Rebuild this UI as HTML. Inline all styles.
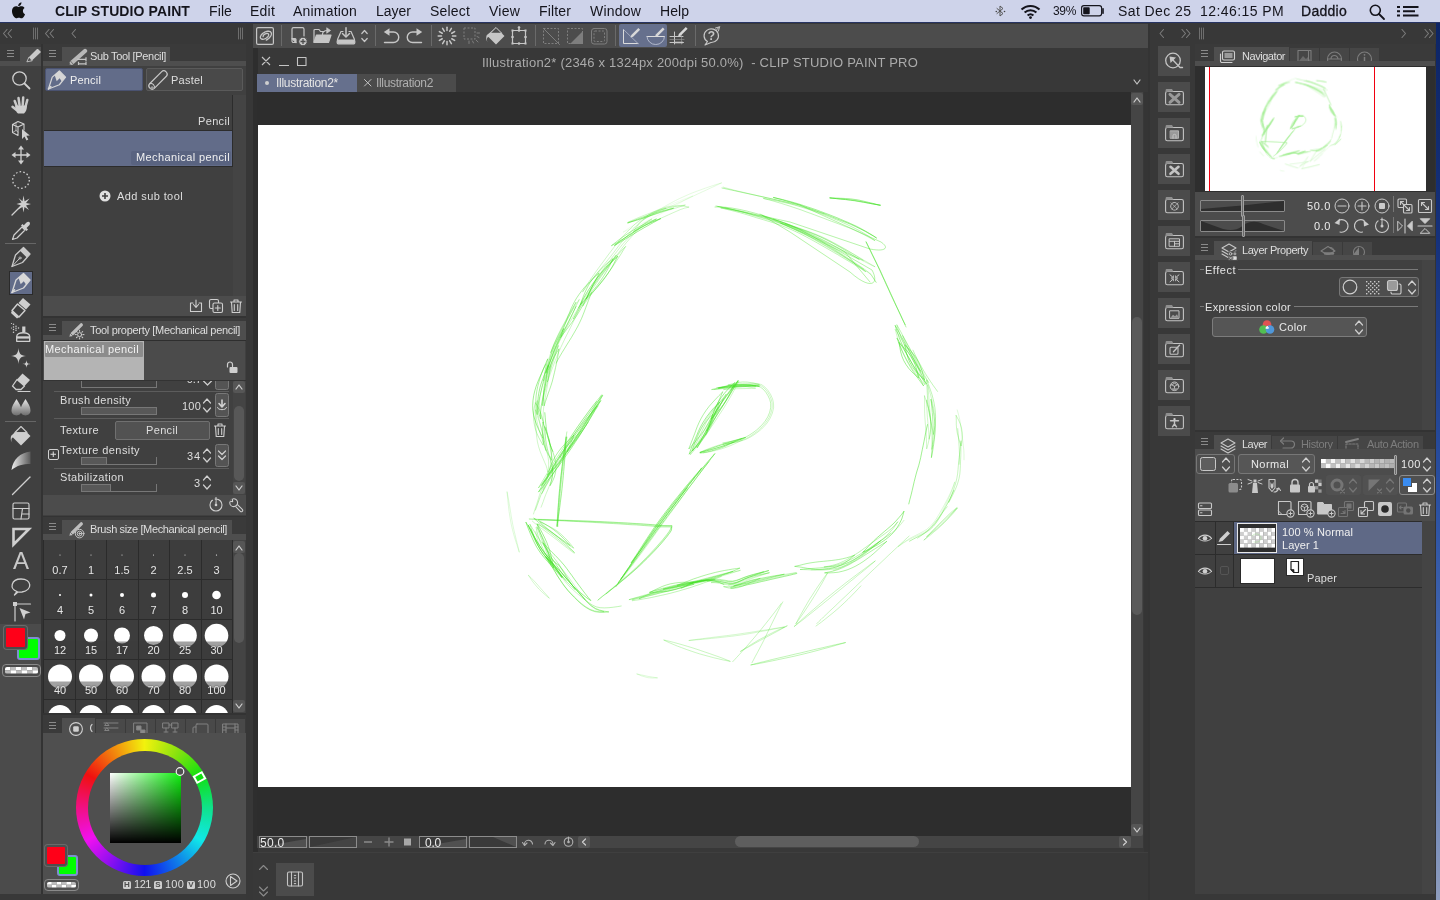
<!DOCTYPE html>
<html lang="en"><head><meta charset="utf-8"><title>CLIP STUDIO PAINT</title>
<style>
html,body{margin:0;padding:0}
body{width:1440px;height:900px;overflow:hidden;position:relative;background:#383838;font-family:"Liberation Sans",sans-serif;-webkit-font-smoothing:antialiased;will-change:transform}
body div,body svg{position:absolute;box-sizing:border-box}
.t{white-space:nowrap}
svg{overflow:visible;fill:none;stroke:#cfcfcf;stroke-width:1.2;stroke-linecap:round;stroke-linejoin:round}
svg text{stroke:none;fill:#dcdcdc;font-family:"Liberation Sans",sans-serif}
.f{fill:#cfcfcf;stroke:none}
.d{stroke:#7a7a7a}
.df{fill:#7a7a7a;stroke:none}
</style></head><body>
<div style="left:0px;top:0px;width:1440px;height:22px;background:#ced3ea;"></div>
<div style="left:0px;top:22px;width:1440px;height:1px;background:#273463;"></div>
<svg style="left:11px;top:2px;" width="16" height="18" viewBox="0 0 16 18"><path class="f" style="fill:#111" d="M10.9 4.3c.7-.8 1.1-1.900 1-3-.9.100-2 .6-2.700 1.400-.6.700-1.100 1.800-1 2.900 1 .1 2-.5 2.700-1.300zM12 5.900c-1.500-.1-2.700.8-3.400.8-.7 0-1.800-.8-3-.8C4.100 5.900 2.700 6.800 1.900 8.200.3 11 1.500 15.100 3 17.300c.8 1.100 1.700 2.300 2.900 2.300 1.100 0 1.600-.7 3-.7s1.800.7 3 .7 2-1.100 2.800-2.200c.9-1.300 1.200-2.500 1.200-2.600 0 0-2.400-.9-2.400-3.600 0-2.300 1.800-3.300 1.900-3.400-1-1.600-2.700-1.800-3.400-1.900z" transform="scale(.88) translate(0,-1)"/></svg>
<div class="t" style="top:4.15px;font-size:14px;line-height:14px;color:#14141c;font-weight:700;letter-spacing:0.102px;left:55px;">CLIP STUDIO PAINT</div>
<div class="t" style="top:4.15px;font-size:14px;line-height:14px;color:#14141c;letter-spacing:0.111px;left:209px;">File</div>
<div class="t" style="top:4.15px;font-size:14px;line-height:14px;color:#14141c;letter-spacing:0.219px;left:250px;">Edit</div>
<div class="t" style="top:4.15px;font-size:14px;line-height:14px;color:#14141c;letter-spacing:0.194px;left:293px;">Animation</div>
<div class="t" style="top:4.15px;font-size:14px;line-height:14px;color:#14141c;left:376px;">Layer</div>
<div class="t" style="top:4.15px;font-size:14px;line-height:14px;color:#14141c;letter-spacing:0.182px;left:430px;">Select</div>
<div class="t" style="top:4.15px;font-size:14px;line-height:14px;color:#14141c;letter-spacing:0.227px;left:489px;">View</div>
<div class="t" style="top:4.15px;font-size:14px;line-height:14px;color:#14141c;letter-spacing:0.148px;left:539px;">Filter</div>
<div class="t" style="top:4.15px;font-size:14px;line-height:14px;color:#14141c;letter-spacing:0.201px;left:590px;">Window</div>
<div class="t" style="top:4.15px;font-size:14px;line-height:14px;color:#14141c;letter-spacing:0.052px;left:660px;">Help</div>
<div class="t" style="top:5.34px;font-size:12px;line-height:12px;color:#14141c;letter-spacing:-0.340px;left:1053px;">39%</div>
<div class="t" style="top:4.15px;font-size:14px;line-height:14px;color:#14141c;letter-spacing:0.416px;left:1118px;white-space:pre;">Sat Dec 25  12:46:15 PM</div>
<div class="t" style="top:4.15px;font-size:14px;line-height:14px;color:#14141c;letter-spacing:0.273px;left:1301px;-webkit-text-stroke:0.3px #14141c;">Daddio</div>
<svg style="left:995px;top:4px;" width="11" height="15" viewBox="0 0 11 15"><path d="M2 4.500l6 5-3 2.500v-10l3 2.500-6 5" style="stroke:#555;stroke-width:1"/><circle cx="1.300" cy="7.500" r=".8" style="fill:#444;stroke:none"/><circle cx="9.500" cy="7.500" r=".8" style="fill:#444;stroke:none"/></svg>
<svg style="left:1020px;top:4px;" width="21" height="15" viewBox="0 0 21 15"><g style="stroke:#14141c;stroke-width:2;stroke-linecap:butt"><path d="M1.500 5.500a13 13 0 0 1 18 0"/><path d="M4.600 8.600a8.600 8.600 0 0 1 11.800 0"/><path d="M7.600 11.500a4.300 4.300 0 0 1 5.800 0"/></g><circle cx="10.500" cy="13.600" r="1.400" style="fill:#14141c;stroke:none"/></svg>
<svg style="left:1081px;top:5px;" width="24" height="12" viewBox="0 0 24 12"><rect x=".6" y=".6" width="20" height="10.300" rx="2.300" style="stroke:#14141c;stroke-width:1.100"/><rect x="2.200" y="2.200" width="6.500" height="7.100" rx=".8" style="fill:#14141c;stroke:none"/><path d="M22 3.800v4.400" style="stroke:#14141c;stroke-width:1.600"/></svg>
<svg style="left:1369px;top:4px;" width="16" height="16" viewBox="0 0 16 16"><circle cx="6.300" cy="6.300" r="5" style="stroke:#14141c;stroke-width:1.600"/><path d="M10 10l5 5" style="stroke:#14141c;stroke-width:1.800"/></svg>
<svg style="left:1397px;top:5px;" width="22" height="13" viewBox="0 0 22 13"><g style="stroke:#14141c;stroke-width:2;stroke-linecap:butt"><path d="M0 2h3M6 2h15.500M0 6.200h3M6 6.200h12M0 10.400h3M6 10.400h15.500"/></g></svg>
<div style="left:1436px;top:23px;width:4px;height:877px;background:linear-gradient(#0d2566 0%,#16327c 25%,#2b51a3 55%,#4a6db3 75%,#8f9dbd 100%);"></div>
<svg style="left:0px;top:21.5px;" width="246" height="23" viewBox="0 0 246 23"><g style="stroke:#7c7c7c;stroke-width:1.100">
<path d="M7 7.500L3.500 11.500L7 15.500M11.500 7.500L8 11.500L11.500 15.500"/>
<path d="M33.500 6v11M35.500 6v11M37.500 6v11" style="stroke-width:.8"/>
<path d="M49 7.500L45.500 11.500L49 15.500M53.500 7.500L50 11.500L53.500 15.500"/>
<path d="M75.500 7.500L72 11.500L75.500 15.500"/>
<path d="M238.500 6v11M240.500 6v11M242.500 6v11" style="stroke-width:.8"/></g></svg>
<div style="left:0px;top:44px;width:246px;height:850px;background:#333;"></div>
<div style="left:0px;top:46px;width:41px;height:848px;background:#404040;"></div>
<div style="left:0px;top:44px;width:41px;height:22px;background:#3a3a3a;"></div>
<div style="left:20px;top:47px;width:21px;height:15px;background:#4e4e4e;"></div>
<div style="left:0px;top:61px;width:41px;height:5px;background:#4e4e4e;"></div>
<svg style="left:7px;top:50px;" width="8" height="7" viewBox="0 0 8 7"><path d="M0 .5h7M0 3.500h7M0 6.500h7" style="stroke:#8a8a8a;stroke-width:1;stroke-linecap:butt"/></svg>
<div style="left:0px;top:624px;width:41px;height:270px;background:#4b4b4b;"></div>
<svg style="left:24px;top:49px;overflow:hidden;" width="18" height="14" viewBox="0 0 18 14"><path d="M3 12.500L5 8L13.500 -.5L17 3L8 11.500z" class="f" style="fill:#c9c9c9"/><path d="M3 12.500L5 8L8 11.500z" style="fill:#4e4e4e;stroke:#c9c9c9;stroke-width:.8"/></svg>
<svg style="left:9.0px;top:68.0px;" width="24" height="24" viewBox="-12.0 -12.0 24 24"><circle cx="-1.500" cy="-1.500" r="6.700" style="stroke-width:1.300"/><path d="M3.500 3.500L8.500 8.500" style="stroke-width:1.800"/></svg>
<svg style="left:9.0px;top:93.0px;" width="24" height="24" viewBox="-12.0 -12.0 24 24"><g style="stroke:#c9c9c9;stroke-width:2.500;stroke-linecap:round"><path d="M-4.300 1L-6.300 -4M-1.500 0L-2.500 -7M1.700 0L2.200 -7.500M4.700 1L6.300 -5M-4.500 5L-8.500 1.800"/></g><path class="f" d="M-5.800 .5L6 .5C6 4 5 7 3 8.500H-3C-4.500 7.500 -6 5 -5.800 .5z"/></svg>
<svg style="left:9.0px;top:118.0px;" width="24" height="24" viewBox="-12.0 -12.0 24 24"><path d="M-8.500 -5.500L-3 -8.500L3 -6L3 0M-8.500 -5.500V2.500L-3 5.500M-8.500 -5.500L-3 -3L3 -6M-3 -3V5.500" style="stroke-width:1.100"/><path class="f" d="M1 -1L1 9L3.500 6.500L5.500 10.500L7.300 9.600L5.300 5.700L8.800 5.500z"/><path d="M-8.500 2.500L-5 .5M-5 .5V-7M-5 .5L-3 2" style="stroke-width:.7"/></svg>
<svg style="left:9.0px;top:143.0px;" width="24" height="24" viewBox="-12.0 -12.0 24 24"><path d="M-6.500 0H6.500M0 -6.500V6.500" style="stroke-width:1.300"/><path class="f" d="M0 -9.500L3 -5.500H-3zM0 9.500L3 5.500H-3zM-9.500 0L-5.500 -3V3zM9.500 0L5.500 -3V3z"/></svg>
<svg style="left:9.0px;top:168.0px;" width="24" height="24" viewBox="-12.0 -12.0 24 24"><circle r="8.300" style="stroke-width:1.300;stroke-dasharray:1.600 2.140;stroke-linecap:butt"/></svg>
<svg style="left:9.0px;top:193.0px;" width="24" height="24" viewBox="-12.0 -12.0 24 24"><path d="M-9 10L1 0" style="stroke-width:1.300"/><path class="f" d="M2.500 -9.500L3.600 -3.800L8.500 -6.500L5 -2L10 -1L5 .5L8 5L3.500 2L2.500 7.500L1.500 2L-3 4.500L0 .2L-4.500 -1L.5 -2.500L-2.500 -7L1.500 -3.800z"/></svg>
<svg style="left:9.0px;top:218.0px;" width="24" height="24" viewBox="-12.0 -12.0 24 24"><path d="M-8.500 9.500L-7 5L1 -3L4 0L-4 8z" style="stroke-width:1.200"/><path class="f" d="M0 -4.500L5.500 1L7 -.5L5.500 -2L8.500 -5C10 -7 8 -9.500 5.500 -7.500L2.800 -4.800L1.500 -6z"/></svg>
<div style="left:5px;top:243px;width:31px;height:1px;background:#666;"></div>
<svg style="left:9.0px;top:245.0px;" width="24" height="24" viewBox="-12.0 -12.0 24 24"><path d="M-9 9.500L-5.500 -2L2.500 -9.500L9 -3L1.500 5.500z" style="stroke:#c9c9c9;stroke-width:1.300"/><path d="M2.500 -9.500L9 -3L5.800 .5L-1 -6.200z" style="fill:#c9c9c9;stroke:none"/><path d="M-9 9.500L-1.500 1.500" style="stroke:#c9c9c9;stroke-width:1"/><circle cx="-1" cy="1" r="1.100" style="stroke:#c9c9c9;stroke-width:.8"/></svg>
<div style="left:9px;top:271px;width:24px;height:24px;background:#626c89;border:1px solid #2a2a2a;"></div>
<svg style="left:9.0px;top:271.0px;" width="24" height="24" viewBox="-12.0 -12.0 24 24"><g transform="scale(1.0)"><path d="M-9 9.500L-5 -3L2.500 -9.500L9 -3L2.500 5z" style="stroke:#d8d8d8;stroke-width:1.300"/><path d="M2.500 -9.500L9 -3L5 1.500L2.800 -1.800L-.3 1.200L-2.500 -5.200z" style="fill:#d8d8d8;stroke:none"/><path d="M-9 9.500L-6.500 6.800" style="stroke:#d8d8d8;stroke-width:1.600"/></g></svg>
<svg style="left:9.0px;top:296.0px;" width="24" height="24" viewBox="-12.0 -12.0 24 24"><path class="f" d="M2 -10L9.500 -3.500L5 1.500L-2.500 -5z"/><path d="M-3.500 -4L4 2.500L-2 9L-9 2.500z" style="stroke-width:1.400"/><path class="f" d="M-9 2.500L-2 9L-4 10.500L-10 5z"/></svg>
<svg style="left:9.0px;top:321.0px;" width="24" height="24" viewBox="-12.0 -12.0 24 24"><path d="M-4.300 8.300V3.500C-4.300 -1.500 8.700 -1.500 8.700 3.500V8.300z" style="stroke-width:1.300"/><rect x="-4.300" y="3.300" width="13" height="2.300" class="f"/><rect x="1.200" y="-6.500" width="3.200" height="5.500" class="f"/><g class="f"><circle cx="-2.500" cy="-5" r=".75"/><circle cx="-5" cy="-6.800" r=".75"/><circle cx="-5" cy="-4.800" r=".75"/><circle cx="-5" cy="-2.800" r=".75"/><circle cx="-7.500" cy="-8.800" r=".75"/><circle cx="-7.500" cy="-6" r=".75"/><circle cx="-7.500" cy="-3.500" r=".75"/><circle cx="-7.500" cy="-.8" r=".75"/><circle cx="-9.500" cy="-9.500" r=".6"/><circle cx="-9.500" cy="-5" r=".6"/></g></svg>
<svg style="left:9.0px;top:346.0px;" width="24" height="24" viewBox="-12.0 -12.0 24 24"><path class="f" d="M-2.500 -10C-2 -4.500 -.5 -2.500 5 -2C-.5 -1.500 -2 .5 -2.500 6C-3 .5 -4.500 -1.500 -10 -2C-4.500 -2.500 -3 -4.500 -2.500 -10zM5.500 2C5.800 5 6.500 5.700 9.500 6C6.500 6.300 5.800 7 5.500 10C5.200 7 4.500 6.300 1.500 6C4.500 5.700 5.200 5 5.500 2z"/></svg>
<svg style="left:9.0px;top:371.0px;" width="24" height="24" viewBox="-12.0 -12.0 24 24"><path class="f" d="M1.500 -9.500L9 -3L3.500 3L-4 -3.500z"/><path d="M-4 -3.500L3.500 3L0 6.500H-5L-8.500 3z" style="stroke-width:1.300"/><path d="M-3 8.500H9" style="stroke-width:1.200"/></svg>
<svg style="left:8.500px;top:396px" width="24" height="24" viewBox="-12 -12 24 24"><defs><linearGradient id="gb" x1="0" y1="0" x2="0" y2="1"><stop offset="0" stop-color="#e8e8e8"/><stop offset="1" stop-color="#6e6e6e"/></linearGradient></defs><path d="M-4.500 -9C-2 -5 .5 -1.500 .5 2.500C.5 9 -9.500 9 -9.500 2.500C-9.500 -1.500 -7 -5 -4.500 -9zM4.500 -9C7 -5 9.500 -1.500 9.500 2.500C9.500 9 -.5 9 -.5 2.500C-.5 -1.500 2 -5 4.500 -9z" style="fill:url(#gb);stroke:none"/></svg>
<div style="left:5px;top:421px;width:31px;height:1px;background:#666;"></div>
<svg style="left:9.0px;top:424.0px;" width="24" height="24" viewBox="-12.0 -12.0 24 24"><path class="f" d="M0 -9.500L9.500 0L0 9.500L-8 1.500C-10 1.500 -10 6 -8.500 6.500C-10.500 6 -11 0 -9 -1z"/><path d="M-6 -3.500L0 -9.500L6 -3.500z" style="fill:#404040;stroke:#c9c9c9;stroke-width:1.100"/></svg>
<svg style="left:8.500px;top:449px" width="24" height="24" viewBox="-12 -12 24 24"><defs><linearGradient id="gg" x1="0" y1="0" x2="1" y2="0"><stop offset="0" stop-color="#f0f0f0"/><stop offset="1" stop-color="#5a5a5a"/></linearGradient></defs><path d="M-9.500 9C-8 -2 -1 -8 9.500 -9.500V3C2 3 -4 4.500 -9.500 9z" style="fill:url(#gg);stroke:none"/></svg>
<svg style="left:9.0px;top:473.5px;" width="24" height="24" viewBox="-12.0 -12.0 24 24"><path d="M-8.500 8.500L9 -9" style="stroke-width:1.300"/></svg>
<svg style="left:9.0px;top:499.0px;" width="24" height="24" viewBox="-12.0 -12.0 24 24"><rect x="-8" y="-8" width="16" height="16" rx="1.500" style="stroke-width:1.150"/><path d="M-8 -2.500H8M1.500 -2.500L0 8M.8 3H8" style="stroke-width:1.150"/></svg>
<svg style="left:9.0px;top:524.0px;" width="24" height="24" viewBox="-12.0 -12.0 24 24"><path d="M-7.500 -7L8 -7L-7.500 8.500z" style="stroke-width:2.600;stroke-linejoin:miter"/></svg>
<div class="t" style="top:548.68px;font-size:24px;line-height:24px;color:#c9c9c9;left:-79px;width:200px;text-align:center;">A</div>
<svg style="left:9.0px;top:574.0px;" width="24" height="24" viewBox="-12.0 -12.0 24 24"><path d="M-4 5.500C-12 3 -10 -7 0 -7C11 -7 12 4 1 6C-1 6.300 -2 6.300 -3 6L-6.500 9z" style="stroke-width:1.300"/></svg>
<svg style="left:9.0px;top:599.0px;" width="24" height="24" viewBox="-12.0 -12.0 24 24"><rect x="-8" y="-9" width="4" height="4" class="f"/><path d="M-6 -7V10M-6 -7H9.500" style="stroke-width:1.200"/><path class="f" d="M-1.500 -3L9.500 1.500L4.500 3L3 8.500z"/></svg>
<div style="left:43px;top:46px;width:203px;height:270px;background:#404040;"></div>
<div style="left:43px;top:44px;width:203px;height:22px;background:#3a3a3a;"></div>
<div style="left:62px;top:47px;width:108px;height:15px;background:#4e4e4e;"></div>
<div style="left:43px;top:61px;width:203px;height:5px;background:#4e4e4e;"></div>
<svg style="left:49px;top:50px;" width="8" height="7" viewBox="0 0 8 7"><path d="M0 .5h7M0 3.500h7M0 6.500h7" style="stroke:#8a8a8a;stroke-width:1;stroke-linecap:butt"/></svg>
<div class="t" style="top:51.19px;font-size:11px;line-height:11px;color:#dedede;letter-spacing:-0.338px;left:90px;">Sub Tool [Pencil]</div>
<div style="left:45px;top:68px;width:98px;height:23px;background:#626c89;border-radius:2px;border:1px solid #4a5270;"></div>
<div style="left:146px;top:68px;width:97px;height:23px;background:#494949;border-radius:2px;border:1px solid #5a5a5a;"></div>
<div class="t" style="top:74.69px;font-size:11px;line-height:11px;color:#f0f0f0;letter-spacing:0.173px;left:70px;">Pencil</div>
<div class="t" style="top:74.69px;font-size:11px;line-height:11px;color:#dedede;letter-spacing:0.238px;left:171px;">Pastel</div>
<svg style="left:66px;top:47px;overflow:hidden" width="24" height="18" viewBox="66 47 24 18"><path d="M71.89 62.67L85.00 51.00" style="stroke:#b8b8b8;stroke-width:4.3;stroke-linecap:round"/><path d="M69.50 64.80L72.95 63.87L70.83 61.48z" style="fill:#b8b8b8;stroke:none"/><path d="M73.15 64.09L70.63 61.25" style="stroke:#4e4e4e;stroke-width:.7"/><g style="stroke:#c4c4c4;stroke-width:1.200;stroke-linecap:butt"><path d="M77 59.300H86.500M78 63.800H86.500M86 57.300V61.300M86 61.800V65.800M78.500 61.800V65.800"/></g></svg>
<svg style="left:45.0px;top:67.5px;" width="24" height="24" viewBox="-12.0 -12.0 24 24"><g transform="scale(0.95)"><path d="M-9 9.500L-5 -3L2.500 -9.500L9 -3L2.500 5z" style="stroke:#d6d6d6;stroke-width:1.300"/><path d="M2.500 -9.500L9 -3L5 1.500L2.800 -1.800L-.3 1.200L-2.500 -5.200z" style="fill:#d6d6d6;stroke:none"/><path d="M-9 9.500L-6.500 6.800" style="stroke:#d6d6d6;stroke-width:1.600"/></g></svg>
<svg style="left:146.0px;top:68.0px;" width="24" height="24" viewBox="-12.0 -12.0 24 24"><g transform="rotate(-45)"><rect x="-11.500" y="-3.300" width="23" height="6.600" rx="3.300" style="stroke:#c8c8c8;stroke-width:1.200"/><path d="M-8.500 -3.200A3.500 3.500 0 0 1 -8.500 3.200" style="stroke:#c8c8c8;stroke-width:1"/><path d="M-11.300 0A3.300 3.300 0 0 0 -8 3.300L-8.500 0z" style="fill:#9a9a9a;stroke:none"/></g></svg>
<div style="left:233px;top:95px;width:13px;height:201px;background:#444;"></div>
<div style="left:232px;top:95px;width:1px;height:72px;background:#2c2c2c;"></div>
<div style="left:44px;top:130px;width:188px;height:1px;background:#2c2c2c;"></div>
<div style="left:44px;top:131px;width:188px;height:35px;background:#626c89;"></div>
<div style="left:44px;top:166px;width:188px;height:1px;background:#2c2c2c;"></div>
<div style="left:131px;top:150.5px;width:100px;height:14.5px;background:#596380;border-radius:2px;"></div>
<div class="t" style="top:115.99px;font-size:11px;line-height:11px;color:#dedede;letter-spacing:0.340px;left:198px;">Pencil</div>
<div class="t" style="top:151.99px;font-size:11px;line-height:11px;color:#f0f0f0;letter-spacing:0.386px;left:136px;">Mechanical pencil</div>
<div class="t" style="top:190.99px;font-size:11px;line-height:11px;color:#dedede;letter-spacing:0.404px;left:117px;">Add sub tool</div>
<svg style="left:92.5px;top:184.0px;" width="24" height="24" viewBox="-12.0 -12.0 24 24"><circle r="5.500" class="f" style="fill:#e0e0e0"/><path d="M-3 0h6M0 -3v6" style="stroke:#404040;stroke-width:1.600;stroke-linecap:butt"/></svg>
<div style="left:43px;top:296px;width:203px;height:20px;background:#4c4c4c;"></div>
<svg style="left:184.0px;top:294.0px;" width="24" height="24" viewBox="-12.0 -12.0 24 24"><path d="M-5.500 -3v8.500h11v-8.500M-5.500 -3h2.500M5.500 -3h-2.500M0 -6v7M-2.500 -1.500L0 1.500L2.500 -1.500" style="stroke-width:1.100"/></svg>
<svg style="left:204.0px;top:294.0px;" width="24" height="24" viewBox="-12.0 -12.0 24 24"><rect x="-6.500" y="-6.500" width="9" height="9" rx="1.500" style="stroke-width:1.100"/><rect x="-3" y="-3" width="9.500" height="9.500" rx="1.500" style="stroke-width:1.100;fill:#4c4c4c"/><path d="M1.800 -0.500v5M-.7 2h5" style="stroke-width:1.100"/></svg>
<svg style="left:224.0px;top:294.0px;" width="24" height="24" viewBox="-12.0 -12.0 24 24"><g style="stroke:#cfcfcf;stroke-width:1.100"><path d="M-5.500 -4h11M-2 -4v-2h4v2M-4.500 -4l.7 10.500h7.600l.7-10.500M-1.700 -1.500v6M1.700 -1.500v6"/></g></svg>
<div style="left:43px;top:320px;width:203px;height:196px;background:#404040;"></div>
<div style="left:43px;top:318px;width:203px;height:22px;background:#3a3a3a;"></div>
<div style="left:62px;top:321px;width:184px;height:15px;background:#4e4e4e;"></div>
<div style="left:43px;top:335px;width:203px;height:6px;background:#4e4e4e;"></div>
<svg style="left:49px;top:324px;" width="8" height="7" viewBox="0 0 8 7"><path d="M0 .5h7M0 3.500h7M0 6.500h7" style="stroke:#8a8a8a;stroke-width:1;stroke-linecap:butt"/></svg>
<div class="t" style="top:325.19px;font-size:11px;line-height:11px;color:#dedede;letter-spacing:-0.309px;left:90px;">Tool property [Mechanical pencil]</div>
<div style="left:54px;top:391px;width:175px;height:1px;background:#5c5c5c;"></div>
<div style="left:54px;top:418px;width:175px;height:1px;background:#5c5c5c;"></div>
<div style="left:54px;top:468px;width:175px;height:1px;background:#5c5c5c;"></div>
<div style="left:233px;top:380px;width:12px;height:115px;background:#444;"></div>
<div style="left:233px;top:381px;width:12px;height:12px;background:#565656;border-radius:2px;"></div>
<svg style="left:233px;top:381px" width="12" height="12" viewBox="-6 -6 12 12"><path d="M-3 2L0 -2L3 2" style="stroke:#cfcfcf;stroke-width:1.2"/></svg>
<div style="left:234px;top:406px;width:10px;height:75px;background:#585858;border-radius:5px;"></div>
<div style="left:233px;top:482px;width:12px;height:12px;background:#565656;border-radius:2px;"></div>
<svg style="left:233px;top:482px" width="12" height="12" viewBox="-6 -6 12 12"><path d="M-3 -2L0 2L3 -2" style="stroke:#cfcfcf;stroke-width:1.2"/></svg>
<div style="left:81px;top:380px;width:76px;height:8px;border-bottom:1px solid #777;border-right:1px solid #777;border-left:1px solid #777;"></div>
<svg style="left:203px;top:380px;" width="9" height="6" viewBox="0 0 9 6"><path d="M.5 1L4.500 5L8.500 1" style="stroke-width:1.200"/></svg>
<div style="left:215px;top:378px;width:14px;height:12px;background:#545454;border:1px solid #787878;border-radius:2.500px;"></div>
<div style="left:180px;top:380px;width:24px;height:5px;overflow:hidden"><div class="t" style="left:6.800px;top:-6.500px;font-size:11px;line-height:11px;color:#dedede;letter-spacing:-.15px">0.7</div></div>
<div style="left:43px;top:340px;width:203px;height:1px;background:#2e2e2e;"></div>
<div style="left:43px;top:341px;width:202px;height:39px;background:#4b4b4b;"></div>
<div style="left:44px;top:341px;width:100px;height:38.5px;background:#b4b4b4;"></div>
<div style="left:45px;top:342px;width:98px;height:15px;background:#8c8c8c;border-radius:1px;"></div>
<div class="t" style="top:343.69px;font-size:11px;line-height:11px;color:#f2f2f2;letter-spacing:0.386px;left:45px;">Mechanical pencil</div>
<div style="left:43px;top:379.5px;width:203px;height:0.8px;background:#333;"></div>
<svg style="left:220.0px;top:355.0px;" width="24" height="24" viewBox="-12.0 -12.0 24 24"><rect x="-2.500" y="0" width="8" height="6" class="f" rx="1"/><path d="M-4.500 0v-2.500a2.500 2.500 0 0 1 5 0V-.5" style="stroke-width:1.200"/></svg>
<div class="t" style="top:394.69px;font-size:11px;line-height:11px;color:#dedede;letter-spacing:0.335px;left:60px;">Brush density</div>
<div style="left:81px;top:407px;width:76px;height:8px;background:#585858;border:1px solid #777;"></div>
<div class="t" style="top:400.69px;font-size:11px;line-height:11px;color:#dedede;letter-spacing:0.215px;left:182px;">100</div>
<svg style="left:201px;top:395.0px" width="12" height="12" viewBox="-6 -6 12 12"><path d="M-3.5 2L0 -2L3.5 2" style="stroke:#cfcfcf;stroke-width:1.2"/></svg>
<svg style="left:201px;top:404.0px" width="12" height="12" viewBox="-6 -6 12 12"><path d="M-3.5 -2L0 2L3.5 -2" style="stroke:#cfcfcf;stroke-width:1.2"/></svg>
<div style="left:215px;top:393px;width:14px;height:24px;background:#545454;border:1px solid #787878;border-radius:2.500px;"></div>
<svg style="left:210.0px;top:393.0px;" width="24" height="24" viewBox="-12.0 -12.0 24 24"><path d="M0 -5v6M-3 -1.500L0 2L3 -1.500" style="stroke-width:1.600"/><path d="M-4.500 2.500c0 3 9 3 9 0" style="stroke-width:1"/></svg>
<div class="t" style="top:424.69px;font-size:11px;line-height:11px;color:#dedede;letter-spacing:0.418px;left:60px;">Texture</div>
<div style="left:115px;top:421px;width:95px;height:19px;background:#525252;border:1px solid #707070;border-radius:2px;"></div>
<div class="t" style="top:424.69px;font-size:11px;line-height:11px;color:#dedede;letter-spacing:0.340px;left:146px;">Pencil</div>
<svg style="left:208.0px;top:418.0px;" width="24" height="24" viewBox="-12.0 -12.0 24 24"><g style="stroke:#cfcfcf;stroke-width:1.100"><path d="M-5.500 -4h11M-2 -4v-2h4v2M-4.500 -4l.7 10.500h7.600l.7-10.500M-1.700 -1.500v6M1.700 -1.500v6"/></g></svg>
<div style="left:48px;top:449px;width:10.5px;height:10.5px;border:1px solid #d0d0d0;border-radius:2px;"></div>
<svg style="left:48px;top:449px;" width="11" height="11" viewBox="0 0 11 11"><path d="M2.500 5.250h5.500M5.250 2.500v5.500" style="stroke:#e0e0e0;stroke-width:1;stroke-linecap:butt"/></svg>
<div class="t" style="top:445.19px;font-size:11px;line-height:11px;color:#dedede;letter-spacing:0.401px;left:60px;">Texture density</div>
<div style="left:81px;top:457px;width:76px;height:8px;border-bottom:1px solid #777;border-right:1px solid #777;"></div>
<div style="left:81px;top:457px;width:26px;height:8px;background:#585858;border:1px solid #777;"></div>
<div class="t" style="top:450.69px;font-size:11px;line-height:11px;color:#dedede;letter-spacing:0.882px;left:187px;">34</div>
<svg style="left:201px;top:445.0px" width="12" height="12" viewBox="-6 -6 12 12"><path d="M-3.5 2L0 -2L3.5 2" style="stroke:#cfcfcf;stroke-width:1.2"/></svg>
<svg style="left:201px;top:454.0px" width="12" height="12" viewBox="-6 -6 12 12"><path d="M-3.5 -2L0 2L3.5 -2" style="stroke:#cfcfcf;stroke-width:1.2"/></svg>
<div style="left:215px;top:444px;width:14px;height:23px;background:#545454;border:1px solid #787878;border-radius:2.500px;"></div>
<svg style="left:210.0px;top:443.5px;" width="24" height="24" viewBox="-12.0 -12.0 24 24"><path d="M-3.500 -5L0 -1.500L3.500 -5M-3.500 0L0 3.500L3.500 0" style="stroke-width:1.200"/></svg>
<div class="t" style="top:471.69px;font-size:11px;line-height:11px;color:#dedede;letter-spacing:0.360px;left:60px;">Stabilization</div>
<div style="left:81px;top:484px;width:76px;height:8px;border-bottom:1px solid #777;border-right:1px solid #777;"></div>
<div style="left:81px;top:484px;width:30px;height:8px;background:#585858;border:1px solid #777;"></div>
<div class="t" style="top:477.69px;font-size:11px;line-height:11px;color:#dedede;letter-spacing:0.882px;left:194px;">3</div>
<svg style="left:201px;top:472.0px" width="12" height="12" viewBox="-6 -6 12 12"><path d="M-3.5 2L0 -2L3.5 2" style="stroke:#cfcfcf;stroke-width:1.2"/></svg>
<svg style="left:201px;top:481.0px" width="12" height="12" viewBox="-6 -6 12 12"><path d="M-3.5 -2L0 2L3.5 -2" style="stroke:#cfcfcf;stroke-width:1.2"/></svg>
<div style="left:43px;top:495px;width:203px;height:20px;background:#4c4c4c;"></div>
<svg style="left:204.0px;top:493.0px;" width="24" height="24" viewBox="-12.0 -12.0 24 24"><circle r="6" style="stroke-width:1.100"/><circle r="1.300" class="f"/><path d="M0 0V-7.500" style="stroke-width:1.100"/><path d="M-3 -6.800L-1.500 -4" style="stroke:#4c4c4c;stroke-width:2"/></svg>
<svg style="left:224.0px;top:493.0px;" width="24" height="24" viewBox="-12.0 -12.0 24 24"><path d="M-.5 -.5L5.300 5.300" style="stroke:#cfcfcf;stroke-width:3.800"/><path d="M-.5 -.5L5.300 5.300" style="stroke:#4c4c4c;stroke-width:1.700"/><circle cx="-2.300" cy="-2.300" r="3.900" style="fill:#4c4c4c;stroke:#cfcfcf;stroke-width:1.100"/><path d="M-2.800 -2.800L-3.300 -8L-8 -3.300z" style="fill:#4c4c4c;stroke:none"/><path d="M-5.900 -3.700L-3.300 -3.300L-3.700 -5.900" style="stroke:#cfcfcf;stroke-width:1.100"/></svg>
<div style="left:43px;top:519px;width:203px;height:194px;background:#404040;"></div>
<div style="left:43px;top:517px;width:203px;height:22px;background:#3a3a3a;"></div>
<div style="left:62px;top:520px;width:170px;height:15px;background:#4e4e4e;"></div>
<div style="left:43px;top:534px;width:203px;height:6px;background:#4e4e4e;"></div>
<svg style="left:49px;top:523px;" width="8" height="7" viewBox="0 0 8 7"><path d="M0 .5h7M0 3.500h7M0 6.500h7" style="stroke:#8a8a8a;stroke-width:1;stroke-linecap:butt"/></svg>
<div class="t" style="top:523.69px;font-size:11px;line-height:11px;color:#dedede;letter-spacing:-0.365px;left:90px;">Brush size [Mechanical pencil]</div>
<div style="left:44px;top:540px;width:188px;height:173px;background:#3d3d3d;"></div>
<div style="left:43px;top:540px;width:1px;height:173px;background:#2b2b2b;"></div>
<div style="left:75px;top:540px;width:1px;height:173px;background:#2b2b2b;"></div>
<div style="left:106px;top:540px;width:1px;height:173px;background:#2b2b2b;"></div>
<div style="left:138px;top:540px;width:1px;height:173px;background:#2b2b2b;"></div>
<div style="left:169px;top:540px;width:1px;height:173px;background:#2b2b2b;"></div>
<div style="left:201px;top:540px;width:1px;height:173px;background:#2b2b2b;"></div>
<div style="left:232px;top:540px;width:1px;height:173px;background:#2b2b2b;"></div>
<div style="left:44px;top:579px;width:188px;height:1px;background:#2b2b2b;"></div>
<div style="left:44px;top:619px;width:188px;height:1px;background:#2b2b2b;"></div>
<div style="left:44px;top:659px;width:188px;height:1px;background:#2b2b2b;"></div>
<div style="left:44px;top:699px;width:188px;height:1px;background:#2b2b2b;"></div>
<svg style="left:44px;top:540px;overflow:hidden" width="188" height="173" viewBox="0 0 188 173"><circle cx="16" cy="15" r="0.5" style="fill:#fff;stroke:none"/><circle cx="47" cy="15" r="0.5" style="fill:#fff;stroke:none"/><circle cx="78" cy="15" r="0.5" style="fill:#fff;stroke:none"/><circle cx="109.5" cy="15" r="0.5" style="fill:#fff;stroke:none"/><circle cx="141" cy="15" r="0.5" style="fill:#fff;stroke:none"/><circle cx="172.5" cy="15" r="0.6" style="fill:#fff;stroke:none"/><circle cx="16" cy="55" r="1" style="fill:#fff;stroke:none"/><circle cx="47" cy="55" r="1.5" style="fill:#fff;stroke:none"/><circle cx="78" cy="55" r="2" style="fill:#fff;stroke:none"/><circle cx="109.5" cy="55" r="2.5" style="fill:#fff;stroke:none"/><circle cx="141" cy="55" r="3" style="fill:#fff;stroke:none"/><circle cx="172.5" cy="55" r="4.3" style="fill:#fff;stroke:none"/><circle cx="16" cy="95.5" r="5.5" style="fill:#fff;stroke:none"/><circle cx="47" cy="95.5" r="7" style="fill:#fff;stroke:none"/><circle cx="78" cy="95.5" r="8" style="fill:#fff;stroke:none"/><circle cx="109.5" cy="95.5" r="9.5" style="fill:#fff;stroke:none"/><circle cx="141" cy="95.5" r="11.8" style="fill:#fff;stroke:none"/><circle cx="172.5" cy="95.5" r="11.8" style="fill:#fff;stroke:none"/><circle cx="16" cy="136.5" r="12" style="fill:#fff;stroke:none"/><circle cx="47" cy="136.5" r="12" style="fill:#fff;stroke:none"/><circle cx="78" cy="136.5" r="12" style="fill:#fff;stroke:none"/><circle cx="109.5" cy="136.5" r="12" style="fill:#fff;stroke:none"/><circle cx="141" cy="136.5" r="12" style="fill:#fff;stroke:none"/><circle cx="172.5" cy="136.5" r="12" style="fill:#fff;stroke:none"/><circle cx="16" cy="177" r="12" style="fill:#fff;stroke:none"/><circle cx="47" cy="177" r="12" style="fill:#fff;stroke:none"/><circle cx="78" cy="177" r="12" style="fill:#fff;stroke:none"/><circle cx="109.5" cy="177" r="12" style="fill:#fff;stroke:none"/><circle cx="141" cy="177" r="12" style="fill:#fff;stroke:none"/><circle cx="172.5" cy="177" r="12" style="fill:#fff;stroke:none"/><clipPath id="gc"><rect x="0" y="0" width="188" height="173"/></clipPath><rect x="0" y="101.500" width="188" height="18" style="fill:#3d3d3d;opacity:.48;stroke:none"/><rect x="0" y="141.500" width="188" height="18" style="fill:#3d3d3d;opacity:.48;stroke:none"/></svg>
<div style="left:75px;top:540px;width:1px;height:173px;background:#2b2b2b;"></div>
<div style="left:106px;top:540px;width:1px;height:173px;background:#2b2b2b;"></div>
<div style="left:138px;top:540px;width:1px;height:173px;background:#2b2b2b;"></div>
<div style="left:169px;top:540px;width:1px;height:173px;background:#2b2b2b;"></div>
<div style="left:201px;top:540px;width:1px;height:173px;background:#2b2b2b;"></div>
<div style="left:44px;top:579px;width:188px;height:1px;background:#2b2b2b;"></div>
<div style="left:44px;top:619px;width:188px;height:1px;background:#2b2b2b;"></div>
<div style="left:44px;top:659px;width:188px;height:1px;background:#2b2b2b;"></div>
<div style="left:44px;top:699px;width:188px;height:1px;background:#2b2b2b;"></div>
<div class="t" style="top:564.69px;font-size:11px;line-height:11px;color:#e6e6e6;left:-40px;width:200px;text-align:center;text-shadow:0 0 2px #3d3d3d,0 0 1px #3d3d3d;">0.7</div>
<div class="t" style="top:564.69px;font-size:11px;line-height:11px;color:#e6e6e6;left:-9px;width:200px;text-align:center;text-shadow:0 0 2px #3d3d3d,0 0 1px #3d3d3d;">1</div>
<div class="t" style="top:564.69px;font-size:11px;line-height:11px;color:#e6e6e6;left:22px;width:200px;text-align:center;text-shadow:0 0 2px #3d3d3d,0 0 1px #3d3d3d;">1.5</div>
<div class="t" style="top:564.69px;font-size:11px;line-height:11px;color:#e6e6e6;left:53.5px;width:200px;text-align:center;text-shadow:0 0 2px #3d3d3d,0 0 1px #3d3d3d;">2</div>
<div class="t" style="top:564.69px;font-size:11px;line-height:11px;color:#e6e6e6;left:85px;width:200px;text-align:center;text-shadow:0 0 2px #3d3d3d,0 0 1px #3d3d3d;">2.5</div>
<div class="t" style="top:564.69px;font-size:11px;line-height:11px;color:#e6e6e6;left:116.5px;width:200px;text-align:center;text-shadow:0 0 2px #3d3d3d,0 0 1px #3d3d3d;">3</div>
<div class="t" style="top:604.69px;font-size:11px;line-height:11px;color:#e6e6e6;left:-40px;width:200px;text-align:center;text-shadow:0 0 2px #3d3d3d,0 0 1px #3d3d3d;">4</div>
<div class="t" style="top:604.69px;font-size:11px;line-height:11px;color:#e6e6e6;left:-9px;width:200px;text-align:center;text-shadow:0 0 2px #3d3d3d,0 0 1px #3d3d3d;">5</div>
<div class="t" style="top:604.69px;font-size:11px;line-height:11px;color:#e6e6e6;left:22px;width:200px;text-align:center;text-shadow:0 0 2px #3d3d3d,0 0 1px #3d3d3d;">6</div>
<div class="t" style="top:604.69px;font-size:11px;line-height:11px;color:#e6e6e6;left:53.5px;width:200px;text-align:center;text-shadow:0 0 2px #3d3d3d,0 0 1px #3d3d3d;">7</div>
<div class="t" style="top:604.69px;font-size:11px;line-height:11px;color:#e6e6e6;left:85px;width:200px;text-align:center;text-shadow:0 0 2px #3d3d3d,0 0 1px #3d3d3d;">8</div>
<div class="t" style="top:604.69px;font-size:11px;line-height:11px;color:#e6e6e6;left:116.5px;width:200px;text-align:center;text-shadow:0 0 2px #3d3d3d,0 0 1px #3d3d3d;">10</div>
<div class="t" style="top:644.69px;font-size:11px;line-height:11px;color:#e6e6e6;left:-40px;width:200px;text-align:center;text-shadow:0 0 2px #3d3d3d,0 0 1px #3d3d3d;">12</div>
<div class="t" style="top:644.69px;font-size:11px;line-height:11px;color:#e6e6e6;left:-9px;width:200px;text-align:center;text-shadow:0 0 2px #3d3d3d,0 0 1px #3d3d3d;">15</div>
<div class="t" style="top:644.69px;font-size:11px;line-height:11px;color:#e6e6e6;left:22px;width:200px;text-align:center;text-shadow:0 0 2px #3d3d3d,0 0 1px #3d3d3d;">17</div>
<div class="t" style="top:644.69px;font-size:11px;line-height:11px;color:#e6e6e6;left:53.5px;width:200px;text-align:center;text-shadow:0 0 2px #3d3d3d,0 0 1px #3d3d3d;">20</div>
<div class="t" style="top:644.69px;font-size:11px;line-height:11px;color:#e6e6e6;left:85px;width:200px;text-align:center;text-shadow:0 0 2px #3d3d3d,0 0 1px #3d3d3d;">25</div>
<div class="t" style="top:644.69px;font-size:11px;line-height:11px;color:#e6e6e6;left:116.5px;width:200px;text-align:center;text-shadow:0 0 2px #3d3d3d,0 0 1px #3d3d3d;">30</div>
<div class="t" style="top:684.69px;font-size:11px;line-height:11px;color:#e6e6e6;left:-40px;width:200px;text-align:center;text-shadow:0 0 2px #3d3d3d,0 0 1px #3d3d3d;">40</div>
<div class="t" style="top:684.69px;font-size:11px;line-height:11px;color:#e6e6e6;left:-9px;width:200px;text-align:center;text-shadow:0 0 2px #3d3d3d,0 0 1px #3d3d3d;">50</div>
<div class="t" style="top:684.69px;font-size:11px;line-height:11px;color:#e6e6e6;left:22px;width:200px;text-align:center;text-shadow:0 0 2px #3d3d3d,0 0 1px #3d3d3d;">60</div>
<div class="t" style="top:684.69px;font-size:11px;line-height:11px;color:#e6e6e6;left:53.5px;width:200px;text-align:center;text-shadow:0 0 2px #3d3d3d,0 0 1px #3d3d3d;">70</div>
<div class="t" style="top:684.69px;font-size:11px;line-height:11px;color:#e6e6e6;left:85px;width:200px;text-align:center;text-shadow:0 0 2px #3d3d3d,0 0 1px #3d3d3d;">80</div>
<div class="t" style="top:684.69px;font-size:11px;line-height:11px;color:#e6e6e6;left:116.5px;width:200px;text-align:center;text-shadow:0 0 2px #3d3d3d,0 0 1px #3d3d3d;">100</div>
<div style="left:233px;top:540px;width:12px;height:173px;background:#444;"></div>
<div style="left:233px;top:541px;width:12px;height:12px;background:#565656;border-radius:2px;"></div>
<svg style="left:233px;top:541.5px" width="12" height="12" viewBox="-6 -6 12 12"><path d="M-3 2L0 -2L3 2" style="stroke:#cfcfcf;stroke-width:1.2"/></svg>
<div style="left:234px;top:553px;width:10px;height:90px;background:#585858;border-radius:5px;"></div>
<div style="left:233px;top:700px;width:12px;height:12px;background:#565656;border-radius:2px;"></div>
<svg style="left:233px;top:700px" width="12" height="12" viewBox="-6 -6 12 12"><path d="M-3 -2L0 2L3 -2" style="stroke:#cfcfcf;stroke-width:1.2"/></svg>
<div style="left:43px;top:717px;width:203px;height:177px;background:#4f4f4f;"></div>
<div style="left:43px;top:715px;width:203px;height:18px;background:#3a3a3a;"></div>
<div style="left:62px;top:718px;width:33px;height:16px;background:#4f4f4f;"></div>
<svg style="left:49px;top:722px;" width="8" height="7" viewBox="0 0 8 7"><path d="M0 .5h7M0 3.500h7M0 6.500h7" style="stroke:#8a8a8a;stroke-width:1;stroke-linecap:butt"/></svg>
<div style="left:96px;top:719px;width:29px;height:14px;background:#494949;"></div>
<div style="left:126px;top:719px;width:29px;height:14px;background:#494949;"></div>
<div style="left:156px;top:719px;width:29px;height:14px;background:#494949;"></div>
<div style="left:186px;top:719px;width:29px;height:14px;background:#494949;"></div>
<div style="left:216px;top:719px;width:29px;height:14px;background:#494949;"></div>
<svg style="left:88px;top:723px;clip-path:inset(0 0 0.5px 0);" width="6" height="10" viewBox="0 0 6 10"><path d="M4 1.500c-2 1.500-2 5.500 0 7" style="stroke-width:1.200"/></svg>
<svg style="left:96px;top:719px;overflow:hidden" width="29" height="14" viewBox="0 0 29 14"><g style="stroke:#828282;stroke-width:1"><path d="M8 4h14M8 9h14M11 4l2 2.500h-4zM11 9l2 2.500h-4z"/></g></svg>
<svg style="left:126px;top:719px;overflow:hidden" width="29" height="14" viewBox="0 0 29 14"><g style="stroke:#828282;stroke-width:1"><rect x="8" y="4" width="13" height="12"/><rect x="11" y="7" width="4" height="4" style="fill:#8a8a8a"/><rect x="15" y="11" width="4" height="4" style="fill:#8a8a8a"/></g></svg>
<svg style="left:156px;top:719px;overflow:hidden" width="29" height="14" viewBox="0 0 29 14"><g style="stroke:#828282;stroke-width:1"><rect x="7" y="4" width="6" height="5"/><rect x="16" y="4" width="6" height="5"/><path d="M10 9v4M19 9v4M13 6h3M8 13h4M17 13h4"/></g></svg>
<svg style="left:186px;top:719px;overflow:hidden" width="29" height="14" viewBox="0 0 29 14"><g style="stroke:#828282;stroke-width:1"><rect x="10" y="5" width="12" height="12" rx="1"/><path d="M7 14v-5a1 1 0 0 1 1 -1h2"/></g></svg>
<svg style="left:216px;top:719px;overflow:hidden" width="29" height="14" viewBox="0 0 29 14"><g style="stroke:#828282;stroke-width:1"><rect x="7" y="5" width="15" height="12"/><path d="M10 5v9M19 5v9M10 9h9M7 8h3M7 11h3M19 8h3M19 11h3"/></g></svg>
<svg style="left:63.900000000000006px;top:716.7px;" width="24" height="24" viewBox="-12.0 -12.0 24 24"><circle r="6.400" style="stroke-width:1.100"/><rect x="-2.800" y="-2.800" width="5.600" height="5.600" rx="1.200" class="f"/></svg>
<div style="left:76px;top:739px;width:137px;height:137px;border-radius:50%;background:conic-gradient(#f2f20d 0deg,#8be20f 30deg,#10e010 60deg,#0fe28a 90deg,#10e8e8 120deg,#0f78e8 150deg,#1010f0 180deg,#8510f0 210deg,#f010f0 240deg,#f01082 270deg,#f01010 300deg,#f2820d 330deg,#f2f20d 360deg);"></div>
<div style="left:87.5px;top:750.5px;width:114px;height:114px;background:#4f4f4f;border-radius:50%;"></div>
<div style="left:110px;top:772.5px;width:70.5px;height:70.5px;background:linear-gradient(to bottom,rgba(0,0,0,0),#000),linear-gradient(to right,#fff,#10f010);"></div>
<svg style="left:174px;top:765px;" width="12" height="12" viewBox="0 0 12 12"><circle cx="6" cy="6.500" r="3.800" style="stroke:#f4f4f4;stroke-width:1.200;fill:#4f4f4f"/></svg>
<div style="left:194px;top:772.5px;width:11px;height:9px;background:#0ee20e;border:2px solid #fff;transform:rotate(-29deg);"></div>
<div style="left:56.5px;top:854.5px;width:21.5px;height:21.5px;background:#00ff00;border:2px solid #7d8fd0;border-radius:3px;"></div>
<div style="left:45px;top:844.5px;width:21.5px;height:21.5px;background:#ff0018;border:2px solid #4f4f4f;border-radius:3px;box-shadow:0 0 0 1px #6a6a6a;"></div>
<div style="left:44px;top:879px;width:35px;height:11.5px;border:1px solid #8a8a8a;border-radius:4px;"></div>
<svg style="left:47px;top:882px;border-radius:2px;overflow:hidden" width="29" height="5.5"><rect x="0.00" y="0.00" width="4.83" height="2.75" style="fill:#fff;stroke:none"/><rect x="0.00" y="2.75" width="4.83" height="2.75" style="fill:#bdbdbd;stroke:none"/><rect x="4.83" y="0.00" width="4.83" height="2.75" style="fill:#bdbdbd;stroke:none"/><rect x="4.83" y="2.75" width="4.83" height="2.75" style="fill:#fff;stroke:none"/><rect x="9.67" y="0.00" width="4.83" height="2.75" style="fill:#fff;stroke:none"/><rect x="9.67" y="2.75" width="4.83" height="2.75" style="fill:#bdbdbd;stroke:none"/><rect x="14.50" y="0.00" width="4.83" height="2.75" style="fill:#bdbdbd;stroke:none"/><rect x="14.50" y="2.75" width="4.83" height="2.75" style="fill:#fff;stroke:none"/><rect x="19.33" y="0.00" width="4.83" height="2.75" style="fill:#fff;stroke:none"/><rect x="19.33" y="2.75" width="4.83" height="2.75" style="fill:#bdbdbd;stroke:none"/><rect x="24.17" y="0.00" width="4.83" height="2.75" style="fill:#bdbdbd;stroke:none"/><rect x="24.17" y="2.75" width="4.83" height="2.75" style="fill:#fff;stroke:none"/></svg>
<div style="left:16.5px;top:636.5px;width:23px;height:23px;background:#00ff00;border:2px solid #7d8fd0;border-radius:3px;"></div>
<div style="left:3.5px;top:625.5px;width:23px;height:23px;background:#ff0018;border:2px solid #4b4b4b;border-radius:3px;box-shadow:0 0 0 1px #6a6a6a;"></div>
<div style="left:2px;top:664px;width:39px;height:12.5px;border:1px solid #8a8a8a;border-radius:4px;"></div>
<svg style="left:5px;top:667px;border-radius:2px;overflow:hidden" width="33" height="6.5"><rect x="0.00" y="0.00" width="5.50" height="3.25" style="fill:#fff;stroke:none"/><rect x="0.00" y="3.25" width="5.50" height="3.25" style="fill:#bdbdbd;stroke:none"/><rect x="5.50" y="0.00" width="5.50" height="3.25" style="fill:#bdbdbd;stroke:none"/><rect x="5.50" y="3.25" width="5.50" height="3.25" style="fill:#fff;stroke:none"/><rect x="11.00" y="0.00" width="5.50" height="3.25" style="fill:#fff;stroke:none"/><rect x="11.00" y="3.25" width="5.50" height="3.25" style="fill:#bdbdbd;stroke:none"/><rect x="16.50" y="0.00" width="5.50" height="3.25" style="fill:#bdbdbd;stroke:none"/><rect x="16.50" y="3.25" width="5.50" height="3.25" style="fill:#fff;stroke:none"/><rect x="22.00" y="0.00" width="5.50" height="3.25" style="fill:#fff;stroke:none"/><rect x="22.00" y="3.25" width="5.50" height="3.25" style="fill:#bdbdbd;stroke:none"/><rect x="27.50" y="0.00" width="5.50" height="3.25" style="fill:#bdbdbd;stroke:none"/><rect x="27.50" y="3.25" width="5.50" height="3.25" style="fill:#fff;stroke:none"/></svg>
<div style="left:123px;top:880.5px;width:8px;height:8px;background:#cfcfcf;border-radius:1.500px;"></div>
<div class="t" style="top:880.73px;font-size:8px;line-height:8px;color:#4f4f4f;font-weight:700;left:27px;width:200px;text-align:center;">H</div>
<div style="left:154px;top:880.5px;width:8px;height:8px;background:#cfcfcf;border-radius:1.500px;"></div>
<div class="t" style="top:880.73px;font-size:8px;line-height:8px;color:#4f4f4f;font-weight:700;left:58px;width:200px;text-align:center;">S</div>
<div style="left:187px;top:880.5px;width:8px;height:8px;background:#cfcfcf;border-radius:1.500px;"></div>
<div class="t" style="top:880.73px;font-size:8px;line-height:8px;color:#4f4f4f;font-weight:700;left:91px;width:200px;text-align:center;">V</div>
<div class="t" style="top:878.89px;font-size:11px;line-height:11px;color:#dedede;letter-spacing:-0.451px;left:134px;">121</div>
<div class="t" style="top:878.89px;font-size:11px;line-height:11px;color:#dedede;letter-spacing:0.215px;left:165px;">100</div>
<div class="t" style="top:878.89px;font-size:11px;line-height:11px;color:#dedede;letter-spacing:0.215px;left:197px;">100</div>
<svg style="left:221.0px;top:869.0px;" width="24" height="24" viewBox="-12.0 -12.0 24 24"><circle r="7" style="stroke-width:1.100"/><path d="M-2.500 -4.500L4 0L-2.500 4.500z" style="stroke-width:1.100"/></svg>
<svg style="left:66px;top:321px;overflow:hidden" width="24" height="19" viewBox="66 321 24 19"><path d="M71.56 334.54L81.30 324.80" style="stroke:#bebebe;stroke-width:3.3;stroke-linecap:round"/><path d="M69.30 336.80L72.69 335.67L70.43 333.41z" style="fill:#bebebe;stroke:none"/><path d="M72.91 335.88L70.22 333.19" style="stroke:#4e4e4e;stroke-width:.7"/><g transform="translate(79.600,334.600)" style="stroke:#d0d0d0;stroke-width:1"><circle r="2.000" style="fill:#4e4e4e"/><path d="M0 -3.200V-4.400" transform="rotate(0)"/><path d="M0 -3.200V-4.400" transform="rotate(45)"/><path d="M0 -3.200V-4.400" transform="rotate(90)"/><path d="M0 -3.200V-4.400" transform="rotate(135)"/><path d="M0 -3.200V-4.400" transform="rotate(180)"/><path d="M0 -3.200V-4.400" transform="rotate(225)"/><path d="M0 -3.200V-4.400" transform="rotate(270)"/><path d="M0 -3.200V-4.400" transform="rotate(315)"/></g></svg>
<svg style="left:66px;top:520px;overflow:hidden" width="24" height="19" viewBox="66 520 24 19"><path d="M71.56 533.54L81.30 523.80" style="stroke:#bebebe;stroke-width:3.3;stroke-linecap:round"/><path d="M69.30 535.80L72.69 534.67L70.43 532.41z" style="fill:#bebebe;stroke:none"/><path d="M72.91 534.88L70.22 532.19" style="stroke:#4e4e4e;stroke-width:.7"/><g transform="translate(79.600,533.600)" style="stroke:#d0d0d0;stroke-width:.9"><circle r="4.300" style="fill:#4e4e4e"/><circle r="2.400"/><circle r=".7" style="fill:#d0d0d0"/></g></svg>
<div style="left:246px;top:23px;width:6.5px;height:877px;background:#373737;"></div>
<div style="left:252.5px;top:24px;width:895.5px;height:24px;background:#4c4c4c;"></div>
<div style="left:281px;top:25px;width:1px;height:21px;background:#6a6a6a;"></div>
<div style="left:375px;top:25px;width:1px;height:21px;background:#6a6a6a;"></div>
<div style="left:431px;top:25px;width:1px;height:21px;background:#6a6a6a;"></div>
<div style="left:535px;top:25px;width:1px;height:21px;background:#6a6a6a;"></div>
<div style="left:615px;top:25px;width:1px;height:21px;background:#6a6a6a;"></div>
<div style="left:695px;top:25px;width:1px;height:21px;background:#6a6a6a;"></div>
<svg style="left:256px;top:27px;" width="18" height="18" viewBox="0 0 18 18"><g style="stroke:#c6c6c6;stroke-width:1.200"><rect x=".6" y=".6" width="16.800" height="16.800" rx="1.500"/><path d="M7.15 9.56L7.11 9.31L7.14 9.02L7.25 8.70L7.44 8.36L7.70 8.01L8.03 7.67L8.43 7.35L8.88 7.05L9.37 6.80L9.88 6.61L10.40 6.48L10.90 6.42L11.38 6.45L11.80 6.55L12.16 6.74L12.43 7.01L12.60 7.36L12.66 7.77L12.61 8.23L12.44 8.74L12.15 9.27L11.75 9.81L11.25 10.34L10.65 10.83L9.98 11.28L9.26 11.66L8.50 11.96L7.74 12.17L7.01 12.27L6.31 12.25L5.69 12.12L5.17 11.87L4.76 11.51L4.49 11.05L4.36 10.50L4.40 9.87L4.59 9.18L4.95 8.46L5.46 7.73L6.11 7.01L6.88 6.32L7.76 5.70L8.71 5.17L9.70 4.74L10.71 4.43L11.69 4.26L12.62 4.23L13.47 4.36L14.19 4.64L14.77 5.06L15.17 5.62L15.39 6.30L15.41 7.08L15.23 7.94L14.84 8.84L14.25 9.77L13.48 10.69L12.55 11.57L11.49 12.38L10.32 13.09" style="stroke-width:1.300"/></g></svg>
<svg style="left:291px;top:27px;" width="18" height="20" viewBox="0 0 18 20"><g style="stroke:#c6c6c6;stroke-width:1.200"><path d="M5 15.500H2.500A1.500 1.500 0 0 1 1 14V2A1.500 1.500 0 0 1 2.500 .6H11.500A1.500 1.500 0 0 1 13 2V9"/><path d="M1 11.500L5 15.500V12.500A1 1 0 0 0 4 11.500z" style="fill:#c6c6c6"/><circle cx="12" cy="14.500" r="4.300" style="fill:#c6c6c6;stroke:#4c4c4c;stroke-width:1"/><path d="M12 12v5M9.500 14.500h5" style="stroke:#4c4c4c;stroke-width:1.300;stroke-linecap:butt"/></g></svg>
<svg style="left:313px;top:27px;" width="19" height="18" viewBox="0 0 19 18"><g style="stroke:#c6c6c6;stroke-width:1.200"><path d="M1 15V3.500A1 1 0 0 1 2 2.500H6L7.500 4.500H11" /><path d="M1 15.500L3.500 8H18L15.500 15.500z" style="fill:#c6c6c6"/><path d="M9.500 7.500C9.500 5 11 3.500 14.500 3.500" /><path d="M14 1l3.500 2.500L14 6z" style="fill:#c6c6c6;stroke-width:.8"/></g></svg>
<svg style="left:336px;top:27px;" width="20" height="18" viewBox="0 0 20 18"><g style="stroke:#c6c6c6;stroke-width:1.200"><path d="M1.500 12.500L5 4.500H7M18.500 12.500L15 4.500H13"/><rect x="1.200" y="13" width="17.600" height="3.800" rx="1" style="fill:#c6c6c6"/><path d="M10 .8V9" style="stroke-width:1.500"/><path d="M6.500 6.500L10 10L13.500 6.500" style="stroke-width:1.500"/></g></svg>
<svg style="left:361px;top:29px;" width="7" height="14" viewBox="0 0 7 14"><g style="stroke:#c6c6c6;stroke-width:1.200"><path d="M.8 4.500L3.500 1.500L6.200 4.500M.8 9.500L3.500 12.500L6.200 9.500"/></g></svg>
<svg style="left:383px;top:28px;" width="17" height="16" viewBox="0 0 17 16"><g style="stroke:#c6c6c6;stroke-width:1.200"><path d="M5 4H10.500A5 5 0 0 1 10.500 14.500H1.500" style="stroke-width:1.400"/><path d="M6.500 .2V7.800L.8 4z" style="fill:#c6c6c6;stroke:none"/></g></svg>
<svg style="left:406px;top:28px;" width="17" height="16" viewBox="0 0 17 16"><g style="stroke:#c6c6c6;stroke-width:1.200"><path d="M12 4H6.500A5 5 0 0 0 6.500 14.500H15.500" style="stroke-width:1.400"/><path d="M10.500 .2V7.800L16.200 4z" style="fill:#c6c6c6;stroke:none"/></g></svg>
<svg style="left:437px;top:26px" width="20" height="20" viewBox="-10 -10 20 20"><g style="stroke:#c6c6c6;stroke-width:1.500"><path d="M0 -5.500V-8.800" transform="rotate(0)"/><path d="M0 -5.500V-8.800" transform="rotate(30)"/><path d="M0 -5.500V-8.800" transform="rotate(60)"/><path d="M0 -5.500V-8.800" transform="rotate(90)"/><path d="M0 -5.500V-8.800" transform="rotate(120)"/><path d="M0 -5.500V-8.800" transform="rotate(150)"/><path d="M0 -5.500V-8.800" transform="rotate(180)"/><path d="M0 -5.500V-8.800" transform="rotate(210)"/><path d="M0 -5.500V-8.800" transform="rotate(240)"/><path d="M0 -5.500V-8.800" transform="rotate(270)"/><path d="M0 -5.500V-8.800" transform="rotate(300)"/><path d="M0 -5.500V-8.800" transform="rotate(330)"/></g></svg>
<svg style="left:463px;top:27px;" width="18" height="18" viewBox="0 0 18 18"><g style="stroke:#c6c6c6;stroke-width:1.200"><rect x="1" y="1" width="11" height="11" style="stroke:#7e7e7e;stroke-dasharray:2 1.500;stroke-linecap:butt;stroke-width:1"/><g style="stroke:#7e7e7e;stroke-width:1"><path d="M14 6h2.500M14 9.500l2 1M13 13l2 2M9.500 14l1 2M6 14v2.500"/></g></g></svg>
<svg style="left:485px;top:26px;" width="21" height="20" viewBox="0 0 21 20"><g style="stroke:#c6c6c6;stroke-width:1.200"><path d="M11 1.500L19.500 10L11 18.500L3.500 11C1.500 11 1.500 15.500 3 16C1 15.500 .5 9.500 2.500 8.500z" style="fill:#c6c6c6;stroke:none"/><path d="M5.500 7L11 1.500L16.500 7z" style="fill:#4c4c4c;stroke-width:1"/></g></svg>
<svg style="left:510px;top:26px;" width="19" height="20" viewBox="0 0 19 20"><g style="stroke:#c6c6c6;stroke-width:1.200"><rect x="2.500" y="4.500" width="13" height="13" /><path d="M9 1V4.500"/><g style="fill:#c6c6c6;stroke:none"><circle cx="9" cy="1.500" r="1.300"/><circle cx="2.500" cy="11" r="1.300"/><circle cx="15.500" cy="11" r="1.300"/><circle cx="9" cy="17.500" r="1.300"/><circle cx="9" cy="4.500" r="1.300"/><rect x="1.500" y="3.500" width="2" height="2"/><rect x="14.500" y="3.500" width="2" height="2"/><rect x="1.500" y="16.500" width="2" height="2"/><rect x="14.500" y="16.500" width="2" height="2"/></g></g></svg>
<svg style="left:543px;top:28px;" width="17" height="17" viewBox="0 0 17 17"><g style="stroke:#c6c6c6;stroke-width:1.200"><rect x=".5" y=".5" width="15" height="15" style="stroke:#7e7e7e;stroke-dasharray:2 1.500;stroke-linecap:butt;stroke-width:1"/><path d="M.5 .5L16.500 16.500" style="stroke:#7e7e7e;stroke-width:1"/></g></svg>
<svg style="left:567px;top:28px;" width="17" height="17" viewBox="0 0 17 17"><g style="stroke:#c6c6c6;stroke-width:1.200"><rect x=".5" y=".5" width="15" height="15" style="stroke:#7e7e7e;stroke-dasharray:2 1.500;stroke-linecap:butt;stroke-width:1"/><path d="M16 3V16H3z" style="fill:#7e7e7e;stroke:none"/></g></svg>
<svg style="left:591px;top:28px;" width="17" height="17" viewBox="0 0 17 17"><g style="stroke:#c6c6c6;stroke-width:1.200"><rect x=".5" y=".5" width="15.500" height="15.500" rx="2.500" style="stroke:#7e7e7e;stroke-width:1"/><rect x="3" y="3" width="10.500" height="10.500" rx="1" style="stroke:#7e7e7e;stroke-dasharray:2 1.500;stroke-linecap:butt;stroke-width:1"/></g></svg>
<div style="left:619px;top:24px;width:48px;height:23px;background:#66708d;border-radius:2px;"></div>
<svg style="left:622px;top:26px;" width="20" height="20" viewBox="0 0 20 20"><g style="stroke:#c6c6c6;stroke-width:1.200"><path d="M16 17.500H1.500V3.500" style="stroke:#dcdcdc;stroke-width:1;stroke-linejoin:miter"/><path d="M1.500 3.500L16 17.500" style="stroke:#aab0c4;stroke-width:.9"/><path d="M8.5 11.5L9.3 8.9L16.3 1.9000000000000004L18.1 3.7L11.1 10.7z" style="fill:#d8d8d8;stroke:none"/></g></svg>
<svg style="left:645px;top:26px;" width="22" height="20" viewBox="0 0 22 20"><g style="stroke:#c6c6c6;stroke-width:1.200"><path d="M2 10.500H19.500" style="stroke:#dcdcdc;stroke-width:1"/><path d="M19.500 10.500A8.700 8 0 0 1 2 10.500" style="stroke:#b8bed0;stroke-width:.9"/><path d="M10 11L10.8 8.4L17.8 1.4000000000000004L19.6 3.2L12.6 10.2z" style="fill:#d8d8d8;stroke:none"/></g></svg>
<svg style="left:669px;top:26px;" width="21" height="20" viewBox="0 0 21 20"><g style="stroke:#c6c6c6;stroke-width:1.200"><path d="M1 10.500H14M5.500 6V18M1 16.500H14.500" style="stroke-width:1"/><path d="M12.500 8V18M1 13.500H15" style="stroke-width:.6;stroke:#9a9a9a"/><path d="M5.500 16.500H14" style="stroke-width:1.600;stroke-linecap:butt"/><path d="M9 10.5L9.8 7.9L16.8 0.9000000000000004L18.6 2.7L11.6 9.7z" style="fill:#d8d8d8;stroke:none"/></g></svg>
<svg style="left:702px;top:26px;" width="20" height="20" viewBox="0 0 20 20"><g style="stroke:#c6c6c6;stroke-width:1.200"><path d="M5.500 15.500A7.200 6.800 0 1 1 9 16.500L3 19z" /><path d="M13.500 2L17.500 .8L16.500 5" style="stroke-width:1"/><path d="M14 4.500L17.500 .8" style="stroke-width:1"/></g></svg>
<div class="t" style="top:30.34px;font-size:12px;line-height:12px;color:#c6c6c6;font-weight:700;left:611.5px;width:200px;text-align:center;">?</div>
<div style="left:252.5px;top:48px;width:5.5px;height:805px;background:#2e2e2e;"></div>
<svg style="left:262px;top:56px;" width="46" height="14" viewBox="0 0 46 14"><g style="stroke:#c4c4c4;stroke-width:1.100;stroke-linecap:butt"><path d="M0 1L8 9M8 1L0 9M17 9.500H27M35.500 1.500h8.500v8h-8.500z"/></g></svg>
<div class="t" style="top:56.00px;font-size:13px;line-height:13px;color:#ababab;letter-spacing:0.217px;left:482px;white-space:pre;">Illustration2* (2346 x 1324px 200dpi 50.0%)  - CLIP STUDIO PAINT PRO</div>
<div style="left:257px;top:74px;width:100px;height:18px;background:#66708d;"></div>
<div style="left:357px;top:74px;width:99px;height:18px;background:#4b4b4b;"></div>
<div style="left:265px;top:81px;width:4px;height:4px;background:#cfcfcf;border-radius:2px;"></div>
<div class="t" style="top:76.84px;font-size:12px;line-height:12px;color:#e4e4e4;letter-spacing:-0.289px;left:276px;">Illustration2*</div>
<svg style="left:364px;top:79px;" width="8" height="8" viewBox="0 0 8 8"><path d="M.5 .5L7 7M7 .5L.5 7" style="stroke:#c4c4c4;stroke-width:1"/></svg>
<div class="t" style="top:76.84px;font-size:12px;line-height:12px;color:#b0b0b0;letter-spacing:-0.336px;left:376px;">Illustration2</div>
<svg style="left:1131px;top:76px" width="12" height="12" viewBox="-6 -6 12 12"><path d="M-3 -2L0 2L3 -2" style="stroke:#c4c4c4;stroke-width:1.2"/></svg>
<div style="left:257px;top:92px;width:874px;height:744px;background:#2d2d2d;"></div>
<div style="left:258px;top:125px;width:873px;height:662px;background:#fff;"></div>
<svg style="left:258px;top:125px;overflow:hidden" width="873" height="662" viewBox="258 125 873 662"><g style="stroke:#3ee01e;stroke-width:.55;fill:none"><path d="M582.8 305.9L585.1 302.7L587.4 299.6L589.8 296.3L592.5 293.0L594.7 290.1L597.2 287.1L599.7 283.9L602.3 280.6L604.9 277.3L607.5 273.9L609.9 270.6L612.2 267.3L614.3 264.2L616.2 261.3L619.1 257.0L621.5 253.2L623.6 249.7L625.7 246.4L625.7 246.4L622.9 249.2L620.2 252.2L617.2 255.5L613.8 259.4L611.5 262.0L609.0 264.8L606.4 267.8L603.8 271.0L601.1 274.4L598.6 277.8L596.1 281.3L593.8 284.7L591.7 288.0L589.9 291.3L587.8 295.1L586.0 298.7L584.4 302.3L582.8 305.9" style="opacity:0.6"/><path d="M580.5 304.6L583.1 301.6L585.8 298.6L588.6 295.5L591.4 292.3L593.8 289.5L596.3 286.5L598.8 283.2L601.2 279.8L603.6 276.2L605.8 272.6L607.9 269.0L609.8 265.4L611.5 262.0L612.9 258.7L612.9 258.7L610.2 260.9L607.2 263.4L604.2 266.1L601.2 269.1L598.3 272.2L595.5 275.4L592.8 278.8L590.4 282.2L588.3 285.7L586.6 289.0L584.7 293.1L583.1 297.0L581.7 300.8L580.5 304.6" style="opacity:0.75"/><path d="M586.4 299.0L589.2 295.9L592.1 292.7L594.7 290.1L597.3 287.2L600.0 284.1L602.6 280.9L605.2 277.5L607.6 274.0L609.9 270.5L612.0 267.1L613.8 263.8L615.4 260.6L617.9 256.1L617.9 256.1L614.2 259.7L611.5 262.0L608.8 264.6L605.9 267.4L603.1 270.5L600.4 273.8L597.8 277.2L595.4 280.7L593.2 284.2L591.3 287.8L589.7 291.2L588.0 295.2L586.4 299.0" style="opacity:0.9"/><path d="M578.6 307.9L580.5 304.6L582.5 301.3L584.6 297.9L586.9 294.5L589.4 290.9L591.5 287.9L593.9 284.7L596.4 281.5L599.0 278.1L601.6 274.8L604.3 271.4L606.8 268.2L609.3 265.0L611.6 262.1L613.7 259.3L616.8 255.2L619.5 251.6L621.9 248.4L624.2 245.3L626.6 242.4L629.4 239.2L632.2 236.0L635.1 232.8L638.1 229.6L641.2 226.6L644.7 223.7L648.6 221.0L651.9 219.0L651.9 219.0L648.5 220.8L644.4 223.3L640.7 226.0L637.4 228.9L634.2 231.9L631.2 235.0L628.2 238.2L625.3 241.2L622.7 244.1L620.3 247.1L617.8 250.3L615.0 253.9L611.9 257.9L609.8 260.7L607.5 263.6L605.1 266.8L602.6 270.1L600.0 273.5L597.5 277.0L595.0 280.4L592.6 283.8L590.4 287.1L588.4 290.2L586.1 294.0L584.0 297.5L582.1 301.0L580.3 304.4L578.6 307.9" style="opacity:0.45"/><path d="M546.0 372.8L547.3 368.9L548.7 364.9L550.1 361.0L551.5 357.1L552.9 353.2L554.4 349.4L556.2 345.1L558.0 340.9L559.9 336.7L561.8 332.6L563.7 328.5L563.7 328.5L561.5 332.4L559.3 336.4L557.1 340.5L555.1 344.7L553.3 348.9L551.8 352.7L550.4 356.7L549.2 360.7L548.0 364.7L546.9 368.8L546.0 372.8" style="opacity:0.9"/><path d="M543.7 380.6L545.0 376.8L546.4 372.9L547.7 369.0L549.2 365.1L550.6 361.2L552.1 357.3L553.7 353.4L555.2 349.7L557.1 345.5L559.0 341.4L561.0 337.3L563.0 333.2L565.1 329.2L567.1 325.2L569.0 321.3L570.9 317.4L572.7 313.7L574.3 310.0L576.0 306.5L577.6 303.0L579.3 299.4L579.3 299.4L577.2 302.7L575.1 306.0L573.0 309.3L571.0 312.8L568.9 316.3L566.7 320.0L564.5 323.8L562.3 327.7L560.1 331.7L558.0 335.8L556.0 340.0L554.1 344.2L552.3 348.5L550.9 352.4L549.6 356.4L548.4 360.4L547.4 364.5L546.3 368.6L545.4 372.6L544.5 376.7L543.7 380.6" style="opacity:0.45"/><path d="M556.1 363.0L558.1 359.4L560.1 355.9L562.1 352.5L564.4 348.8L566.7 345.0L569.0 341.3L571.4 337.5L573.6 333.7L575.8 329.9L577.9 326.1L579.8 322.2L581.6 318.4L583.1 314.7L584.5 311.1L585.8 307.5L587.2 303.9L588.5 300.3L590.0 296.5L591.8 292.4" style="opacity:0.75"/><path d="M547.5 368.9L548.9 365.0L550.3 361.1L551.8 357.2L553.3 353.3L554.8 349.5L556.7 345.4L558.6 341.2L560.6 337.1L562.7 333.0L564.7 329.0L566.8 325.1L568.8 321.2L570.7 317.3L572.5 313.6L574.3 310.0L576.0 306.5" style="opacity:0.9"/><path d="M550.9 352.4L552.5 348.6L554.4 344.4L556.5 340.2L558.6 336.1L560.7 332.0L562.8 328.0L564.9 324.1L567.0 320.2L569.0 316.4L570.8 312.7L572.6 309.1L574.3 305.6L576.1 302.1L576.1 302.1L574.1 305.5L572.1 308.9L570.2 312.3L568.1 315.9L566.1 319.7L564.0 323.5L561.8 327.5L559.8 331.5L557.7 335.7L555.8 339.9L553.9 344.2L552.3 348.5L550.9 352.4" style="opacity:0.6"/><path d="M633.7 231.4L637.5 229.0L641.4 226.8L645.4 224.7L649.7 222.8L653.2 221.5L656.9 220.0L660.7 218.3L664.6 216.6L668.5 214.8L672.5 213.0L676.4 211.3L680.3 209.6L684.4 208.2L689.1 207.1L689.1 207.1L684.3 206.2L679.7 205.8L675.1 205.9L670.5 206.3L665.9 207.2L661.5 208.5L657.2 210.1L653.1 212.1L649.4 214.3L646.1 216.8L642.2 220.1L638.9 223.8L636.1 227.6L633.7 231.4" style="opacity:0.45"/><path d="M547.5 381.6L548.9 377.9L550.2 374.0L551.6 370.2L553.1 366.3L554.5 362.4L556.0 358.6L557.5 354.9L559.1 351.2L560.9 347.2L562.8 343.2L564.7 339.1L566.7 335.1L568.7 331.1L570.7 327.2L572.6 323.2L574.5 319.3L576.3 315.6L577.9 311.9L579.5 308.4L581.1 304.9L582.8 301.4L582.8 301.4L580.6 304.6L578.5 307.9L576.5 311.2L574.4 314.6L572.3 318.1L570.1 321.8L567.8 325.6L565.6 329.5L563.5 333.5L561.4 337.5L559.4 341.6L557.5 345.7L555.9 349.9L554.5 353.8L553.3 357.7L552.1 361.7L551.0 365.7L550.1 369.7L549.2 373.7L548.3 377.7L547.5 381.6" style="opacity:0.45"/><path d="M582.7 291.8L585.3 288.2L587.6 285.1L590.0 281.9L592.6 278.7L595.3 275.3L598.0 272.0L600.7 268.7L603.3 265.5L605.9 262.4L608.2 259.5L610.4 256.8L613.5 252.8L616.2 249.2L618.7 245.9L621.2 242.8L623.7 239.8L626.5 236.6L629.4 233.4L632.4 230.1L635.4 226.9L638.8 223.7L642.5 220.6L646.6 217.7L650.1 215.7L653.8 213.6L657.8 211.6L661.9 209.8L666.2 208.1L666.2 208.1L661.8 209.4L657.5 211.0L653.4 212.7L649.5 214.5L645.8 216.4L641.4 219.1L637.4 222.1L633.8 225.2L630.5 228.4L627.5 231.6L624.4 234.7L621.5 237.8L618.9 241.0L616.4 244.1L613.9 247.4L611.2 251.0L608.1 255.0L606.1 257.8L603.9 260.8L601.5 264.0L599.0 267.4L596.5 270.8L594.0 274.4L591.6 277.9L589.2 281.4L587.0 284.8L585.0 288.0L582.7 291.8" style="opacity:0.45"/><path d="M573.4 318.8L575.6 315.2L577.6 311.8L579.6 308.4L581.6 305.2L583.6 301.9L585.7 298.6L588.0 295.2L590.4 291.6L592.5 288.6L594.8 285.4L597.2 282.0L599.6 278.6L602.1 275.1L604.6 271.7L607.0 268.3L609.4 265.1L611.5 262.0L613.5 259.1L616.4 254.9L616.4 254.9L613.1 258.9L610.9 261.5L608.4 264.3L605.8 267.4L603.2 270.6L600.5 273.9L597.8 277.2L595.2 280.6L592.7 283.9L590.4 287.1L588.3 290.2L586.0 293.9L583.9 297.5L582.0 301.0L580.3 304.4L578.6 307.9L576.9 311.4L575.2 315.0L573.4 318.8" style="opacity:0.6"/><path d="M560.8 337.2L563.5 333.5L566.3 329.9L569.0 326.3L571.7 322.7L574.2 319.2L576.6 315.7L578.7 312.4L580.7 309.0L582.6 305.7L584.4 302.4L586.3 298.9L588.1 295.2L590.1 291.4L591.7 288.0L593.5 284.4L595.3 280.7L597.3 276.8L599.2 272.9L599.2 272.9L596.0 275.9L592.9 278.8L589.8 281.8L587.0 284.7L584.3 287.6L581.5 291.1L579.0 294.5L576.7 297.9L574.7 301.3L572.9 304.8L571.2 308.4L569.7 312.1L568.1 315.9L566.6 320.0L565.1 324.1L563.6 328.4L562.2 332.8L560.8 337.2" style="opacity:0.75"/><path d="M627.8 222.4L630.4 221.8L633.8 220.9L637.9 219.7L642.4 218.4L647.1 216.9L651.8 215.4L656.2 214.0L660.2 212.7L664.6 211.3L669.2 210.0L673.8 208.6L678.2 207.3L682.1 206.1L685.4 205.0L685.4 205.0L681.9 205.5L677.9 206.1L673.4 206.9L668.7 207.8L664.0 208.9L659.4 210.1L655.4 211.3L650.9 212.8L646.3 214.5L641.7 216.3L637.3 218.1L633.4 219.8L630.2 221.2L627.8 222.4" style="opacity:0.45"/><path d="M628.0 222.9L630.5 222.1L633.9 221.1L637.9 219.8L642.4 218.3L647.0 216.7L651.7 215.1L656.1 213.6L660.1 212.3L664.5 210.9L669.1 209.5L673.7 208.2L673.7 208.2L669.0 209.3L664.4 210.4L659.9 211.5L655.8 212.7L651.3 214.1L646.7 215.7L642.1 217.4L637.7 219.0L633.7 220.6L630.4 221.9L628.0 222.9" style="opacity:0.75"/><path d="M611.7 245.5L614.0 244.3L617.1 242.6L620.6 240.5L624.6 238.1L628.7 235.6L632.7 233.0L636.6 230.5L640.2 228.3L644.1 225.9L648.3 223.5L652.5 221.1L656.5 218.9L656.5 218.9L652.3 220.6L647.8 222.5L643.4 224.6L639.2 226.7L635.6 228.8L631.6 231.2L627.5 233.8L623.5 236.5L619.8 239.2L616.5 241.7L613.7 243.9L611.7 245.5" style="opacity:0.75"/><path d="M614.7 245.3L617.7 243.6L621.3 241.5L625.2 239.1L629.4 236.6L633.5 234.1L637.4 231.7L640.9 229.6L644.9 227.3L649.0 225.0L653.3 222.6L657.3 220.4L660.9 218.5L660.9 218.5L657.1 220.0L652.8 221.8L648.4 223.8L644.1 225.9L640.0 228.0L636.4 230.1L632.5 232.6L628.5 235.3L624.5 238.0L620.8 240.7L617.5 243.2L614.7 245.3" style="opacity:0.9"/><path d="M623.3 232.0L626.3 230.8L629.6 229.3L633.1 227.7L636.9 225.9L640.9 224.0L645.0 222.0L649.2 219.9L653.5 217.7L657.8 215.4L662.0 213.1L666.1 210.9L670.1 208.6L674.0 206.4L677.7 204.3L681.1 202.4L685.0 200.2L689.0 198.1L693.1 195.9L693.1 195.9L688.7 197.4L684.4 199.0L680.3 200.6L676.6 202.1L672.7 203.7L668.6 205.6L664.4 207.6L660.2 209.7L655.9 211.9L651.7 214.2L647.5 216.6L643.4 219.0L639.5 221.4L635.7 223.7L632.2 226.0L628.9 228.1L625.9 230.2L623.3 232.0" style="opacity:0.15"/><path d="M643.5 219.3L647.8 217.2L652.2 215.2L656.6 213.2L660.9 211.1L665.2 209.1L669.4 207.1L673.4 205.2L677.2 203.4L680.8 201.8L684.8 199.9L689.0 198.0L693.2 196.1L697.5 194.1L701.8 192.1L706.0 190.2L710.2 188.2L714.2 186.4L718.1 184.5L721.8 182.8L721.8 182.8L717.9 184.0L713.8 185.3L709.6 186.7L705.2 188.2L700.8 189.8L696.3 191.4L691.9 193.1L687.6 194.9L683.4 196.8L679.4 198.6L675.8 200.4L672.0 202.4L668.1 204.5L664.0 206.8L659.9 209.2L655.8 211.7L651.6 214.2L647.6 216.7L643.5 219.3" style="opacity:0.25"/><path d="M725.1 207.9L729.6 208.8L734.5 209.9L739.6 211.2L744.9 212.6L750.3 214.1L753.5 215.1L756.9 216.0L760.3 217.0L763.8 218.0L767.4 219.0L771.1 220.1L774.9 221.2L778.8 222.5L782.9 223.9L787.0 225.5L791.3 227.3L795.7 229.2L800.3 231.4L803.4 233.0L806.8 234.8L810.4 236.8L814.1 238.9L818.0 241.1L822.0 243.4L826.1 245.8L830.2 248.2L834.4 250.7L838.5 253.1L842.5 255.6L846.4 258.1L850.3 260.4L853.9 262.8L857.4 265.0L860.7 267.1L863.7 269.1" style="opacity:0.6"/><path d="M721.0 208.0L724.9 208.9L729.4 210.0L734.2 211.2L739.3 212.5L744.5 214.0L749.8 215.6L753.1 216.6L756.4 217.7L759.9 218.7L763.3 219.7L766.9 220.8L770.6 221.9L774.3 223.1L778.2 224.4L782.2 225.9L786.3 227.5L790.5 229.2L794.8 231.2L799.3 233.3L802.4 234.9L805.8 236.7L809.4 238.6L813.1 240.6L817.0 242.8L821.0 245.1L825.1 247.4L829.3 249.8L833.4 252.2L837.6 254.6L841.6 257.0L845.6 259.4L849.5 261.7L853.2 263.9L856.7 266.1L860.0 268.1L863.0 270.0L865.8 271.7L865.8 271.7L863.2 269.7L860.3 267.6L857.2 265.3L853.8 263.0L850.2 260.5L846.5 257.9L842.7 255.4L838.7 252.8L834.7 250.1L830.6 247.6L826.6 245.0L822.5 242.5L818.6 240.1L814.7 237.9L811.0 235.7L807.4 233.7L804.0 231.9L800.9 230.2L796.3 228.0L791.8 226.1L787.5 224.3L783.3 222.8L779.2 221.4L775.3 220.2L771.4 219.1L767.7 218.1L764.0 217.2L760.5 216.4L757.0 215.6L753.6 214.8L750.3 214.0L744.9 212.6L739.6 211.4L734.4 210.3L729.5 209.4L725.0 208.6L721.0 208.0" style="opacity:0.6"/><path d="M717.8 206.5L721.1 207.2L725.1 208.1L729.6 209.1L734.4 210.2L739.5 211.5L744.8 212.9L750.1 214.5L753.4 215.5L756.8 216.5L760.2 217.5L763.7 218.5L767.3 219.5L771.0 220.6L774.8 221.8L778.7 223.1L782.7 224.5L786.8 226.1L791.1 227.9L795.4 229.8L800.0 232.0L803.1 233.6L806.5 235.4L810.1 237.4L813.8 239.4L817.7 241.6L821.7 243.9L825.8 246.3L829.9 248.7L834.0 251.2L838.1 253.7L842.2 256.1L846.1 258.5L850.0 260.9L853.7 263.2L857.1 265.4L860.4 267.5L863.4 269.4L866.2 271.2L868.6 272.8L870.8 274.4L876.3 282.6L876.3 282.6L871.0 274.3L868.8 272.5L866.5 270.7L863.8 268.8L860.9 266.7L857.7 264.5L854.3 262.2L850.7 259.8L846.9 257.3L843.0 254.8L839.0 252.2L835.0 249.6L830.9 247.1L826.8 244.6L822.8 242.1L818.8 239.8L814.9 237.5L811.2 235.4L807.6 233.4L804.2 231.6L801.0 230.0L796.4 227.8L791.9 225.8L787.6 224.0L783.4 222.5L779.3 221.1L775.4 219.9L771.5 218.8L767.8 217.7L764.1 216.8L760.6 215.9L757.1 215.1L753.8 214.2L750.5 213.4L745.1 211.9L739.7 210.7L734.6 209.6L729.7 208.6L725.2 207.7L721.2 207.0L717.8 206.5" style="opacity:0.45"/><path d="M773.6 197.5L778.0 198.7L782.3 199.8L786.4 201.0L790.3 202.1L794.5 203.4L798.8 204.8L803.2 206.3L807.5 207.8L811.8 209.3L816.1 210.9L820.4 212.5L824.6 214.0L828.7 215.6L832.7 217.2L836.5 218.7L840.2 220.2L843.8 221.6L847.2 222.9L850.3 224.2L855.8 226.7L860.9 229.2L865.6 231.6L869.8 234.0L873.5 236.1L876.7 238.1L876.7 238.1L873.6 236.0L869.9 233.7L865.8 231.3L861.2 228.7L856.1 226.1L850.6 223.6L847.5 222.2L844.1 220.8L840.6 219.3L836.9 217.7L833.0 216.2L829.0 214.6L824.9 213.1L820.7 211.5L816.5 209.9L812.1 208.4L807.8 207.0L803.4 205.5L799.0 204.1L794.7 202.8L790.4 201.6L786.5 200.6L782.4 199.5L778.0 198.5L773.6 197.5" style="opacity:0.9"/><path d="M723.2 187.1L725.4 187.8L728.0 188.5L731.0 189.3L734.3 190.2L738.0 191.1L742.0 192.0L746.1 193.0L750.4 194.0L754.9 195.0L759.5 196.1L764.0 197.1L768.6 198.2L773.2 199.2L777.6 200.3L781.9 201.3L786.0 202.3L789.9 203.3L794.2 204.5L798.5 205.7L802.9 207.0L807.3 208.3L811.7 209.7L816.1 211.1L820.4 212.4L824.6 213.8" style="opacity:0.45"/><path d="M763.7 198.5L768.3 199.7L772.8 200.9L777.1 202.2L781.4 203.4L785.4 204.7L789.2 205.9L793.3 207.3L797.6 208.7L801.9 210.2L806.1 211.8L810.4 213.3L814.7 214.9L818.9 216.5L823.1 218.0L827.1 219.6L831.1 221.1L835.0 222.5L838.7 223.9L842.3 225.3L845.6 226.6L848.8 227.7L854.3 230.1L859.3 232.4L863.9 234.7L868.1 236.9L871.8 238.9L875.1 240.7L875.1 240.7L872.0 238.6L868.5 236.2L864.5 233.7L860.0 231.0L855.0 228.4L849.7 225.8L846.6 224.3L843.3 222.8L839.8 221.2L836.1 219.7L832.3 218.1L828.3 216.5L824.2 214.9L820.1 213.3L815.8 211.8L811.5 210.3L807.1 208.9L802.8 207.5L798.4 206.2L794.1 204.9L789.8 203.8L785.9 202.9L781.7 202.0L777.4 201.0L772.9 200.2L768.4 199.3L763.7 198.5" style="opacity:0.6"/><path d="M773.4 219.2L777.1 220.7L781.0 222.4L785.2 224.1L789.5 225.9L793.9 227.7L798.4 229.6L802.8 231.5L807.2 233.4L811.5 235.2L815.7 237.1L819.6 238.9L823.2 240.7L827.1 242.6L831.1 244.5L835.2 246.6L839.4 248.7L843.5 250.9L847.7 253.0L851.8 255.1L855.7 257.2L859.6 259.1L863.2 261.0L866.6 262.7L869.8 264.3L872.6 265.7L875.1 266.8L875.1 266.8L872.7 265.4L870.0 263.8L867.0 262.0L863.7 260.1L860.2 258.0L856.5 255.8L852.6 253.6L848.6 251.3L844.5 249.1L840.3 246.8L836.2 244.6L832.1 242.5L828.1 240.5L824.2 238.6L820.5 236.9L816.5 235.1L812.3 233.4L807.9 231.6L803.5 229.9L798.9 228.2L794.4 226.5L789.9 224.9L785.5 223.3L781.2 221.9L777.2 220.5L773.4 219.2" style="opacity:0.45"/><path d="M785.3 223.7L789.5 225.7L793.9 227.7L798.3 229.7L802.7 231.7L807.1 233.8L811.3 235.7L815.4 237.7L819.3 239.5L822.9 241.3L826.8 243.2L830.8 245.1L834.9 247.1L839.1 249.1L843.4 251.2L847.6 253.2L851.7 255.1L855.8 257.0L859.7 258.8L863.5 260.5L863.5 260.5L860.0 258.3L856.4 256.0L852.6 253.6L848.6 251.2L844.6 248.8L840.5 246.5L836.5 244.2L832.4 242.0L828.4 239.9L824.5 238.0L820.8 236.3L816.7 234.6L812.5 232.9L808.1 231.3L803.5 229.7L798.9 228.1L794.3 226.6L789.8 225.1L785.3 223.7" style="opacity:0.45"/><path d="M780.7 223.1L784.8 225.0L789.0 227.0L793.4 229.0L797.8 231.1L802.2 233.1L806.5 235.1L810.7 237.1L814.8 239.0L818.7 240.8L822.4 242.5L826.2 244.3L830.3 246.2L834.4 248.1L838.6 250.1L842.9 252.0L847.2 254.0L851.3 255.9L855.4 257.7L859.4 259.5L859.4 259.5L855.8 257.1L852.0 254.7L848.1 252.2L844.1 249.7L840.1 247.3L836.0 245.0L832.0 242.7L828.1 240.6L824.2 238.7L820.5 236.9L816.5 235.2L812.3 233.5L807.9 231.8L803.3 230.2L798.7 228.6L794.1 227.1L789.5 225.7L785.1 224.4L780.7 223.1" style="opacity:0.6"/><path d="M830.0 197.7L832.7 198.2L836.4 198.6L840.7 199.1L845.5 199.6L850.3 200.2L854.9 200.8L858.9 201.5L863.5 202.3L868.2 203.1L872.7 203.9L877.0 204.6L880.5 205.1" style="opacity:0.9"/><path d="M830.0 198.0L832.7 198.3L836.4 198.6L840.7 199.0L845.5 199.4L850.3 199.9L854.9 200.5L859.0 201.2L863.5 202.0L868.2 203.0L872.7 203.9L876.9 204.7L880.4 205.4L880.4 205.4L877.0 204.5L872.9 203.4L868.3 202.3L863.7 201.2L859.2 200.2L855.1 199.5L850.4 198.9L845.6 198.5L840.8 198.3L836.4 198.1L832.7 198.0L830.0 198.0" style="opacity:0.9"/><path d="M866.2 241.9L867.3 244.2L868.7 247.1L870.4 250.5L872.3 254.6L874.5 259.2L877.0 264.4L879.7 270.1L881.1 273.2L882.7 276.8L884.5 280.6L886.4 284.8L888.4 289.1L890.4 293.6L892.5 298.1L894.6 302.6L896.7 307.0L898.7 311.2L900.6 315.1L902.3 318.8L903.9 322.0L905.2 324.7" style="opacity:0.9"/><path d="M895.3 329.5L896.3 333.5L897.6 338.0L899.1 342.6L900.7 347.2L902.3 351.0L904.2 355.0L906.3 359.0L908.6 363.0L911.1 366.9L913.7 370.7L916.3 374.2L919.1 377.7L922.1 381.4L925.2 385.0L925.2 385.0L923.3 380.6L921.4 376.3L919.6 372.2L917.9 368.2L916.0 364.1L913.9 360.0L911.7 356.0L909.5 352.1L907.3 348.4L905.1 345.0L902.6 341.0L900.0 336.9L897.5 333.0L895.3 329.5" style="opacity:0.45"/><path d="M902.6 335.7L904.4 340.1L906.3 344.3L908.0 348.0L909.9 351.9L912.0 355.9L914.2 359.9L916.5 363.8L918.8 367.7L921.1 371.4L923.5 375.0L926.1 378.9L928.8 382.7L928.8 382.7L926.5 378.7L924.3 374.6L922.2 370.7L920.1 366.9L918.0 363.0L915.7 359.0L913.5 355.0L911.3 351.2L909.1 347.4L907.1 343.9L904.8 339.9L902.6 335.7" style="opacity:0.45"/><path d="M897.1 338.3L898.7 342.8L900.5 347.3L902.1 351.1L904.0 355.1L906.0 359.2L908.2 363.2L910.5 367.2L912.9 371.1L915.4 374.7L918.0 378.4L920.8 382.2L923.7 386.0L923.7 386.0L921.5 381.8L919.4 377.6L917.4 373.5L915.4 369.6L913.3 365.7L911.1 361.6L908.8 357.6L906.5 353.8L904.2 350.0L902.0 346.5L899.5 342.4L897.1 338.3" style="opacity:0.75"/><path d="M904.8 345.1L905.5 349.3L906.6 353.7L908.0 358.1L909.8 362.3L912.1 366.4L914.7 370.0L917.7 373.4L921.0 376.6L924.6 379.9L924.6 379.9L923.3 375.2L922.0 370.8L920.6 366.7L918.7 362.5L916.5 358.6L913.9 354.8L911.0 351.3L907.9 348.1L904.8 345.1" style="opacity:0.9"/><path d="M896.9 325.0L897.9 328.3L899.2 332.3L900.7 336.6L902.5 341.0L904.4 345.3L906.3 348.9L908.4 352.7L910.7 356.6L913.1 360.5L915.7 364.3L918.3 368.0L920.8 371.5L920.8 371.5L919.0 367.6L917.1 363.5L915.1 359.3L913.1 355.2L911.1 351.2L909.2 347.4L907.3 343.9L905.1 339.8L902.8 335.6L900.7 331.6L898.7 328.0L896.9 325.0" style="opacity:0.6"/><path d="M895.3 325.7L896.3 329.0L897.6 333.0L899.1 337.3L900.9 341.8L902.8 346.1L904.5 349.9L906.5 353.7L908.7 357.7L911.0 361.7L913.4 365.6L915.9 369.4L918.3 373.0L920.9 376.6L923.7 380.4L926.5 384.2L926.5 384.2L924.4 380.0L922.2 375.8L920.3 371.8L918.3 368.0L916.3 363.9L914.2 359.9L912.0 355.9L909.9 351.9L907.8 348.2L905.7 344.6L903.5 340.5L901.2 336.4L899.0 332.3L897.0 328.7L895.3 325.7" style="opacity:0.9"/><path d="M913.0 350.2L914.9 354.3L916.9 358.3L919.0 362.4L921.2 366.3L923.3 370.1L925.5 373.8L928.0 377.7L930.6 381.6L933.1 385.3L935.5 388.6L937.5 391.4" style="opacity:0.6"/><path d="M899.1 342.7L899.9 347.6L900.7 351.9L901.9 356.2L903.7 360.5L906.0 364.5L908.7 368.3L911.8 371.8L915.1 374.9L918.6 378.0L918.6 378.0L917.6 373.4L916.5 369.0L915.1 364.6L913.2 360.4L911.0 356.4L908.4 352.7L905.5 349.3L902.5 346.3L899.1 342.7" style="opacity:0.9"/><path d="M924.5 395.9L924.6 400.5L924.6 404.9L924.6 409.2L924.7 413.5L924.9 417.7L925.2 421.8L925.5 425.9L925.9 430.0L926.2 434.3L926.4 439.1L926.6 444.0L926.7 448.9L926.7 448.9L928.0 444.2L929.1 439.3L930.1 434.5L930.6 430.0L930.8 425.7L930.7 421.4L930.2 417.2L929.5 412.9L928.5 408.7L927.3 404.5L926.0 400.3L924.5 395.9" style="opacity:0.45"/><path d="M926.6 400.2L926.7 404.6L926.9 408.9L927.1 413.2L927.4 417.4L927.8 421.6L928.2 425.8L928.6 430.0L928.9 434.4L929.1 439.3L929.1 439.3L930.0 434.5L930.5 430.0L930.8 425.7L930.7 421.4L930.4 417.1L929.7 412.9L928.8 408.6L927.7 404.4L926.6 400.2" style="opacity:0.45"/><path d="M926.7 380.2L926.9 385.2L927.2 390.4L927.4 395.4L927.7 400.1L928.0 404.4L928.5 408.7L929.1 412.9L929.9 417.2L930.8 421.4L931.8 425.7L932.6 430.0L933.3 434.6L933.3 434.6L934.3 430.0L935.0 425.6L935.4 421.1L935.6 416.6L935.4 412.2L934.9 407.8L934.2 403.5L933.2 399.2L932.0 394.6L930.4 389.8L928.6 384.9L926.7 380.2" style="opacity:0.6"/><path d="M931.0 399.5L931.5 403.9L931.9 408.2L932.3 412.6L932.6 416.9L932.9 421.3L933.1 425.6L933.2 430.0L933.1 434.7L932.8 439.7L932.4 444.7L932.0 449.6L931.7 454.0L931.4 457.7L931.4 457.7L932.1 454.0L932.9 449.7L933.6 444.8L934.3 439.8L934.8 434.8L935.0 430.0L934.9 425.6L934.6 421.1L934.1 416.8L933.5 412.4L932.7 408.1L931.9 403.8L931.0 399.5" style="opacity:0.75"/><path d="M927.7 385.1L928.2 390.2L928.7 395.2L929.0 399.8L929.3 404.2L929.7 408.5L930.1 412.8L930.5 417.1L930.9 421.4L931.3 425.7L931.7 430.0L931.9 434.6L931.9 439.6L931.9 444.6L931.8 449.5L931.8 449.5L932.9 444.8L933.8 439.7L934.6 434.8L935.1 430.0L935.3 425.5L935.2 421.1L934.9 416.7L934.3 412.3L933.6 408.0L932.7 403.7L931.7 399.4L930.6 394.9L929.2 390.0L927.7 385.1" style="opacity:0.45"/><path d="M957.2 409.9L958.6 414.8L959.7 419.6L960.4 423.7L961.1 428.0L961.7 432.5L962.3 437.0L962.8 441.5L963.3 445.8L963.8 450.0L964.0 454.8L964.0 459.8" style="opacity:0.3"/><path d="M957.7 428.6L958.1 433.0L958.5 437.5L958.8 441.9L959.1 446.1L959.3 450.1L959.5 454.7L959.4 459.5L959.2 464.2" style="opacity:0.5"/><path d="M956.1 415.5L956.3 420.4L956.3 424.5L956.6 428.8L957.3 433.1L958.4 437.5L959.7 441.8L961.2 446.0L961.2 446.0L961.9 441.6L962.3 437.0L962.2 432.4L961.5 428.0L960.2 423.7L958.5 419.9L956.1 415.5" style="opacity:0.5"/><path d="M904.0 520.3L900.8 524.3L897.6 527.8L894.3 530.8L891.0 533.5L887.6 535.9L884.1 538.4L880.5 540.9L876.6 543.5L873.4 545.8L870.1 548.3L866.8 550.8L863.3 553.4L859.8 556.0L856.2 558.5L852.6 561.0L848.9 563.3L845.2 565.4L841.4 567.3L837.5 569.0L833.3 570.3" style="opacity:0.45"/><path d="M854.4 555.3L850.3 556.7L846.3 557.9L842.5 558.8L838.8 559.5L835.3 560.0L831.5 560.5L827.6 560.9L823.5 561.3L819.3 561.7L815.2 562.2L811.0 562.8L807.0 563.5L803.2 564.4L799.8 565.3L794.6 566.4L794.6 566.4L799.9 567.0L803.4 567.6L807.2 568.3L811.2 568.8L815.4 569.2L819.7 569.4L824.2 569.2L828.6 568.8L832.8 568.0L836.9 566.8L840.7 565.2L844.3 563.2L847.7 560.8L851.1 558.2L854.4 555.3" style="opacity:0.75"/><path d="M886.6 541.5L882.8 543.9L878.8 546.4L875.4 548.5L871.9 550.7L868.3 553.0L864.6 555.3L860.9 557.7L857.1 560.0L853.3 562.2L849.5 564.4L845.6 566.3L841.7 568.1L837.6 569.7L833.4 571.0L829.0 572.0L824.5 572.9L824.5 572.9L829.1 572.9L833.7 572.7L838.3 572.2L842.7 571.2L847.1 569.9L851.3 568.2L855.5 566.2L859.5 563.9L863.3 561.5L867.0 558.8L870.6 556.1L873.9 553.3L877.0 550.5L879.9 547.8L883.3 544.6L886.6 541.5" style="opacity:0.75"/><path d="M890.7 533.1L887.5 535.8L884.1 538.4L880.6 541.0L876.9 543.8L873.7 546.2L870.4 548.6L866.9 551.0L863.4 553.5L859.7 555.9L856.0 558.2L852.3 560.4L848.5 562.4L844.7 564.1L840.9 565.6L836.9 566.8L832.8 567.7L828.5 568.4L824.1 568.9L819.7 569.3L815.4 569.6L811.2 569.8" style="opacity:0.45"/><path d="M927.5 424.6L926.7 428.1L925.8 432.2L924.9 436.8L924.0 441.4L923.1 445.8L922.3 449.6L921.4 453.9L920.7 457.5L919.9 460.9L918.8 465.2L917.0 471.0L916.1 474.2L915.2 477.8L914.2 481.7L913.2 486.0L912.2 490.4L911.1 494.9L909.9 499.4L908.8 503.9" style="opacity:0.9"/><path d="M903.9 511.4L901.5 514.6L899.2 517.3L896.0 520.9L893.0 524.0L890.0 526.7L887.1 529.2L884.1 531.7L881.0 534.4L877.7 537.2L874.2 540.4L871.5 543.2L868.6 546.2L865.7 549.3L862.6 552.4L862.6 552.4L866.6 550.6L870.4 548.7L874.1 546.7L877.6 544.8L881.5 542.3L885.2 539.8L888.6 537.1L891.7 534.3L894.6 531.1L897.2 527.5L899.6 523.4L901.8 518.9L902.9 515.3L903.9 511.4" style="opacity:0.9"/><path d="M897.6 522.0L894.7 525.4L891.7 528.3L888.6 530.9L885.4 533.3L882.0 535.7L878.5 538.2L874.6 540.9L871.4 543.2L868.1 545.6L864.7 548.0L861.3 550.5L857.8 552.9L854.2 555.2L850.7 557.4L847.1 559.5L843.5 561.3L840.0 562.9L836.3 564.3L832.4 565.4L828.2 566.3L823.9 567.0L823.9 567.0L828.3 566.9L832.6 566.6L836.7 566.0L840.7 565.2L844.6 563.9L848.5 562.4L852.4 560.6L856.2 558.5L860.0 556.3L863.6 553.9L867.2 551.4L870.6 548.9L873.8 546.3L876.8 543.8L880.4 540.8L883.8 538.0L886.9 535.1L889.8 532.2L892.6 529.1L895.1 525.8L897.6 522.0" style="opacity:0.6"/><path d="M880.4 540.8L876.6 543.4L873.3 545.6L869.9 547.9L866.4 550.3L862.7 552.6L859.0 554.8L855.3 557.0L851.6 559.1L847.8 560.9L844.0 562.6L840.3 564.0L836.5 565.1L832.5 566.1L828.3 566.8L824.0 567.3L819.7 567.8L815.4 568.2L811.2 568.5L807.2 568.8L803.4 569.1L800.0 569.5L800.0 569.5L803.4 569.6L807.2 569.7L811.2 569.9L815.4 570.0L819.8 570.0L824.2 569.9L828.6 569.6L833.0 569.0L837.3 568.2L841.4 567.1L845.3 565.6L849.2 563.8L853.0 561.7L856.8 559.4L860.4 557.0L864.0 554.4L867.4 551.7L870.7 549.1L873.9 546.4L876.9 543.8L880.4 540.8" style="opacity:0.6"/><path d="M961.0 441.1L960.4 446.2L959.9 451.2L959.4 455.9L958.9 459.9L958.4 465.2L958.0 469.8L957.6 473.9L956.9 478.1L955.8 482.7L954.7 486.3L953.4 490.3L951.9 494.4L950.3 498.5L948.6 502.6L948.6 502.6L950.8 498.7L952.8 494.8L954.7 490.8L956.4 486.9L957.7 483.2L959.0 478.5L959.8 474.2L960.2 469.9L960.4 465.4L960.6 460.0L960.8 456.0L960.9 451.3L960.9 446.2L961.0 441.1" style="opacity:0.5"/><path d="M953.8 490.4L952.0 494.4L950.1 498.4L948.1 502.3L946.1 506.1L944.1 509.5L942.0 513.3L940.0 516.9L937.9 520.2L935.7 523.4L933.2 526.4L930.3 529.2L927.5 531.4L924.3 533.4L920.7 535.3L917.0 537.2L913.3 539.1L909.5 541.2" style="opacity:0.7"/><path d="M954.7 482.2L953.4 485.9L951.8 489.6L950.1 493.6L948.2 497.5L946.2 501.4L944.2 505.1L942.3 508.5L940.2 512.3L938.1 515.8L936.1 519.1L934.0 522.1L931.6 524.9L928.9 527.6L926.3 529.6L923.2 531.5L919.8 533.3L916.1 535.2L912.2 537.1L908.3 539.3L904.5 541.8L901.2 544.2L897.9 546.8L897.9 546.8L901.4 544.4L904.8 542.1L908.7 539.8L912.6 537.9L916.5 536.1L920.3 534.4L923.8 532.7L927.0 530.8L929.9 528.7L932.8 525.9L935.2 523.0L937.4 519.9L939.4 516.5L941.4 513.0L943.4 509.1L945.2 505.6L947.1 501.8L948.9 497.8L950.6 493.8L952.2 489.8L953.6 485.9L954.7 482.2" style="opacity:0.3"/><path d="M947.3 506.7L944.7 509.8L942.0 513.3L939.5 516.6L937.2 519.7L934.8 522.7L932.4 525.6L929.7 528.5L927.1 530.9L924.2 533.4L921.0 535.8L917.5 538.2" style="opacity:0.5"/><path d="M723.9 584.4L719.5 582.5L715.0 581.2L710.9 580.5L707.0 580.3L702.5 580.8L696.6 582.0L693.3 583.1L689.6 584.6L685.5 586.3L681.2 588.3" style="opacity:0.9"/><path d="M769.1 572.7L764.2 574.0L759.0 575.5L754.2 576.9L750.0 578.1L745.1 579.8L741.0 581.6L737.1 583.1L733.0 584.0L728.6 584.0L724.0 583.4L719.5 582.7L715.0 582.4L711.0 582.6L711.0 582.6L715.0 582.7L719.4 583.2L723.9 584.2L728.5 585.0L733.1 585.1L737.4 584.2L741.4 582.7L745.6 580.9L750.3 579.0L754.4 577.6L759.2 576.0L764.3 574.3L769.1 572.7" style="opacity:0.45"/><path d="M760.0 578.4L755.0 579.4L750.8 580.3L745.9 581.8L741.8 583.5L737.7 585.1L733.2 586.4L728.3 586.8L723.5 586.6L723.5 586.6L728.2 587.9L733.4 588.4L738.4 587.6L742.8 586.1L746.9 584.2L751.5 582.2L755.3 580.5L760.0 578.4" style="opacity:0.6"/><path d="M768.5 570.6L763.5 571.9L758.4 573.3L753.5 574.6L749.2 575.8L744.2 577.6L740.1 579.3L736.4 580.7L732.8 581.5L728.8 581.6L724.5 581.0L719.8 580.3L715.1 580.0L710.9 580.3L707.1 580.8L707.1 580.8L710.9 580.7L715.0 580.8L719.7 581.4L724.2 582.3L728.6 583.2L732.9 583.3L736.9 582.4L740.7 580.9L744.8 579.1L749.7 577.1L753.8 575.7L758.6 574.0L763.6 572.3L768.5 570.6" style="opacity:0.75"/><path d="M714.9 579.3L710.8 579.3L706.9 579.5L702.4 580.0L696.5 581.0L693.0 581.5L689.1 582.3L684.8 583.1L680.3 584.0L675.7 585.1L671.2 586.1L666.8 587.2L662.8 588.2L659.3 589.2L653.9 590.8L649.4 592.3L649.4 592.3L654.0 591.0L659.4 589.7L663.0 588.9L667.0 588.0L671.4 587.1L675.9 586.1L680.5 585.2L685.1 584.2L689.3 583.3L693.2 582.5L696.6 581.8L702.5 580.7L706.9 580.0L710.8 579.5L714.9 579.3" style="opacity:0.6"/><path d="M693.6 584.4L689.6 584.9L685.3 585.5L680.8 586.2L676.1 587.0L671.6 587.9L667.2 588.8L663.2 589.7L659.7 590.7L654.3 592.3L649.8 593.9L645.9 595.5L642.4 597.1L638.9 598.8L638.9 598.8L642.6 597.7L646.3 596.5L650.3 595.4L654.9 594.2L660.2 592.8L663.7 592.0L667.7 591.1L672.0 590.0L676.5 588.9L681.1 587.7L685.5 586.6L689.8 585.4L693.6 584.4" style="opacity:0.6"/><path d="M693.2 582.5L689.1 582.2L684.6 582.2L680.0 582.4L675.3 583.0L670.6 583.8L666.3 585.0L662.4 586.4L658.9 588.0L653.8 590.4L649.5 592.8L649.5 592.8L654.4 592.4L659.9 591.8L663.6 591.6L667.7 591.2L672.1 590.3L676.6 589.2L681.1 587.7L685.4 586.1L689.5 584.3L693.2 582.5" style="opacity:0.75"/><path d="M763.5 571.8L758.3 573.1L753.4 574.4L749.2 575.6L744.1 577.3L739.9 579.0L736.3 580.3L732.7 581.0L728.8 580.9L724.6 580.2L719.9 579.4L715.1 579.1L710.8 579.2L706.9 579.7L702.4 580.5L696.6 581.7L693.2 582.5L689.4 583.5L689.4 583.5L693.3 582.9L696.7 582.5L702.6 581.6L707.1 581.2L710.9 581.0L715.0 581.0L719.6 581.5L724.2 582.4L728.6 583.1L732.9 583.1L736.8 582.2L740.6 580.6L744.7 578.7L749.6 576.7L753.7 575.2L758.4 573.5L763.5 571.8" style="opacity:0.6"/><path d="M769.2 572.9L764.1 573.8L758.8 574.8L753.9 575.9L749.7 577.0L744.7 578.8L740.7 580.9L737.0 582.7L733.0 584.1L728.6 584.8" style="opacity:0.6"/><path d="M706.9 580.3L702.5 580.7L696.5 581.5L693.1 581.9L689.2 582.6L684.9 583.4L680.4 584.4L675.8 585.5L671.3 586.7L667.0 587.9L663.0 589.1L663.0 589.1L667.1 588.4L671.5 587.6L676.1 586.8L680.7 585.9L685.2 585.0L689.5 584.1L693.4 583.2L696.7 582.4L702.5 581.2L706.9 580.3" style="opacity:0.75"/><path d="M558.4 564.1L560.7 567.7L563.0 571.4L565.4 575.2L567.9 579.0L570.4 582.6L573.0 586.1L575.7 589.4L578.9 593.0L582.1 596.5L585.5 599.9L588.9 602.8L592.6 605.2L596.4 606.9L600.1 607.7L604.4 607.9L609.0 607.7L613.5 607.2L617.7 606.6L621.2 606.0" style="opacity:0.6"/><path d="M543.2 542.9L545.1 546.9L547.1 550.7L549.3 554.3L551.6 557.9L554.1 561.6L556.7 565.4L559.1 568.9L561.6 572.5L564.3 576.0L567.1 579.6L570.0 582.9L573.1 586.1L576.2 588.9L579.8 592.1L583.5 595.2L587.1 598.1L590.9 600.6L590.9 600.6L588.0 597.2L585.2 593.6L582.3 589.8L579.4 585.9L577.0 582.7L574.5 579.3L572.0 575.7L569.4 572.2L566.8 568.6L564.1 565.1L561.3 561.9L558.1 558.4L555.0 555.2L551.9 552.2L549.0 549.3L546.1 546.3L543.2 542.9" style="opacity:0.9"/><path d="M535.7 531.8L536.7 536.6L538.0 541.3L539.4 545.4L541.6 549.4L544.1 552.9L547.1 556.1L550.4 558.9L554.0 561.7L557.9 564.5" style="opacity:0.45"/><path d="M528.4 525.3L530.0 529.3L531.9 533.6L534.0 538.1L536.1 542.3L538.2 546.1L540.6 550.0L543.2 553.6L545.9 557.0L548.7 560.3L551.5 563.7L554.5 567.2L557.1 570.4L559.9 573.8L562.7 577.3L562.7 577.3L560.1 573.6L557.7 570.0L555.2 566.6L552.5 562.9L549.8 559.4L547.1 556.1L544.5 552.7L541.9 549.1L539.4 545.4L537.1 541.7L534.8 537.6L532.5 533.3L530.4 529.1L528.4 525.3" style="opacity:0.9"/><path d="M548.1 555.3L550.3 559.0L552.6 562.8L555.0 566.7L557.2 570.3L559.6 574.0L562.2 577.6L564.9 581.3L567.8 584.7L570.9 587.9L574.1 590.8L577.8 594.0L581.5 597.1L585.3 600.0L585.3 600.0L582.5 596.2L579.6 592.3L576.7 588.4L574.2 585.1L571.7 581.6L569.1 578.0L566.4 574.5L563.6 571.0L560.7 567.7L557.8 564.6L554.5 561.3L551.3 558.2L548.1 555.3" style="opacity:0.45"/><path d="M530.0 524.5L531.3 528.7L532.9 533.2L534.6 537.7L536.4 542.1L538.3 546.1L540.5 550.1L542.9 553.8L545.5 557.3L548.2 560.7L551.0 564.1L553.9 567.6L556.6 570.8L559.5 574.0L562.5 577.4L565.6 580.7L568.8 583.9L572.0 587.0L575.3 589.8L575.3 589.8L572.8 586.3L570.5 582.6L568.1 578.8L565.7 574.9L563.4 571.1L561.0 567.5L558.6 563.9L555.8 560.2L553.1 556.7L550.3 553.5L547.7 550.3L545.0 547.0L542.4 543.5L540.0 540.2L537.4 536.3L534.8 532.2L532.3 528.2L530.0 524.5" style="opacity:0.6"/><path d="M526.0 522.4L527.2 525.8L528.8 529.9L530.6 534.3L532.5 538.8L534.6 543.1L536.7 547.1L539.2 551.0L541.8 554.7L544.6 558.1L547.4 561.3L550.3 564.6L553.4 568.0L556.1 571.1L559.0 574.4L562.0 577.8L562.0 577.8L559.6 574.0L557.2 570.3L554.9 566.8L552.3 563.1L549.6 559.5L547.0 556.1L544.5 552.7L541.9 549.1L539.4 545.4L537.1 541.8L534.7 537.7L532.3 533.4L530.0 529.3L527.9 525.5L526.0 522.4" style="opacity:0.9"/><path d="M530.9 528.9L532.6 533.3L534.4 537.8L536.3 542.2L538.3 546.1L540.6 550.0L543.1 553.7L545.7 557.1L548.5 560.5L551.4 563.8L554.4 567.2L557.1 570.4L560.0 573.7L563.0 577.0L566.0 580.4" style="opacity:0.75"/><path d="M545.9 557.0L548.2 560.7L550.5 564.5L553.0 568.4L555.1 571.9L557.3 575.7L559.8 579.5L562.3 583.3L565.0 587.0L567.9 590.6L570.8 593.8L574.2 597.3L577.7 600.8L581.4 604.2L585.5 607.2L589.9 609.8L594.6 611.6L599.3 612.3L604.1 612.3L608.9 611.9L608.9 611.9L604.2 611.2L599.7 610.1L595.8 608.6L592.0 606.2L588.6 603.2L585.4 600.0L582.3 596.4L579.1 592.8L575.9 589.2L573.1 586.1L570.2 582.8L567.3 579.4L564.3 576.0L561.4 572.6L558.4 569.4L555.5 566.4L552.3 563.1L549.0 560.0L545.9 557.0" style="opacity:0.75"/><path d="M546.0 557.0L548.2 560.7L550.6 564.4L553.0 568.3L555.2 571.9L557.4 575.6L559.9 579.4L562.5 583.2L565.2 586.9L568.1 590.4L571.1 593.6L574.5 597.1L578.0 600.5L581.8 603.8L585.8 606.8L590.1 609.3L594.8 611.0L599.4 611.7L604.1 611.7L604.1 611.7L599.6 610.6L595.6 609.0L591.8 606.5L588.4 603.5L585.2 600.2L582.1 596.6L579.0 592.9L575.8 589.3L573.0 586.1L570.2 582.8L567.3 579.4L564.4 576.0L561.4 572.6L558.5 569.4L555.6 566.3L552.3 563.0L549.1 560.0L546.0 557.0" style="opacity:0.6"/><path d="M529.3 519.0L532.0 519.2L535.1 519.3L538.5 519.5L542.3 519.7L546.4 519.8L550.6 520.0L555.1 520.2L559.7 520.4L564.4 520.6L569.1 520.8L573.8 521.1L578.5 521.3L583.2 521.5L587.7 521.7L592.0 521.9L596.1 522.2L600.0 522.4L604.5 522.6L609.1 522.9L613.8 523.1L618.4 523.4L623.1 523.7L627.7 524.0L632.2 524.2L636.6 524.5L640.8 524.8L644.9 525.1L648.7 525.4L652.2 525.6L655.5 525.9L658.4 526.2L661.0 526.4L671.6 526.5L670.6 529.9L669.4 531.8L667.7 534.2L665.6 537.0L663.0 540.1L660.1 543.5L657.0 547.0L653.7 550.6L650.3 554.3L646.8 557.9L643.3 561.4L639.8 564.8L637.0 567.5L633.9 570.4L630.5 573.4L627.0 576.4L623.4 579.5L619.7 582.6L616.0 585.7L612.5 588.6L609.0 591.5L605.8 594.1L605.8 594.1L609.0 591.5L612.5 588.7L616.1 585.8L619.8 582.8L623.6 579.7L627.2 576.7L630.8 573.7L634.2 570.7L637.4 567.9L640.2 565.2L643.7 561.9L647.2 558.4L650.8 554.7L654.3 551.1L657.6 547.5L660.8 544.0L663.7 540.7L666.2 537.6L668.4 534.7L670.2 532.3L671.5 530.2L671.9 525.6L661.0 525.5L658.5 525.2L655.6 524.9L652.3 524.6L648.7 524.4L644.9 524.1L640.9 523.8L636.7 523.5L632.3 523.3L627.7 523.0L623.1 522.7L618.5 522.5L613.8 522.2L609.2 522.0L604.5 521.8L600.0 521.5L596.2 521.4L592.0 521.2L587.7 521.0L583.2 520.8L578.6 520.6L573.9 520.5L569.1 520.3L564.4 520.1L559.7 520.0L555.1 519.8L550.7 519.7L546.4 519.5L542.3 519.4L538.6 519.3L535.1 519.2L532.0 519.1L529.3 519.0" style="opacity:0.45"/><path d="M538.5 519.7L542.3 519.9L546.4 520.1L550.6 520.3L555.1 520.5L559.7 520.7L564.4 520.9L569.1 521.2L573.8 521.4L578.5 521.6L583.2 521.9L587.7 522.1L592.0 522.3L596.1 522.6L600.0 522.8L604.5 523.1L609.1 523.3L613.7 523.6L618.4 523.9L623.1 524.2L627.7 524.5L632.2 524.8L636.6 525.0L640.8 525.3L644.8 525.6L648.6 525.9L652.2 526.2L655.4 526.5L658.3 526.7L661.0 527.0L671.4 527.0L670.1 529.7L669.0 531.5L667.3 533.9L665.1 536.7L662.6 539.8L659.7 543.1L656.6 546.6L653.3 550.2L649.9 553.9L646.4 557.5L642.9 561.1L639.5 564.4L636.7 567.1L633.5 570.0L630.2 573.0L626.7 576.0L623.1 579.1L619.4 582.2L615.7 585.3L612.2 588.3L608.7 591.1L605.5 593.8L602.5 596.2L599.9 598.4L597.7 600.3L597.7 600.3L599.9 598.5L602.6 596.3L605.7 594.0L608.9 591.4L612.4 588.6L616.1 585.7L619.8 582.7L623.5 579.6L627.2 576.6L630.7 573.6L634.1 570.6L637.3 567.8L640.2 565.2L643.6 561.8L647.2 558.3L650.7 554.7L654.2 551.1L657.6 547.5L660.7 544.0L663.6 540.6L666.2 537.5L668.4 534.7L670.1 532.3L671.4 530.1L671.9 525.6L661.0 525.5L658.5 525.3L655.6 525.0L652.3 524.7L648.7 524.4L644.9 524.2L640.9 523.9L636.6 523.6L632.3 523.4L627.7 523.1L623.1 522.9L618.5 522.6L613.8 522.4L609.1 522.2L604.5 521.9L600.0 521.7L596.1 521.6L592.0 521.4L587.7 521.2L583.2 521.1L578.6 520.9L573.9 520.8L569.1 520.6L564.4 520.4L559.7 520.3L555.1 520.2L550.6 520.0L546.4 519.9L542.3 519.8L538.5 519.7" style="opacity:0.6"/><path d="M701.6 468.1L698.3 472.0L694.9 475.9L691.5 479.9L688.3 483.7L685.7 486.8L683.1 490.0L680.3 493.4L677.6 496.8L674.8 500.2L672.0 503.7L669.3 507.3L666.5 510.8L663.9 514.3L661.2 517.9L658.7 521.3L656.2 524.8L653.8 528.2L651.5 531.7L649.2 535.1L646.9 538.6L644.6 542.0L642.4 545.5L640.2 548.9L638.0 552.3L635.8 555.7L633.6 559.0L631.1 562.9L631.1 562.9L633.9 559.2L636.3 556.0L638.8 552.8L641.2 549.6L643.6 546.3L646.1 543.0L648.5 539.7L651.0 536.4L653.4 533.0L655.9 529.7L658.4 526.3L660.9 522.9L663.4 519.5L666.0 516.0L668.7 512.4L671.3 508.8L674.0 505.3L676.7 501.7L679.3 498.1L681.9 494.6L684.4 491.1L686.9 487.7L689.3 484.5L692.3 480.4L695.4 476.3L698.5 472.2L701.6 468.1" style="opacity:0.9"/><path d="M714.7 453.8L713.0 455.7L710.7 458.3L708.1 461.3L705.2 464.7L702.0 468.4L698.7 472.3L695.4 476.3L692.1 480.3L688.9 484.1L686.3 487.3L683.7 490.5L681.0 493.9L678.3 497.3L675.5 500.8L672.8 504.3L670.0 507.9L667.3 511.4L664.7 515.0L662.1 518.5L659.5 521.9L657.1 525.4L654.6 528.8L652.3 532.2L649.9 535.7L647.6 539.1L645.4 542.5L643.1 545.9L640.9 549.3L638.6 552.7L636.4 556.1L634.2 559.4L631.6 563.2L628.9 567.3L626.1 571.4L623.3 575.5L620.6 579.6L620.6 579.6L623.6 575.7L626.6 571.7L629.6 567.7L632.5 563.8L635.2 560.2L637.6 556.9L640.0 553.7L642.4 550.4L644.8 547.1L647.2 543.8L649.6 540.5L652.1 537.2L654.5 533.8L656.9 530.4L659.4 527.1L661.9 523.7L664.5 520.2L667.1 516.7L669.7 513.2L672.4 509.6L675.1 506.1L677.8 502.5L680.4 499.0L683.0 495.5L685.6 492.0L688.1 488.7L690.6 485.4L693.6 481.5L696.7 477.4L699.9 473.3L703.0 469.2L706.0 465.4L708.7 461.8L711.1 458.6L713.2 455.9L714.7 453.8" style="opacity:0.9"/><path d="M687.2 487.9L684.5 491.2L681.9 494.5L679.1 498.0L676.4 501.4L673.6 505.0L670.9 508.5L668.1 512.0L665.5 515.5L662.8 519.0L660.3 522.5L657.8 525.9L655.3 529.3L652.9 532.7L650.5 536.1L648.1 539.5L645.8 542.8L643.5 546.2L641.2 549.6L638.9 552.9L636.6 556.2L634.4 559.6L631.8 563.3L629.0 567.3L626.1 571.4L623.3 575.5L620.5 579.5L617.8 583.4L617.8 583.4L620.6 579.6L623.5 575.6L626.4 571.6L629.4 567.6L632.2 563.6L634.9 559.9L637.3 556.7L639.6 553.4L641.9 550.1L644.3 546.8L646.6 543.4L649.0 540.0L651.3 536.7L653.7 533.3L656.1 529.9L658.6 526.4L661.0 523.0L663.5 519.6L666.1 516.0L668.7 512.5L671.4 508.9L674.1 505.3L676.8 501.7L679.4 498.2L682.0 494.7L684.6 491.3L687.2 487.9" style="opacity:0.75"/><path d="M708.6 461.8L705.7 465.2L702.5 468.8L699.2 472.7L695.8 476.6L692.5 480.6L689.3 484.4L686.6 487.5L684.0 490.8L681.2 494.1L678.5 497.5L675.7 500.9L672.9 504.4L670.2 507.9L667.4 511.5L664.7 515.0L662.1 518.5L659.5 521.9L657.0 525.3L654.6 528.8L652.2 532.2L649.9 535.6L647.5 539.0L645.3 542.5L643.0 545.9L640.8 549.3L638.5 552.6L636.3 556.0L634.1 559.4L631.6 563.2L628.9 567.2L626.1 571.4L623.3 575.5L620.6 579.6L618.0 583.5L615.6 587.1L615.6 587.1L618.3 583.7L621.1 580.0L624.1 576.1L627.1 572.1L630.2 568.1L633.1 564.3L635.8 560.6L638.3 557.4L640.7 554.1L643.1 550.9L645.5 547.6L647.9 544.3L650.3 540.9L652.7 537.6L655.1 534.2L657.5 530.8L660.0 527.5L662.4 524.1L665.0 520.6L667.5 517.1L670.2 513.5L672.8 510.0L675.4 506.4L678.1 502.8L680.7 499.2L683.3 495.7L685.8 492.2L688.3 488.8L690.7 485.6L693.7 481.6L696.8 477.4L699.9 473.3L703.0 469.2L705.9 465.4L708.6 461.8" style="opacity:0.45"/><path d="M549.1 439.1L549.5 443.5L550.1 447.8L550.8 452.0L551.6 456.2L552.3 460.3L552.9 464.3L553.1 468.2L553.0 472.1L552.3 476.6L551.1 481.1L549.5 485.6L547.7 490.0L545.9 494.2L544.4 498.1L543.2 501.7L541.1 507.2" style="opacity:0.45"/><path d="M550.8 456.4L550.8 460.6L550.6 464.6L550.1 468.3L549.3 471.7L548.1 475.5L546.5 479.4L544.7 483.3L542.7 487.4L540.9 491.4L539.4 495.4L538.3 499.1L536.5 504.8L534.8 509.8L533.5 514.0" style="opacity:0.45"/><path d="M544.8 427.0L545.1 431.6L545.4 435.9L545.7 439.9L546.4 444.3L547.3 448.6L548.4 452.8L549.6 456.8L550.7 460.7L551.7 464.5L552.4 468.2L552.7 472.1L552.4 476.6L551.4 481.2L550.0 485.8L550.0 485.8L552.4 481.6L554.3 477.1L555.6 472.3L556.0 468.0L555.8 463.8L555.0 459.6L554.0 455.5L552.7 451.5L551.2 447.5L549.8 443.4L548.5 439.3L547.4 435.6L546.1 431.4L544.8 427.0" style="opacity:0.75"/><path d="M535.4 410.0L535.3 414.3L535.4 419.0L535.6 423.7L535.9 428.5L536.3 433.2L536.8 437.5L537.4 441.6L538.5 446.3L539.9 450.8L541.5 454.9L543.1 458.7L544.6 462.2L546.0 465.4L547.0 468.5L547.7 472.0L547.7 472.0L548.5 468.4L548.7 464.9L548.6 461.2L548.1 457.2L547.2 453.1L546.3 448.9L545.2 444.6L544.2 440.2L543.3 436.3L542.2 432.1L541.0 427.6L539.7 423.0L538.2 418.5L536.8 414.1L535.4 410.0" style="opacity:0.45"/><path d="M544.8 412.7L545.2 417.3L545.6 422.0L546.2 426.7L546.8 431.3L547.6 435.5L548.5 439.3L549.7 443.5L551.2 447.5L552.8 451.4" style="opacity:0.9"/><path d="M542.9 422.5L542.6 427.3L542.5 432.0L542.6 436.5L543.0 440.4L544.0 444.9L545.6 449.1L547.5 453.1L549.6 456.8L551.8 460.4L551.8 460.4L551.7 456.2L551.4 451.9L550.8 447.6L550.0 443.4L549.0 439.2L547.9 435.5L546.5 431.3L544.7 427.0L542.9 422.5" style="opacity:0.75"/><path d="M552.7 468.3L551.9 472.0L550.4 476.1L548.5 480.1L546.4 484.1L544.2 488.1L542.2 492.1L540.5 496.0L539.2 499.6L537.2 505.2L535.4 510.1" style="opacity:0.6"/><path d="M535.4 402.9L534.5 406.3L533.9 410.3L533.6 414.6L533.7 419.3L534.3 424.0L535.3 428.6L536.8 433.1L538.6 437.2L540.6 440.9L543.0 445.1L543.0 445.1L543.4 440.3L543.9 436.2L544.1 431.8L543.9 427.1L543.3 422.4L542.3 417.8L540.9 413.4L539.2 409.4L537.3 405.8L535.4 402.9" style="opacity:0.6"/><path d="M596.5 401.6L594.3 404.2L591.7 407.3L588.9 410.9L586.0 414.9L582.9 419.1L579.9 423.5L576.8 427.9L574.8 431.0L572.7 434.4L570.5 438.1L568.3 441.9L566.1 445.8L564.0 449.9L561.9 453.9L559.8 457.9L559.8 457.9L562.8 454.5L565.7 451.0L568.6 447.5L571.5 444.0L574.2 440.5L576.7 437.1L579.0 433.8L581.1 430.7L583.9 426.1L586.6 421.5L589.2 416.9L591.5 412.5L593.5 408.4L595.2 404.7L596.5 401.6" style="opacity:0.45"/><path d="M597.0 405.8L594.6 409.1L591.9 412.8L589.1 416.9L586.2 421.2L583.2 425.6L580.2 430.1L578.2 433.3L576.1 436.7L573.8 440.3L571.6 444.1L569.3 448.0L567.0 451.9L567.0 451.9L569.8 448.3L572.5 444.7L575.2 441.2L577.7 437.8L580.0 434.5L582.1 431.4L585.0 426.8L587.8 422.2L590.4 417.7L592.9 413.4L595.1 409.4L597.0 405.8" style="opacity:0.75"/><path d="M581.1 430.7L578.5 433.5L575.6 436.4L572.7 439.6L569.8 442.9L566.9 446.3L564.1 449.9L561.3 453.5L558.8 457.2L556.4 460.9L554.3 464.5L552.4 467.9L550.9 471.3L548.6 475.9L546.5 480.6L544.6 485.1L542.9 489.3" style="opacity:0.6"/><path d="M588.0 422.4L585.0 426.8L581.9 431.2L579.7 434.3L577.4 437.6L574.9 441.0L572.4 444.6L569.8 448.3L567.2 452.0L564.7 455.8L562.2 459.5L559.8 463.1L557.5 466.6L555.5 469.9L553.6 473.0L550.9 477.4L548.4 481.8L546.0 485.9L543.9 489.9L541.9 493.5" style="opacity:0.75"/><path d="M573.9 435.2L570.7 438.2L567.4 441.3L564.3 444.6L561.3 448.0L558.5 451.6L556.0 455.3L553.8 459.1L552.0 462.9L550.4 466.6L549.2 470.2L547.3 475.2L547.3 475.2L551.0 471.3L553.7 468.8L556.6 465.9L559.3 462.8L562.0 459.3L564.5 455.6L566.8 451.7L568.8 447.6L570.7 443.5L572.4 439.3L573.9 435.2" style="opacity:0.75"/><path d="M597.9 406.4L595.0 409.3L591.8 412.7L588.4 416.4L585.0 420.4L581.6 424.6L578.3 428.9L576.0 431.9L573.7 435.1L571.5 438.7L569.2 442.5L567.1 446.5L565.1 450.6L563.2 454.8L561.4 458.9L559.7 463.1L558.2 467.1" style="opacity:0.45"/><path d="M558.3 345.8L557.2 348.4L555.8 352.0L554.1 356.2L552.3 360.8L550.6 365.8L549.0 370.7L547.7 375.5L546.7 379.6L545.7 383.8L544.7 388.2L543.9 392.6L543.2 397.0L542.7 401.4L542.4 405.8L542.4 405.8L542.9 401.4L543.7 397.1L544.6 392.7L545.7 388.4L546.8 384.1L547.9 379.9L548.9 375.8L550.2 371.0L551.7 366.1L553.3 361.2L554.8 356.4L556.3 352.2L557.5 348.5L558.3 345.8" style="opacity:0.6"/><path d="M558.9 349.1L556.8 352.4L554.5 356.3L552.2 360.8L550.0 365.6L548.1 370.4L546.6 375.2L545.6 379.3L544.7 383.6L544.0 388.0L543.6 392.5L543.5 397.1L543.7 401.5L544.2 405.9L544.2 405.9L545.4 401.7L546.8 397.6L548.2 393.5L549.7 389.3L551.1 385.2L552.4 381.0L553.4 376.9L554.5 372.3L555.6 367.4L556.7 362.3L557.6 357.4L558.4 352.9L558.9 349.1" style="opacity:0.75"/><path d="M550.4 365.7L548.2 370.5L546.3 375.1L544.8 379.1L543.3 383.2L541.9 387.6L540.8 392.0L540.0 396.5L539.5 401.0L539.4 405.6L539.8 410.0L540.7 414.4L542.0 418.8L543.7 423.2L543.7 423.2L543.3 418.6L543.2 414.1L543.4 409.9L543.9 405.8L544.6 401.6L545.3 397.3L546.1 393.0L546.9 388.7L547.6 384.3L548.3 380.0L548.8 375.7L549.5 370.8L550.4 365.7" style="opacity:0.45"/><path d="M545.8 364.2L543.4 369.1L541.3 373.8L539.5 377.8L537.8 381.9L536.2 386.2L534.8 390.8L533.7 395.5L533.0 400.3L532.7 405.2L532.8 410.2L533.6 415.3L535.0 420.2L536.7 424.9L538.6 429.4L540.7 433.7L542.8 437.9" style="opacity:0.9"/><path d="M547.6 359.2L545.4 364.1L543.3 369.0L541.5 373.8L540.1 377.9L538.9 382.2L537.7 386.6L536.8 391.2L536.1 395.9L535.8 400.6L535.9 405.4L536.3 410.1L537.3 414.7L537.3 414.7L537.5 410.1L538.0 405.5L538.9 401.0L539.8 396.5L540.9 392.0L541.9 387.5L542.9 383.2L543.8 378.8L544.5 374.6L545.4 369.6L546.4 364.4L547.6 359.2" style="opacity:0.75"/><path d="M537.2 400.9L536.4 405.4L536.0 410.1L536.1 415.0L536.7 419.8L537.7 424.6L538.9 429.3L540.3 433.9L541.8 438.1L543.2 442.1L544.5 445.8L545.9 450.7L545.9 450.7L545.2 445.6L544.6 441.8L543.7 437.6L542.6 433.2L541.4 428.6L540.2 424.0L539.1 419.4L538.1 414.7L537.5 410.1L537.2 405.5L537.2 400.9" style="opacity:0.45"/><path d="M548.4 365.1L546.3 369.9L544.4 374.6L542.9 378.6L541.4 382.8L540.1 387.1L539.1 391.6L538.3 396.2L537.9 400.8L537.9 405.5L538.3 410.1L539.3 414.6L540.7 419.1L540.7 419.1L540.5 414.4L540.8 410.0L541.3 405.7L542.1 401.3L542.9 397.0L543.8 392.6L544.7 388.2L545.5 383.8L546.2 379.5L546.8 375.2L547.5 370.2L548.4 365.1" style="opacity:0.9"/><path d="M716.8 387.8L720.8 387.3L725.6 386.8L730.7 386.3L735.6 385.8L740.0 385.5L744.6 385.1L749.2 384.6L753.6 384.3L757.6 384.6L761.1 385.8L764.3 388.1L767.1 391.4L769.5 395.2L771.2 399.1L772.2 403.0L772.2 407.7L771.1 412.6L769.1 417.5L766.2 422.1L763.7 425.1L760.8 428.1L757.5 431.1L753.8 433.8L750.1 436.3L746.2 438.5L741.9 440.2L737.0 441.6L731.9 442.7L727.1 443.6L723.0 444.3L723.0 444.3L727.1 443.7L731.9 443.0L737.1 442.0L742.1 440.7L746.5 439.1L750.5 437.0L754.4 434.6L758.1 431.9L761.6 429.0L764.6 425.9L767.2 422.9L770.2 418.1L772.4 413.0L773.6 407.8L773.5 402.8L772.5 398.7L770.6 394.5L768.1 390.6L765.1 387.2L761.7 384.7L757.8 383.5L753.5 383.3L749.1 383.7L744.5 384.3L739.9 384.8L735.5 385.2L730.6 385.8L725.6 386.5L720.8 387.2L716.8 387.8" style="opacity:0.45"/><path d="M714.1 389.5L717.0 389.2L721.0 388.8L725.8 388.3L730.8 387.7L735.7 387.3L740.1 387.0L744.8 386.6L749.4 386.1L753.6 385.8L757.3 386.0L760.4 387.1L763.2 389.2L765.9 392.3L768.1 395.9L769.8 399.6L770.7 403.2L770.7 407.5L769.7 412.2L767.8 416.8L765.0 421.3L762.7 424.1L759.8 427.1L756.6 430.0L753.0 432.7L749.3 435.1L745.6 437.2L741.5 438.8L736.6 440.2L731.6 441.3L726.9 442.2L722.8 442.9" style="opacity:0.6"/><path d="M718.7 388.2L723.4 387.6L728.5 387.0L733.5 386.5L738.0 386.1L742.4 386.0L747.0 385.9L751.6 385.9L755.9 386.0L755.9 386.0L751.7 385.4L747.1 384.9L742.4 384.6L737.9 384.7L733.3 385.2L728.4 386.0L723.4 387.1L718.7 388.2" style="opacity:0.75"/><path d="M718.7 387.9L723.4 387.5L728.5 387.0L733.5 386.5L738.0 386.3L742.4 386.1L747.0 386.1L751.6 386.1L755.9 386.1L759.5 386.0L759.5 386.0L755.9 385.3L751.7 384.7L747.1 384.2L742.4 383.9L737.9 384.0L733.3 384.6L728.3 385.5L723.3 386.7L718.7 387.9" style="opacity:0.6"/><path d="M728.2 385.0L733.3 385.1L738.0 385.3L742.4 385.6L747.0 385.7L751.7 385.6L755.9 385.3L759.6 384.7L759.6 384.7L756.1 383.7L751.8 382.7L747.2 382.1L742.4 382.0L737.8 382.5L733.1 383.6L728.2 385.0" style="opacity:0.6"/><path d="M711.9 389.5L714.8 389.3L718.8 388.7L723.5 388.1L728.6 387.4L733.5 386.7L738.0 386.3L742.4 386.1L747.0 386.1L751.6 386.2L755.9 386.3L759.4 386.4L759.4 386.4L755.9 385.8L751.7 385.3L747.1 384.9L742.4 384.7L737.9 384.7L733.3 385.2L728.3 385.9L723.3 386.9L718.7 387.9L714.7 388.8L711.9 389.5" style="opacity:0.6"/><path d="M723.8 389.6L728.8 389.2L733.8 388.9L738.2 388.7L742.4 388.6L746.9 388.5L751.5 388.4L755.7 388.2L755.7 388.2L751.5 387.5L747.0 386.8L742.4 386.5L738.0 386.6L733.6 387.3L728.7 388.3L723.8 389.6" style="opacity:0.45"/><path d="M703.3 452.9L707.3 452.3L712.0 451.3L716.9 450.1L721.7 448.8L726.1 447.3L730.3 445.7L734.6 443.8L738.9 441.8L742.7 439.8" style="opacity:0.45"/><path d="M700.1 452.2L702.9 451.6L706.8 450.7L711.4 449.5L716.3 448.1L721.1 446.6L725.4 445.2L729.6 443.6L733.9 441.8L738.2 440.0L742.2 438.2L742.2 438.2L738.0 439.4L733.5 440.6L729.0 441.9L724.7 443.2L720.4 444.6L715.6 446.1L710.8 447.8L706.4 449.5L702.7 451.0L700.1 452.2" style="opacity:0.45"/><path d="M700.2 452.5L703.0 451.8L706.8 450.8L711.4 449.6L716.3 448.1L721.1 446.7L725.4 445.2L729.6 443.7L734.0 442.1L738.4 440.4L742.4 438.8L745.7 437.4L745.7 437.4L742.2 438.4L738.1 439.6L733.7 441.0L729.2 442.4L724.9 443.8L720.6 445.2L715.8 446.8L711.1 448.5L706.6 450.0L702.8 451.4L700.2 452.5" style="opacity:0.9"/><path d="M700.3 453.0L703.2 452.7L707.2 451.9L711.8 450.8L716.7 449.3L721.4 447.7L725.7 446.0L729.7 444.1L734.0 442.0" style="opacity:0.9"/><path d="M718.5 407.2L716.0 410.6L713.2 414.7L710.7 418.7L708.4 422.6L706.2 426.4L704.3 430.2L702.5 433.9L700.8 437.4L698.2 442.4L695.7 447.2L695.7 447.2L698.8 442.7L701.8 438.1L704.0 434.7L706.1 431.2L708.1 427.4L710.1 423.6L712.2 419.5L714.3 415.3L716.6 411.0L718.5 407.2" style="opacity:0.45"/><path d="M723.3 398.7L719.8 402.4L716.5 405.9L713.6 409.2L710.6 413.1L707.8 417.1L705.3 421.0L703.2 424.8L701.3 428.6L699.6 432.3L698.1 435.9L695.8 441.0L693.7 446.0L691.7 450.7L690.3 454.8L690.3 454.8L693.2 451.6L696.5 447.7L700.0 443.4L703.3 438.9L705.7 435.6L707.9 432.1L710.0 428.4L711.9 424.5L713.8 420.4L715.8 416.2L717.7 411.7L719.3 407.7L721.2 403.3L723.3 398.7" style="opacity:0.45"/><path d="M722.6 392.0L718.9 395.7L715.3 399.5L712.0 403.1L709.1 406.4L706.0 410.5L703.3 414.6L701.0 418.6L699.0 422.6L697.3 426.5L695.9 430.2L694.6 433.9L692.6 439.0L690.6 444.2L688.8 449.0L688.8 449.0L692.2 445.2L695.8 441.0L699.3 436.6L701.9 433.5L704.3 430.2L706.5 426.6L708.7 422.8L710.8 418.7L712.8 414.5L714.9 410.0L716.6 406.0L718.5 401.6L720.5 396.8L722.6 392.0" style="opacity:0.75"/><path d="M726.1 394.3L722.8 398.3L719.6 402.3L716.7 406.1L714.1 409.5L711.4 413.6L708.9 417.7L706.6 421.6L704.6 425.6L702.7 429.4L701.0 433.1L699.4 436.7L697.0 441.6L694.6 446.6L692.4 451.1L692.4 451.1L695.4 447.1L698.6 442.6L701.8 438.0L704.1 434.7L706.2 431.2L708.4 427.6L710.5 423.7L712.6 419.7L714.8 415.6L717.1 411.3L719.0 407.5L721.2 403.3L723.6 398.9L726.1 394.3" style="opacity:0.6"/><path d="M738.0 380.9L735.7 383.8L733.1 387.2L730.2 391.0L727.2 395.1L724.2 399.3L721.3 403.4L718.7 407.3L716.4 410.9L713.9 415.1L711.6 419.2L709.5 423.2L707.6 427.1L705.7 431.0L703.9 434.7L702.2 438.2L699.6 443.2L697.0 448.0L697.0 448.0L700.0 443.4L703.0 438.7L705.2 435.3L707.3 431.8L709.4 428.1L711.6 424.3L713.8 420.4L716.2 416.4L718.7 412.3L720.9 408.7L723.3 404.7L726.0 400.5L728.7 396.1L731.4 391.8L733.9 387.7L736.1 384.1L738.0 380.9" style="opacity:0.75"/><path d="M712.7 414.4L709.3 417.9L706.2 421.4L703.4 424.9L701.1 428.5L699.2 432.0L697.6 435.6L695.5 440.8L693.6 446.0L692.0 450.9L692.0 450.9L695.6 447.2L699.4 443.0L702.8 438.6L705.1 435.3L707.1 431.7L708.7 427.8L710.1 423.5L711.4 419.1L712.7 414.4" style="opacity:0.6"/><path d="M738.7 381.5L736.3 384.2L733.4 387.4L730.4 391.1L727.2 395.1L724.1 399.2L721.2 403.3L718.6 407.3L716.4 410.9L714.0 415.1L711.9 419.4L710.1 423.5L708.4 427.6L706.9 431.6L705.4 435.4L705.4 435.4L707.8 432.1L710.2 428.6L712.7 424.9L715.2 421.2L717.7 417.3L720.3 413.3L722.6 409.8L725.1 405.9L727.7 401.6L730.3 397.2L732.8 392.8L735.1 388.6L737.1 384.7L738.7 381.5" style="opacity:0.45"/><path d="M734.5 382.9L731.3 385.9L727.9 389.4L724.5 393.2L721.3 397.4L718.5 401.6L716.2 405.8L714.5 409.7L712.7 414.4L711.2 419.0L711.2 419.0L714.4 415.4L717.7 411.6L720.4 408.4L723.3 404.7L726.0 400.5L728.6 396.0L730.9 391.5L732.9 387.0L734.5 382.9" style="opacity:0.9"/><path d="M737.8 380.8L735.5 383.6L732.8 386.9L729.8 390.7L726.7 394.8L723.7 398.9L720.9 403.1L718.3 407.1L716.1 410.7L713.7 415.0L711.6 419.2L709.7 423.3L708.0 427.4L706.4 431.3L706.4 431.3L708.7 427.8L711.1 424.1L713.5 420.3L716.1 416.3L718.7 412.3L721.0 408.8L723.6 404.9L726.3 400.6L729.0 396.3L731.6 391.9L734.0 387.8L736.1 384.0L737.8 380.8" style="opacity:0.75"/><path d="M719.5 402.2L716.1 405.7L713.0 408.8L709.8 412.7L706.9 416.5L704.3 420.4L702.0 424.2L700.0 427.9L698.3 431.6L696.8 435.2L694.6 440.2L692.4 445.3L690.6 450.0L689.2 454.2L689.2 454.2L692.2 451.0L695.6 447.2L699.1 442.9L702.4 438.4L704.8 435.1L706.9 431.6L708.9 427.9L710.8 423.9L712.6 419.7L714.3 415.3L716.2 410.7L717.7 406.7L719.5 402.2" style="opacity:0.9"/><path d="M664.0 640.1L666.3 641.3L669.4 642.7L673.1 644.3L677.2 646.0L681.7 647.7L686.3 649.4L690.9 651.0L695.3 652.5L699.4 653.8L704.0 655.1L708.8 656.4L713.6 657.7L718.4 658.8L722.9 659.9L727.0 660.7L730.4 661.4L730.4 661.4L727.2 660.1L723.3 658.5L719.0 656.9L714.4 655.3L709.6 653.6L704.9 652.0L700.5 650.5L696.4 649.1L692.0 647.7L687.4 646.3L682.7 644.9L678.1 643.6L673.7 642.4L669.8 641.4L666.5 640.6L664.0 640.1" style="opacity:0.5"/><path d="M732.7 661.7L734.4 659.9L736.6 657.5L739.3 654.6L742.2 651.4L745.3 647.9L748.5 644.3L751.7 640.6L754.8 637.0L757.7 633.5L760.4 630.3L763.2 626.8L766.1 623.2L769.0 619.5L771.9 615.8L774.6 612.3L777.1 609.0L779.3 606.1L781.1 603.6" style="opacity:0.5"/><path d="M782.8 601.9L781.5 604.2L780.0 607.1L778.2 610.7L776.2 614.8L774.1 619.1L771.9 623.5L769.8 627.9L767.7 632.2L765.8 636.1L764.2 639.6L761.9 644.1L759.6 648.4L757.4 652.6L755.3 656.4L753.5 659.9L752.0 662.7" style="opacity:0.5"/><path d="M751.0 664.9L753.4 664.5L756.4 664.0L759.9 663.3L763.8 662.6L768.1 661.7L772.6 660.8L777.3 659.8L782.1 658.8L786.8 657.8L791.5 656.8L796.0 655.8L800.2 654.8L804.4 653.8L808.8 652.7L813.4 651.5L818.0 650.3L822.6 649.0L827.2 647.8L831.5 646.6L835.7 645.4L839.4 644.3L842.8 643.4L845.7 642.5L845.7 642.5L842.7 643.1L839.3 643.9L835.5 644.7L831.3 645.7L826.9 646.7L822.3 647.8L817.7 648.8L813.0 649.9L808.4 651.0L804.0 652.1L799.8 653.1L795.6 654.0L791.1 655.1L786.5 656.2L781.7 657.3L777.0 658.4L772.3 659.5L767.9 660.6L763.6 661.7L759.7 662.6L756.3 663.5L753.3 664.3L751.0 664.9" style="opacity:0.6"/><path d="M689.1 640.5L691.5 640.3L694.7 640.0L698.3 639.7L702.5 639.3L706.9 638.9L711.7 638.4L716.6 637.9L721.5 637.4L726.5 636.8L731.3 636.3L735.9 635.7L740.2 635.1L744.8 634.4L749.6 633.6L754.5 632.7L759.5 631.8L764.4 630.9L769.2 630.0L773.7 629.1L777.8 628.3L781.5 627.6L784.6 626.9L784.6 626.9L781.4 627.4L777.7 628.0L773.6 628.6L769.1 629.4L764.3 630.2L759.4 630.9L754.4 631.7L749.4 632.5L744.6 633.2L740.0 633.9L735.7 634.5L731.1 635.1L726.3 635.7L721.4 636.3L716.5 636.9L711.6 637.5L706.8 638.1L702.4 638.7L698.3 639.2L694.6 639.7L691.5 640.1L689.1 640.5" style="opacity:0.4"/><path d="M787.0 625.9L784.4 627.1L780.9 628.7L776.8 630.6L772.4 632.8L767.8 635.1L763.5 637.4L759.7 639.4L755.5 641.9L751.2 644.5L747.1 647.1L743.4 649.5L740.3 651.5L740.3 651.5L743.6 649.7L747.4 647.6L751.7 645.2L756.0 642.7L760.2 640.4L764.1 638.4L768.4 636.1L772.8 633.7L777.2 631.4L781.2 629.2L784.6 627.3L787.0 625.9" style="opacity:0.5"/><path d="M827.4 573.2L825.6 575.5L823.3 578.7L820.6 582.6L817.7 586.8L814.8 591.2L812.0 595.6L809.4 599.6L807.0 603.7L804.5 608.0L802.0 612.4L799.6 616.7L797.5 620.6L795.8 623.9L795.8 623.9L798.0 620.9L800.5 617.2L803.3 613.2L806.1 609.0L808.8 604.8L811.4 600.8L813.9 596.8L816.6 592.4L819.3 587.8L821.9 583.4L824.2 579.3L826.1 575.8L827.4 573.2" style="opacity:0.5"/><path d="M794.3 626.4L796.2 625.0L798.5 623.2L801.2 621.1L804.2 618.8L807.4 616.2L810.9 613.4L814.5 610.5L818.1 607.6L821.9 604.6L825.5 601.6L829.2 598.7L832.6 595.8L835.9 593.2L839.2 590.5L842.7 587.7L846.3 584.7L850.0 581.7L853.8 578.7L857.4 575.7L861.0 572.8L864.5 570.0L867.7 567.4L870.6 564.9L873.2 562.7L875.4 560.8L875.4 560.8L873.1 562.5L870.3 564.5L867.2 566.8L863.9 569.3L860.3 571.9L856.6 574.7L852.8 577.5L849.0 580.4L845.2 583.3L841.6 586.2L838.0 589.0L834.7 591.6L831.4 594.3L827.9 597.1L824.3 600.1L820.7 603.2L817.1 606.3L813.5 609.4L810.0 612.4L806.7 615.3L803.6 618.0L800.7 620.6L798.2 622.8L796.0 624.8L794.3 626.4" style="opacity:0.5"/><path d="M909.1 536.1L907.4 537.6L905.4 539.5L903.1 541.7L900.5 544.1L897.7 546.7L894.7 549.5L891.5 552.5L888.2 555.6L884.9 558.8L881.4 562.1L878.0 565.3L874.5 568.6L871.1 571.8L867.8 575.0L864.6 578.0L861.6 580.9L858.7 583.6L855.5 586.7L852.2 589.8L848.9 593.0L845.5 596.2L842.1 599.4L838.7 602.6L835.4 605.8L832.2 608.8L829.1 611.7L826.2 614.5L823.4 617.1L821.0 619.5L818.7 621.7L816.8 623.6" style="opacity:0.5"/><path d="M816.0 626.0L818.4 624.3L821.5 622.0L825.2 619.1L829.2 615.9L833.3 612.6L837.3 609.2L840.9 606.0L844.4 602.7L848.1 599.2L851.7 595.6L855.2 592.0L858.3 588.7L860.9 585.9" style="opacity:0.5"/><path d="M957.3 508.3L955.3 509.9L952.7 512.3L949.6 515.1L946.3 518.2L942.9 521.5L939.6 524.6L936.7 527.4L933.5 530.6L930.1 533.9L926.8 537.2L923.8 540.2L923.8 540.2L927.2 537.6L930.8 534.7L934.4 531.6L937.9 528.7L940.9 525.9L944.2 522.8L947.5 519.4L950.6 516.1L953.4 513.0L955.7 510.3L957.3 508.3" style="opacity:0.5"/><path d="M956.8 507.8L954.7 509.4L952.0 511.6L948.9 514.4L945.6 517.6L942.3 520.8L939.0 524.0L936.2 526.9L933.0 530.1L929.7 533.5L926.5 536.8L926.5 536.8L930.2 534.0L933.9 531.1L937.4 528.2L940.5 525.5L943.8 522.4L947.1 519.1L950.2 515.7L953.0 512.6L955.2 509.8L956.8 507.8" style="opacity:0.5"/><path d="M507.1 492.0L507.3 494.6L507.6 498.0L508.0 502.1L508.5 506.7L509.1 511.5L509.8 516.3L510.6 520.9L511.4 525.1L512.5 529.8L513.8 534.8L515.3 539.7L516.8 544.5L518.1 548.7L519.3 552.3L519.3 552.3L518.5 548.6L517.4 544.3L516.2 539.5L515.0 534.5L513.8 529.5L512.8 524.8L512.0 520.6L511.2 516.1L510.5 511.3L509.7 506.5L508.9 502.0L508.3 497.9L507.6 494.5L507.1 492.0" style="opacity:0.3"/><path d="M528.5 575.4L530.2 578.0L532.7 581.6L535.8 585.5L538.9 589.0L542.3 592.3L546.0 595.5L549.4 598.3L549.4 598.3L546.6 594.9L543.3 591.3L540.2 587.8L537.2 584.3L533.9 580.7L530.8 577.5L528.5 575.4" style="opacity:0.4"/><path d="M637.0 674.0L641.6 675.9L647.9 677.7L652.6 678.0L657.6 677.9L657.6 677.9L652.7 677.1L648.1 676.4L641.8 675.0L637.0 674.0" style="opacity:0.3"/><path d="M534.0 518.4L536.2 520.4L539.2 522.9L543.0 525.8L547.1 528.8L551.3 531.8L555.3 534.7L558.7 537.2L562.6 539.9L566.5 542.8L570.3 545.6L570.3 545.6L567.1 542.1L563.7 538.6L560.3 535.3L557.0 532.4L553.1 529.3L548.7 526.4L544.3 523.7L540.2 521.4L536.7 519.6L534.0 518.4" style="opacity:0.75"/><path d="M532.3 521.1L534.5 523.0L537.6 525.4L541.3 528.3L545.4 531.3L549.5 534.3L553.3 537.2L556.6 539.7L560.3 542.6L564.0 545.6L567.8 548.5L571.2 551.1L574.1 553.2" style="opacity:0.45"/><path d="M539.9 521.9L543.4 525.1L547.3 528.5L551.3 531.8L555.0 535.0L558.4 537.6L562.1 540.5L566.1 543.3L570.1 545.9L573.8 548.2L573.8 548.2L571.1 544.8L568.0 541.1L564.6 537.6L561.1 534.3L557.7 531.5L553.5 528.7L548.9 526.2L544.3 523.8L539.9 521.9" style="opacity:0.6"/><path d="M538.4 524.2L542.2 527.0L546.3 530.0L550.4 533.0L554.2 536.0L557.5 538.7L561.1 541.7L564.8 544.7L568.5 547.7L571.8 550.4L574.6 552.7L574.6 552.7L572.1 550.1L569.0 547.1L565.6 543.8L562.0 540.6L558.5 537.5L555.1 534.9L551.1 532.1L546.8 529.2L542.4 526.6L538.4 524.2" style="opacity:0.6"/><path d="M566.9 431.9L566.5 434.2L566.1 437.1L565.6 440.4L565.0 444.2L564.5 448.4L563.9 452.7L563.4 457.3L562.8 461.9L562.2 466.6L561.7 471.2L561.2 475.6L560.8 479.8L560.4 484.0L560.0 488.5L559.6 493.1L559.2 497.9L558.8 502.6L558.4 507.3L558.1 511.8L557.8 516.1L557.5 520.0L557.3 523.5L557.2 526.5" style="opacity:0.6"/><path d="M566.2 437.1L565.6 440.4L565.1 444.2L564.5 448.4L563.9 452.7L563.3 457.3L562.6 461.9L562.1 466.6L561.5 471.1L561.0 475.6L560.5 479.7L560.1 484.0L559.7 488.4L559.2 493.1L558.8 497.8L558.5 502.6L558.1 507.3L557.8 511.8L557.5 516.1L557.3 520.0L557.1 523.5L557.0 526.5L557.0 526.5L557.4 523.5L558.0 520.1L558.5 516.2L559.1 511.9L559.7 507.5L560.3 502.8L560.9 498.0L561.5 493.3L562.0 488.7L562.5 484.2L562.9 480.0L563.3 475.8L563.7 471.4L564.1 466.8L564.5 462.1L564.9 457.4L565.2 452.9L565.5 448.5L565.8 444.3L566.0 440.5L566.2 437.1" style="opacity:0.9"/><path d="M567.0 437.2L566.5 440.5L565.9 444.3L565.4 448.5L564.8 452.8L564.2 457.4L563.6 462.0L563.0 466.7L562.4 471.2L561.9 475.7L561.5 479.8L561.1 484.0L560.6 488.5L560.2 493.2L559.8 497.9L559.4 502.7L559.0 507.4L558.7 511.9L558.4 516.2L558.1 520.1L557.9 523.6L557.8 526.6" style="opacity:0.6"/><path d="M537.2 524.0L538.0 526.7L539.3 530.2L540.9 534.5L542.7 539.0L544.5 543.5L546.1 547.6L547.6 551.7L549.2 556.1L550.8 560.5L552.3 564.5L553.6 567.8L553.6 567.8L552.9 564.3L552.1 560.1L551.0 555.5L549.8 551.0L548.4 546.7L546.8 542.5L544.8 538.1L542.6 533.7L540.5 529.7L538.6 526.4L537.2 524.0" style="opacity:0.9"/><path d="M536.1 527.5L536.9 531.3L538.1 535.7L539.5 540.3L541.2 544.8L543.0 548.7L544.8 552.6L546.9 556.8L549.1 561.0" style="opacity:0.6"/><path d="M537.0 527.1L538.3 530.7L539.9 534.9L541.6 539.4L543.4 543.9L545.0 548.0L546.5 552.1L548.1 556.4L549.8 560.8L551.3 564.8L551.3 564.8L550.4 560.6L549.4 556.0L548.2 551.5L546.9 547.3L545.3 543.1L543.3 538.7L541.1 534.4L538.9 530.4L537.0 527.1" style="opacity:0.6"/><path d="M601.6 395.0L600.0 396.9L598.1 399.1L596.0 401.8L593.7 404.8L591.2 408.1L588.6 411.7L585.8 415.4L583.0 419.3L580.2 423.2L577.3 427.3L574.5 431.3L571.8 435.2L569.2 439.1L566.7 442.7L564.4 446.2L562.0 449.9L559.5 453.8L556.9 457.7L554.3 461.8L551.8 465.9L549.3 469.9L546.8 473.9L544.5 477.7L542.3 481.4L540.2 484.9L538.4 488.0L538.4 488.0L540.7 485.2L543.2 482.0L545.8 478.7L548.6 475.1L551.4 471.4L554.3 467.6L557.2 463.7L560.0 459.9L562.8 456.1L565.5 452.3L568.1 448.7L570.5 445.3L573.0 441.6L575.6 437.8L578.2 433.8L580.9 429.7L583.5 425.5L586.1 421.4L588.7 417.3L591.1 413.3L593.4 409.6L595.5 406.0L597.4 402.7L599.1 399.8L600.5 397.2L601.6 395.0" style="opacity:0.6"/><path d="M602.5 395.6L600.9 397.5L599.1 399.8L597.0 402.5L594.7 405.5L592.3 408.8L589.7 412.4L586.9 416.1L584.2 420.0L581.3 424.0L578.5 428.1L575.7 432.1L573.0 436.0L570.4 439.9L567.9 443.6L565.6 447.1L563.2 450.8L560.7 454.6L558.2 458.6L555.6 462.6L553.0 466.7L550.5 470.7L548.0 474.7L545.7 478.5L543.4 482.2L541.4 485.6L541.4 485.6L543.8 482.5L546.4 479.1L549.2 475.5L552.0 471.8L554.9 468.0L557.7 464.1L560.6 460.3L563.4 456.4L566.1 452.7L568.6 449.1L571.0 445.7L573.5 442.0L576.1 438.2L578.8 434.2L581.5 430.1L584.2 425.9L586.8 421.8L589.4 417.8L591.8 413.8L594.1 410.1L596.3 406.5L598.2 403.3L599.9 400.3L601.3 397.8L602.5 395.6" style="opacity:0.9"/><path d="M600.6 400.8L598.5 403.5L596.2 406.4L593.6 409.7L591.0 413.3L588.2 417.0L585.3 420.8L582.5 424.8L579.6 428.8L576.7 432.8L574.0 436.7L571.3 440.5L568.8 444.2L566.4 447.6L564.0 451.3L561.4 455.1L558.8 459.1L556.2 463.1L553.6 467.1L551.1 471.2L548.6 475.1L546.3 479.0L544.1 482.6L542.0 486.1L540.1 489.3L538.5 492.1L538.5 492.1L540.6 489.6L542.9 486.7L545.4 483.5L548.0 480.2L550.7 476.6L553.6 472.9L556.4 469.0L559.3 465.2L562.1 461.3L564.8 457.4L567.5 453.7L570.0 450.1L572.4 446.6L574.8 442.9L577.4 439.0L580.0 435.0L582.6 430.8L585.2 426.7L587.8 422.5L590.3 418.4L592.7 414.4L595.0 410.6L597.1 407.1L598.9 403.8L600.6 400.8" style="opacity:0.9"/><path d="M632.2 599.8L635.3 599.1L638.8 598.3L642.6 597.4L646.7 596.4L650.9 595.4L655.4 594.3L659.9 593.1L664.5 592.0L669.1 590.8L673.7 589.6L678.2 588.4L682.5 587.3L686.7 586.2L690.6 585.1L694.7 584.0L699.0 582.7L703.4 581.5L707.9 580.2L712.4 578.9L716.8 577.5L721.2 576.2L725.5 574.9L729.6 573.7L733.5 572.5L737.2 571.3L740.5 570.3L740.5 570.3L737.1 571.1L733.4 572.0L729.4 573.0L725.3 574.0L720.9 575.1L716.5 576.2L712.0 577.4L707.4 578.5L702.9 579.7L698.5 580.9L694.2 582.0L690.0 583.1L686.1 584.2L682.0 585.3L677.6 586.5L673.2 587.8L668.6 589.0L664.0 590.3L659.5 591.6L655.0 592.9L650.6 594.2L646.4 595.5L642.4 596.7L638.7 597.8L635.3 598.8L632.2 599.8" style="opacity:0.45"/><path d="M632.4 600.7L635.6 600.2L639.2 599.7L643.0 599.0L647.2 598.3L651.5 597.5L656.0 596.5L660.5 595.5L665.2 594.5L669.8 593.4L674.4 592.2L678.8 591.0L683.2 589.7L687.3 588.5L691.2 587.3L695.2 585.9L699.5 584.5L703.8 582.9L708.2 581.4L712.6 579.7L717.0 578.1L721.3 576.5" style="opacity:0.6"/><path d="M677.3 585.3L681.8 584.7L686.1 584.0L690.1 583.4L694.3 582.7L698.7 581.8L703.2 580.8L707.7 579.6L712.2 578.4L716.7 577.0L721.1 575.6L725.3 574.1L729.3 572.6L733.1 571.1L736.7 569.6L739.9 568.1L739.9 568.1L736.4 568.6L732.6 569.1L728.5 569.8L724.3 570.5L719.9 571.4L715.4 572.4L710.9 573.6L706.4 574.8L701.9 576.2L697.6 577.6L693.4 579.0L689.3 580.6L685.5 582.1L681.5 583.7L677.3 585.3" style="opacity:0.75"/><path d="M629.3 599.6L632.0 599.0L635.1 598.2L638.6 597.4L642.3 596.5L646.4 595.4L650.7 594.4L655.1 593.2L659.6 592.1L664.2 590.9L668.8 589.7L673.4 588.4L677.8 587.2L682.2 586.1L686.3 584.9L690.2 583.8L694.4 582.7L698.6 581.5L703.0 580.2L707.5 578.9L712.0 577.6L716.5 576.3L720.9 575.0L725.2 573.7L729.3 572.5L733.2 571.3L733.2 571.3L729.3 572.3L725.1 573.4L720.8 574.5L716.3 575.7L711.8 576.9L707.3 578.0L702.8 579.2L698.3 580.4L694.0 581.5L689.9 582.6L686.0 583.7L681.8 584.8L677.5 586.0L673.0 587.2L668.5 588.4L663.9 589.7L659.3 591.0L654.8 592.2L650.4 593.5L646.2 594.7L642.2 595.8L638.4 596.9L635.0 597.9L631.9 598.8L629.3 599.6" style="opacity:0.6"/><path d="M731.0 588.3L734.3 587.7L738.3 586.8L742.7 585.9L747.3 584.8L752.1 583.8L756.9 582.7L761.4 581.6L765.6 580.7L770.2 579.6L775.0 578.5L780.0 577.4L784.8 576.3L789.3 575.3L793.4 574.3L796.8 573.5" style="opacity:0.9"/><path d="M730.8 587.4L734.1 586.7L738.0 585.9L742.4 585.0L747.1 583.9L751.9 582.9L756.7 581.8L761.2 580.7L765.4 579.8L770.0 578.7L774.9 577.6L779.8 576.5L784.6 575.4L789.1 574.4L793.2 573.4L796.6 572.6L796.6 572.6L793.1 573.1L789.0 573.7L784.4 574.5L779.6 575.4L774.6 576.3L769.7 577.3L765.1 578.3L760.9 579.2L756.3 580.3L751.6 581.5L746.8 582.8L742.2 584.1L737.9 585.3L734.0 586.4L730.8 587.4" style="opacity:0.45"/><path d="M733.9 585.8L737.8 585.1L742.2 584.2L746.9 583.2L751.8 582.2L756.5 581.1L761.1 580.0L765.2 579.0L769.8 577.9L774.7 576.6L779.6 575.4L784.4 574.2L784.4 574.2L779.5 575.0L774.5 575.8L769.6 576.7L764.9 577.6L760.7 578.4L756.1 579.5L751.4 580.7L746.7 582.0L742.0 583.4L737.7 584.6L733.9 585.8" style="opacity:0.75"/><path d="M722 188L800 205L881 242C890 248 885 252 870 249L790 222L716 206" style="opacity:.7"/><path d="M762 215L820 240L872 270C880 285 870 290 850 272L790 232L760 214" style="opacity:.7"/><path d="M715 207C740 205 800 225 845 252L870 282" style="opacity:.7"/><path d="M866 242L880 270L906 327" style="opacity:.7"/></g></svg>
<div style="left:1131px;top:92px;width:12px;height:744px;background:#454545;"></div>
<div style="left:1131px;top:93px;width:12px;height:12px;background:#565656;border-radius:2px;"></div>
<svg style="left:1131px;top:93.5px" width="12" height="12" viewBox="-6 -6 12 12"><path d="M-3 2L0 -2L3 2" style="stroke:#cfcfcf;stroke-width:1.2"/></svg>
<div style="left:1132px;top:317px;width:10px;height:298px;background:#5a5a5a;border-radius:5px;"></div>
<div style="left:1131px;top:824px;width:12px;height:12px;background:#565656;border-radius:2px;"></div>
<svg style="left:1131px;top:824px" width="12" height="12" viewBox="-6 -6 12 12"><path d="M-3 -2L0 2L3 -2" style="stroke:#cfcfcf;stroke-width:1.2"/></svg>
<div style="left:257px;top:836px;width:886px;height:12px;background:#454545;"></div>
<div style="left:259px;top:836px;width:48px;height:12px;background:#3a3a3a;border:1px solid #8c8c8c;"></div>
<svg style="left:260px;top:837px" width="46" height="10"><path d="M0 10L46 2V10z" style="fill:#505050;stroke:none"/></svg>
<div style="left:309px;top:836px;width:48px;height:12px;background:#3a3a3a;border:1px solid #8c8c8c;"></div>
<svg style="left:310px;top:837px" width="46" height="10"><path d="M0 10L46 0V10z" style="fill:#444;stroke:none"/></svg>
<div style="left:419px;top:836px;width:48px;height:12px;background:#3a3a3a;border:1px solid #8c8c8c;"></div>
<svg style="left:420px;top:837px" width="46" height="10"><path d="M0 10L46 2V10z" style="fill:#505050;stroke:none"/></svg>
<div style="left:469px;top:836px;width:48px;height:12px;background:#3a3a3a;border:1px solid #8c8c8c;"></div>
<svg style="left:470px;top:837px" width="46" height="10"><path d="M23.0 0L46 10V0z" style="fill:#505050;stroke:none"/></svg>
<div class="t" style="top:837.34px;font-size:12px;line-height:12px;color:#ececec;letter-spacing:0.286px;left:260px;">50.0</div>
<div class="t" style="top:837.34px;font-size:12px;line-height:12px;color:#ececec;letter-spacing:-0.228px;left:425px;">0.0</div>
<svg style="left:362px;top:836px;" width="52" height="12" viewBox="0 0 52 12"><g style="stroke:#8a8a8a;stroke-width:1.400;stroke-linecap:butt"><path d="M2 6h8M22.500 6h9M27 1.500v9"/></g><rect x="42" y="2.500" width="7" height="7" style="fill:#a8a8a8;stroke:none"/></svg>
<svg style="left:520px;top:836px;" width="58" height="12" viewBox="0 0 58 12"><g style="stroke:#b0b0b0;stroke-width:1.100"><path d="M4.500 8.500a4 4 0 1 1 8 -.5"/><path d="M2.500 6.500l2 3 2.500-2.500" /><path d="M33 8.500a4 4 0 1 0 -8 -.5"/><path d="M35 6.500l-2 3 -2.500-2.500"/><circle cx="48.500" cy="6" r="4.300"/><path d="M48.500 6V1"/></g><circle cx="48.500" cy="6" r="1.300" style="fill:#b0b0b0;stroke:none"/></svg>
<div style="left:578px;top:836px;width:12px;height:12px;background:#565656;border-radius:2px;"></div>
<svg style="left:578px;top:836px;" width="12" height="12" viewBox="0 0 12 12"><path d="M7.500 3L4.500 6L7.500 9" style="stroke-width:1.200"/></svg>
<div style="left:735px;top:836px;width:184px;height:11px;background:#5e5e5e;border-radius:5.500px;"></div>
<div style="left:1119px;top:836px;width:12px;height:12px;background:#565656;border-radius:2px;"></div>
<svg style="left:1119px;top:836px;" width="12" height="12" viewBox="0 0 12 12"><path d="M4.500 3L7.500 6L4.500 9" style="stroke-width:1.200"/></svg>
<div style="left:1143px;top:48px;width:6px;height:805px;background:#383838;"></div>
<div style="left:1144px;top:92px;width:5px;height:761px;background:#353535;"></div>
<div style="left:253px;top:852px;width:895px;height:1px;background:#3f3f3f;"></div>
<div style="left:276px;top:863px;width:38px;height:33px;background:#4b4b4b;"></div>
<svg style="left:257px;top:860px;" width="14" height="40" viewBox="0 0 14 40"><g style="stroke:#8a8a8a;stroke-width:1.100"><path d="M2.500 9.500L6.500 5.500L10.500 9.500"/><path d="M2.500 27L6.500 31L10.500 27M2.500 32L6.500 36L10.500 32"/></g></svg>
<svg style="left:287px;top:871px;" width="16" height="16" viewBox="0 0 16 16"><g style="stroke:#c4c4c4;stroke-width:1.100"><rect x=".5" y="1" width="15" height="14" rx="1.500"/><path d="M4.500 1v14M11.500 1v14"/></g><g class="f"><path d="M8 3.500l1.500 1.500h-3zM8 8l-1.500-1.500h3zM8 9l1.500 1.500h-3zM8 13.500l-1.500-1.500h3z"/></g></svg>
<div style="left:1148px;top:23px;width:2px;height:877px;background:#343434;"></div>
<svg style="left:1156px;top:21.5px;" width="280" height="23" viewBox="0 0 280 23"><g style="stroke:#7c7c7c;stroke-width:1.100">
<path d="M7.500 7.500L4 11.500L7.500 15.500"/>
<path d="M26 7.500L29.500 11.500L26 15.500M30.500 7.500L34 11.500L30.500 15.500"/>
<path d="M43.500 6v11M45.500 6v11M47.500 6v11" style="stroke-width:.8"/>
<path d="M246 7.500L249.500 11.500L246 15.500"/>
<path d="M269 7.500L272.500 11.500L269 15.500M273.500 7.500L277 11.500L273.500 15.500"/></g></svg>
<div style="left:1157.5px;top:46px;width:32.5px;height:30px;background:#4b4b4b;"></div>
<svg style="left:1164px;top:51px;" width="20" height="20" viewBox="0 0 20 20"><circle cx="9" cy="9.500" r="7.300" style="stroke:#c4c4c4;stroke-width:1.300"/><path d="M8 8L16 16.500H18.500" style="stroke:#c4c4c4;stroke-width:1.400"/><path d="M5.500 5.500L12 6.500L6.500 12z" style="fill:#c4c4c4;stroke:none"/><path d="M11.500 11.500L16 16" style="stroke:#4b4b4b;stroke-width:.01"/></svg>
<div style="left:1157.5px;top:82px;width:32.5px;height:30px;background:#4b4b4b;"></div>
<svg style="left:1164.5px;top:88px;" width="19" height="18" viewBox="0 0 19 18"><g style="stroke:#c4c4c4"><rect x=".6" y="3.500" width="17.800" height="13.300" rx="1.800" style="stroke-width:1.100"/><path d="M.6 4V2.200A1.200 1.200 0 0 1 1.800 1H7L8.500 3.500z" style="fill:#8e8e8e;stroke:none"/><g transform="translate(0,.8)"><path d="M5 5.500L14 13.500M14 5.500L5 13.500" style="stroke:#9a9a9a;stroke-width:3"/></g></g></svg>
<div style="left:1157.5px;top:118px;width:32.5px;height:30px;background:#4b4b4b;"></div>
<svg style="left:1164.5px;top:124px;" width="19" height="18" viewBox="0 0 19 18"><g style="stroke:#c4c4c4"><rect x=".6" y="3.500" width="17.800" height="13.300" rx="1.800" style="stroke-width:1.100"/><path d="M.6 4V2.200A1.200 1.200 0 0 1 1.800 1H7L8.500 3.500z" style="fill:#8e8e8e;stroke:none"/><g transform="translate(0,.8)"><rect x="5.500" y="6" width="8" height="7.500" style="fill:#9a9a9a;stroke:#c4c4c4;stroke-width:.8"/><path d="M8 13.500V11a1.500 1.500 0 0 1 3 0V13.500" style="stroke-width:1"/></g></g></svg>
<div style="left:1157.5px;top:154px;width:32.5px;height:30px;background:#4b4b4b;"></div>
<svg style="left:1164.5px;top:160px;" width="19" height="18" viewBox="0 0 19 18"><g style="stroke:#c4c4c4"><rect x=".6" y="3.500" width="17.800" height="13.300" rx="1.800" style="stroke-width:1.100"/><path d="M.6 4V2.200A1.200 1.200 0 0 1 1.800 1H7L8.500 3.500z" style="fill:#8e8e8e;stroke:none"/><g transform="translate(0,.8)"><path d="M5.500 6L13.500 13M13.500 6L5.500 13" style="stroke:#c4c4c4;stroke-width:2.600"/></g></g></svg>
<div style="left:1157.5px;top:190px;width:32.5px;height:30px;background:#4b4b4b;"></div>
<svg style="left:1164.5px;top:196px;" width="19" height="18" viewBox="0 0 19 18"><g style="stroke:#c4c4c4"><rect x=".6" y="3.500" width="17.800" height="13.300" rx="1.800" style="stroke-width:1.100"/><path d="M.6 4V2.200A1.200 1.200 0 0 1 1.800 1H7L8.500 3.500z" style="fill:#8e8e8e;stroke:none"/><g transform="translate(0,.8)"><circle cx="9.500" cy="9.500" r="3.800" style="stroke-dasharray:1.500 1;stroke-width:1"/><path d="M6 6L13 13M13 6L6 13" style="stroke-width:.8;stroke-dasharray:1.500 1"/></g></g></svg>
<div style="left:1157.5px;top:226px;width:32.5px;height:30px;background:#4b4b4b;"></div>
<svg style="left:1164.5px;top:232px;" width="19" height="18" viewBox="0 0 19 18"><g style="stroke:#c4c4c4"><rect x=".6" y="3.500" width="17.800" height="13.300" rx="1.800" style="stroke-width:1.100"/><path d="M.6 4V2.200A1.200 1.200 0 0 1 1.800 1H7L8.500 3.500z" style="fill:#8e8e8e;stroke:none"/><g transform="translate(0,.8)"><rect x="4.500" y="6" width="10" height="7.500" style="stroke-width:1"/><path d="M4.500 8.500H14.500M9.500 8.500V13.500M9.500 11H14.500" style="stroke-width:1"/></g></g></svg>
<div style="left:1157.5px;top:262px;width:32.5px;height:30px;background:#4b4b4b;"></div>
<svg style="left:1164.5px;top:268px;" width="19" height="18" viewBox="0 0 19 18"><g style="stroke:#c4c4c4"><rect x=".6" y="3.500" width="17.800" height="13.300" rx="1.800" style="stroke-width:1.100"/><path d="M.6 4V2.200A1.200 1.200 0 0 1 1.800 1H7L8.500 3.500z" style="fill:#8e8e8e;stroke:none"/><g transform="translate(0,.8)"><path d="M5 6L8 8.500M14 6L11 8.500M5 13L8 10.500M14 13L11 10.500" style="stroke-width:1"/><path d="M8.500 7V9H6.500M10.500 7V9H12.500M8.500 12V10H6.500M10.500 12V10H12.500" style="stroke-width:.8"/></g></g></svg>
<div style="left:1157.5px;top:298px;width:32.5px;height:30px;background:#4b4b4b;"></div>
<svg style="left:1164.5px;top:304px;" width="19" height="18" viewBox="0 0 19 18"><g style="stroke:#c4c4c4"><rect x=".6" y="3.500" width="17.800" height="13.300" rx="1.800" style="stroke-width:1.100"/><path d="M.6 4V2.200A1.200 1.200 0 0 1 1.800 1H7L8.500 3.500z" style="fill:#8e8e8e;stroke:none"/><g transform="translate(0,.8)"><rect x="5" y="6" width="9" height="7.500" style="stroke-width:1"/><path d="M5.500 13L8 10L10 11.500L12 9.500L13.500 13z" style="fill:#9a9a9a;stroke:none"/></g></g></svg>
<div style="left:1157.5px;top:334px;width:32.5px;height:30px;background:#4b4b4b;"></div>
<svg style="left:1164.5px;top:340px;" width="19" height="18" viewBox="0 0 19 18"><g style="stroke:#c4c4c4"><rect x=".6" y="3.500" width="17.800" height="13.300" rx="1.800" style="stroke-width:1.100"/><path d="M.6 4V2.200A1.200 1.200 0 0 1 1.800 1H7L8.500 3.500z" style="fill:#8e8e8e;stroke:none"/><g transform="translate(0,.8)"><rect x="5" y="6.500" width="8" height="7" rx="1" style="stroke-width:1.100"/><path d="M8.500 11L14.500 4.500" style="stroke-width:1.400"/></g></g></svg>
<div style="left:1157.5px;top:370px;width:32.5px;height:30px;background:#4b4b4b;"></div>
<svg style="left:1164.5px;top:376px;" width="19" height="18" viewBox="0 0 19 18"><g style="stroke:#c4c4c4"><rect x=".6" y="3.500" width="17.800" height="13.300" rx="1.800" style="stroke-width:1.100"/><path d="M.6 4V2.200A1.200 1.200 0 0 1 1.800 1H7L8.500 3.500z" style="fill:#8e8e8e;stroke:none"/><g transform="translate(0,.8)"><circle cx="9.500" cy="9.500" r="4.300" style="stroke-width:1"/><path d="M6.500 8L9.500 9.500L12.500 8M9.500 9.500V13" style="stroke-width:.9"/><path d="M6.500 8L9.500 6.500L12.500 8" style="stroke-width:.9"/><path d="M7 11.500h5v2h-5z" style="fill:#9a9a9a;stroke:none"/></g></g></svg>
<div style="left:1157.5px;top:406px;width:32.5px;height:30px;background:#4b4b4b;"></div>
<svg style="left:1164.5px;top:412px;" width="19" height="18" viewBox="0 0 19 18"><g style="stroke:#c4c4c4"><rect x=".6" y="3.500" width="17.800" height="13.300" rx="1.800" style="stroke-width:1.100"/><path d="M.6 4V2.200A1.200 1.200 0 0 1 1.800 1H7L8.500 3.500z" style="fill:#8e8e8e;stroke:none"/><g transform="translate(0,.8)"><circle cx="9.500" cy="6.300" r="1.200" class="f"/><path d="M5.500 8H13.500M9.500 8V11M9.500 11L7.500 14M9.500 11L11.500 14" style="stroke-width:1.400"/></g></g></svg>
<div style="left:1195px;top:44px;width:241px;height:850px;background:#333;"></div>
<div style="left:1195px;top:46px;width:240px;height:190px;background:#2e2e2e;"></div>
<div style="left:1195px;top:44px;width:240px;height:22px;background:#3a3a3a;"></div>
<div style="left:1214px;top:47px;width:75px;height:15px;background:#4e4e4e;"></div>
<div style="left:1290px;top:48px;width:29px;height:13px;background:#464646;"></div>
<div style="left:1320px;top:48px;width:29px;height:13px;background:#464646;"></div>
<div style="left:1350px;top:48px;width:29px;height:13px;background:#464646;"></div>
<div style="left:1195px;top:61px;width:240px;height:5px;background:#4e4e4e;"></div>
<svg style="left:1201px;top:50px;" width="8" height="7" viewBox="0 0 8 7"><path d="M0 .5h7M0 3.500h7M0 6.500h7" style="stroke:#8a8a8a;stroke-width:1;stroke-linecap:butt"/></svg>
<div class="t" style="top:50.69px;font-size:11px;line-height:11px;color:#dedede;letter-spacing:-0.453px;left:1242px;">Navigator</div>
<svg style="left:1219px;top:50px;" width="18" height="14" viewBox="0 0 18 14"><rect x="3.500" y="1" width="12" height="9" rx="1.500" style="stroke-width:1.100"/><rect x="5.500" y="3" width="8" height="5" class="f" style="fill:#9a9a9a"/><path d="M1.500 4V11A1.500 1.500 0 0 0 3 12.500H13" style="stroke-width:1.100"/></svg>
<svg style="left:1290px;top:48px;overflow:hidden" width="29" height="13" viewBox="0 0 29 13"><g style="stroke:#7d7d7d;stroke-width:1.100"><rect x="8" y="2.500" width="13" height="14"/><path d="M9 13L13 8L16 11L18 9L20.500 13z" style="fill:#6a6a6a;stroke:none"/><path d="M18.500 2.500V13" /></g></svg>
<svg style="left:1320px;top:48px;overflow:hidden" width="29" height="13" viewBox="0 0 29 13"><g style="stroke:#7d7d7d;stroke-width:1.100"><circle cx="14.500" cy="11" r="7"/><path d="M7.500 11H21.500M11 11a3.500 3.500 0 0 1 7 0"/></g></svg>
<svg style="left:1350px;top:48px;overflow:hidden" width="29" height="13" viewBox="0 0 29 13"><g style="stroke:#7d7d7d;stroke-width:1.100"><circle cx="14.500" cy="11" r="7"/><path d="M14.500 9.500V14" style="stroke-width:1.500"/><circle cx="14.500" cy="6.800" r=".9" style="fill:#7d7d7d;stroke:none"/></g></svg>
<div style="left:1205px;top:67px;width:221px;height:124px;background:#fff;"></div>
<svg style="left:1205px;top:67px;overflow:hidden" width="221" height="124" viewBox="0 0 221 124"><g transform="scale(.1884) translate(-237,-125)" style="stroke:#48dd28;stroke-width:2.200;fill:none;opacity:.5"><path d="M582.8 305.9L585.1 302.7L587.4 299.6L589.8 296.3L592.5 293.0L594.7 290.1L597.2 287.1L599.7 283.9L602.3 280.6L604.9 277.3L607.5 273.9L609.9 270.6L612.2 267.3L614.3 264.2L616.2 261.3L619.1 257.0L621.5 253.2L623.6 249.7L625.7 246.4L625.7 246.4L622.9 249.2L620.2 252.2L617.2 255.5L613.8 259.4L611.5 262.0L609.0 264.8L606.4 267.8L603.8 271.0L601.1 274.4L598.6 277.8L596.1 281.3L593.8 284.7L591.7 288.0L589.9 291.3L587.8 295.1L586.0 298.7L584.4 302.3L582.8 305.9" style="opacity:0.6"/><path d="M580.5 304.6L583.1 301.6L585.8 298.6L588.6 295.5L591.4 292.3L593.8 289.5L596.3 286.5L598.8 283.2L601.2 279.8L603.6 276.2L605.8 272.6L607.9 269.0L609.8 265.4L611.5 262.0L612.9 258.7L612.9 258.7L610.2 260.9L607.2 263.4L604.2 266.1L601.2 269.1L598.3 272.2L595.5 275.4L592.8 278.8L590.4 282.2L588.3 285.7L586.6 289.0L584.7 293.1L583.1 297.0L581.7 300.8L580.5 304.6" style="opacity:0.75"/><path d="M586.4 299.0L589.2 295.9L592.1 292.7L594.7 290.1L597.3 287.2L600.0 284.1L602.6 280.9L605.2 277.5L607.6 274.0L609.9 270.5L612.0 267.1L613.8 263.8L615.4 260.6L617.9 256.1L617.9 256.1L614.2 259.7L611.5 262.0L608.8 264.6L605.9 267.4L603.1 270.5L600.4 273.8L597.8 277.2L595.4 280.7L593.2 284.2L591.3 287.8L589.7 291.2L588.0 295.2L586.4 299.0" style="opacity:0.9"/><path d="M578.6 307.9L580.5 304.6L582.5 301.3L584.6 297.9L586.9 294.5L589.4 290.9L591.5 287.9L593.9 284.7L596.4 281.5L599.0 278.1L601.6 274.8L604.3 271.4L606.8 268.2L609.3 265.0L611.6 262.1L613.7 259.3L616.8 255.2L619.5 251.6L621.9 248.4L624.2 245.3L626.6 242.4L629.4 239.2L632.2 236.0L635.1 232.8L638.1 229.6L641.2 226.6L644.7 223.7L648.6 221.0L651.9 219.0L651.9 219.0L648.5 220.8L644.4 223.3L640.7 226.0L637.4 228.9L634.2 231.9L631.2 235.0L628.2 238.2L625.3 241.2L622.7 244.1L620.3 247.1L617.8 250.3L615.0 253.9L611.9 257.9L609.8 260.7L607.5 263.6L605.1 266.8L602.6 270.1L600.0 273.5L597.5 277.0L595.0 280.4L592.6 283.8L590.4 287.1L588.4 290.2L586.1 294.0L584.0 297.5L582.1 301.0L580.3 304.4L578.6 307.9" style="opacity:0.45"/><path d="M546.0 372.8L547.3 368.9L548.7 364.9L550.1 361.0L551.5 357.1L552.9 353.2L554.4 349.4L556.2 345.1L558.0 340.9L559.9 336.7L561.8 332.6L563.7 328.5L563.7 328.5L561.5 332.4L559.3 336.4L557.1 340.5L555.1 344.7L553.3 348.9L551.8 352.7L550.4 356.7L549.2 360.7L548.0 364.7L546.9 368.8L546.0 372.8" style="opacity:0.9"/><path d="M543.7 380.6L545.0 376.8L546.4 372.9L547.7 369.0L549.2 365.1L550.6 361.2L552.1 357.3L553.7 353.4L555.2 349.7L557.1 345.5L559.0 341.4L561.0 337.3L563.0 333.2L565.1 329.2L567.1 325.2L569.0 321.3L570.9 317.4L572.7 313.7L574.3 310.0L576.0 306.5L577.6 303.0L579.3 299.4L579.3 299.4L577.2 302.7L575.1 306.0L573.0 309.3L571.0 312.8L568.9 316.3L566.7 320.0L564.5 323.8L562.3 327.7L560.1 331.7L558.0 335.8L556.0 340.0L554.1 344.2L552.3 348.5L550.9 352.4L549.6 356.4L548.4 360.4L547.4 364.5L546.3 368.6L545.4 372.6L544.5 376.7L543.7 380.6" style="opacity:0.45"/><path d="M556.1 363.0L558.1 359.4L560.1 355.9L562.1 352.5L564.4 348.8L566.7 345.0L569.0 341.3L571.4 337.5L573.6 333.7L575.8 329.9L577.9 326.1L579.8 322.2L581.6 318.4L583.1 314.7L584.5 311.1L585.8 307.5L587.2 303.9L588.5 300.3L590.0 296.5L591.8 292.4" style="opacity:0.75"/><path d="M547.5 368.9L548.9 365.0L550.3 361.1L551.8 357.2L553.3 353.3L554.8 349.5L556.7 345.4L558.6 341.2L560.6 337.1L562.7 333.0L564.7 329.0L566.8 325.1L568.8 321.2L570.7 317.3L572.5 313.6L574.3 310.0L576.0 306.5" style="opacity:0.9"/><path d="M550.9 352.4L552.5 348.6L554.4 344.4L556.5 340.2L558.6 336.1L560.7 332.0L562.8 328.0L564.9 324.1L567.0 320.2L569.0 316.4L570.8 312.7L572.6 309.1L574.3 305.6L576.1 302.1L576.1 302.1L574.1 305.5L572.1 308.9L570.2 312.3L568.1 315.9L566.1 319.7L564.0 323.5L561.8 327.5L559.8 331.5L557.7 335.7L555.8 339.9L553.9 344.2L552.3 348.5L550.9 352.4" style="opacity:0.6"/><path d="M633.7 231.4L637.5 229.0L641.4 226.8L645.4 224.7L649.7 222.8L653.2 221.5L656.9 220.0L660.7 218.3L664.6 216.6L668.5 214.8L672.5 213.0L676.4 211.3L680.3 209.6L684.4 208.2L689.1 207.1L689.1 207.1L684.3 206.2L679.7 205.8L675.1 205.9L670.5 206.3L665.9 207.2L661.5 208.5L657.2 210.1L653.1 212.1L649.4 214.3L646.1 216.8L642.2 220.1L638.9 223.8L636.1 227.6L633.7 231.4" style="opacity:0.45"/><path d="M547.5 381.6L548.9 377.9L550.2 374.0L551.6 370.2L553.1 366.3L554.5 362.4L556.0 358.6L557.5 354.9L559.1 351.2L560.9 347.2L562.8 343.2L564.7 339.1L566.7 335.1L568.7 331.1L570.7 327.2L572.6 323.2L574.5 319.3L576.3 315.6L577.9 311.9L579.5 308.4L581.1 304.9L582.8 301.4L582.8 301.4L580.6 304.6L578.5 307.9L576.5 311.2L574.4 314.6L572.3 318.1L570.1 321.8L567.8 325.6L565.6 329.5L563.5 333.5L561.4 337.5L559.4 341.6L557.5 345.7L555.9 349.9L554.5 353.8L553.3 357.7L552.1 361.7L551.0 365.7L550.1 369.7L549.2 373.7L548.3 377.7L547.5 381.6" style="opacity:0.45"/><path d="M582.7 291.8L585.3 288.2L587.6 285.1L590.0 281.9L592.6 278.7L595.3 275.3L598.0 272.0L600.7 268.7L603.3 265.5L605.9 262.4L608.2 259.5L610.4 256.8L613.5 252.8L616.2 249.2L618.7 245.9L621.2 242.8L623.7 239.8L626.5 236.6L629.4 233.4L632.4 230.1L635.4 226.9L638.8 223.7L642.5 220.6L646.6 217.7L650.1 215.7L653.8 213.6L657.8 211.6L661.9 209.8L666.2 208.1L666.2 208.1L661.8 209.4L657.5 211.0L653.4 212.7L649.5 214.5L645.8 216.4L641.4 219.1L637.4 222.1L633.8 225.2L630.5 228.4L627.5 231.6L624.4 234.7L621.5 237.8L618.9 241.0L616.4 244.1L613.9 247.4L611.2 251.0L608.1 255.0L606.1 257.8L603.9 260.8L601.5 264.0L599.0 267.4L596.5 270.8L594.0 274.4L591.6 277.9L589.2 281.4L587.0 284.8L585.0 288.0L582.7 291.8" style="opacity:0.45"/><path d="M573.4 318.8L575.6 315.2L577.6 311.8L579.6 308.4L581.6 305.2L583.6 301.9L585.7 298.6L588.0 295.2L590.4 291.6L592.5 288.6L594.8 285.4L597.2 282.0L599.6 278.6L602.1 275.1L604.6 271.7L607.0 268.3L609.4 265.1L611.5 262.0L613.5 259.1L616.4 254.9L616.4 254.9L613.1 258.9L610.9 261.5L608.4 264.3L605.8 267.4L603.2 270.6L600.5 273.9L597.8 277.2L595.2 280.6L592.7 283.9L590.4 287.1L588.3 290.2L586.0 293.9L583.9 297.5L582.0 301.0L580.3 304.4L578.6 307.9L576.9 311.4L575.2 315.0L573.4 318.8" style="opacity:0.6"/><path d="M560.8 337.2L563.5 333.5L566.3 329.9L569.0 326.3L571.7 322.7L574.2 319.2L576.6 315.7L578.7 312.4L580.7 309.0L582.6 305.7L584.4 302.4L586.3 298.9L588.1 295.2L590.1 291.4L591.7 288.0L593.5 284.4L595.3 280.7L597.3 276.8L599.2 272.9L599.2 272.9L596.0 275.9L592.9 278.8L589.8 281.8L587.0 284.7L584.3 287.6L581.5 291.1L579.0 294.5L576.7 297.9L574.7 301.3L572.9 304.8L571.2 308.4L569.7 312.1L568.1 315.9L566.6 320.0L565.1 324.1L563.6 328.4L562.2 332.8L560.8 337.2" style="opacity:0.75"/><path d="M627.8 222.4L630.4 221.8L633.8 220.9L637.9 219.7L642.4 218.4L647.1 216.9L651.8 215.4L656.2 214.0L660.2 212.7L664.6 211.3L669.2 210.0L673.8 208.6L678.2 207.3L682.1 206.1L685.4 205.0L685.4 205.0L681.9 205.5L677.9 206.1L673.4 206.9L668.7 207.8L664.0 208.9L659.4 210.1L655.4 211.3L650.9 212.8L646.3 214.5L641.7 216.3L637.3 218.1L633.4 219.8L630.2 221.2L627.8 222.4" style="opacity:0.45"/><path d="M628.0 222.9L630.5 222.1L633.9 221.1L637.9 219.8L642.4 218.3L647.0 216.7L651.7 215.1L656.1 213.6L660.1 212.3L664.5 210.9L669.1 209.5L673.7 208.2L673.7 208.2L669.0 209.3L664.4 210.4L659.9 211.5L655.8 212.7L651.3 214.1L646.7 215.7L642.1 217.4L637.7 219.0L633.7 220.6L630.4 221.9L628.0 222.9" style="opacity:0.75"/><path d="M611.7 245.5L614.0 244.3L617.1 242.6L620.6 240.5L624.6 238.1L628.7 235.6L632.7 233.0L636.6 230.5L640.2 228.3L644.1 225.9L648.3 223.5L652.5 221.1L656.5 218.9L656.5 218.9L652.3 220.6L647.8 222.5L643.4 224.6L639.2 226.7L635.6 228.8L631.6 231.2L627.5 233.8L623.5 236.5L619.8 239.2L616.5 241.7L613.7 243.9L611.7 245.5" style="opacity:0.75"/><path d="M614.7 245.3L617.7 243.6L621.3 241.5L625.2 239.1L629.4 236.6L633.5 234.1L637.4 231.7L640.9 229.6L644.9 227.3L649.0 225.0L653.3 222.6L657.3 220.4L660.9 218.5L660.9 218.5L657.1 220.0L652.8 221.8L648.4 223.8L644.1 225.9L640.0 228.0L636.4 230.1L632.5 232.6L628.5 235.3L624.5 238.0L620.8 240.7L617.5 243.2L614.7 245.3" style="opacity:0.9"/><path d="M623.3 232.0L626.3 230.8L629.6 229.3L633.1 227.7L636.9 225.9L640.9 224.0L645.0 222.0L649.2 219.9L653.5 217.7L657.8 215.4L662.0 213.1L666.1 210.9L670.1 208.6L674.0 206.4L677.7 204.3L681.1 202.4L685.0 200.2L689.0 198.1L693.1 195.9L693.1 195.9L688.7 197.4L684.4 199.0L680.3 200.6L676.6 202.1L672.7 203.7L668.6 205.6L664.4 207.6L660.2 209.7L655.9 211.9L651.7 214.2L647.5 216.6L643.4 219.0L639.5 221.4L635.7 223.7L632.2 226.0L628.9 228.1L625.9 230.2L623.3 232.0" style="opacity:0.15"/><path d="M643.5 219.3L647.8 217.2L652.2 215.2L656.6 213.2L660.9 211.1L665.2 209.1L669.4 207.1L673.4 205.2L677.2 203.4L680.8 201.8L684.8 199.9L689.0 198.0L693.2 196.1L697.5 194.1L701.8 192.1L706.0 190.2L710.2 188.2L714.2 186.4L718.1 184.5L721.8 182.8L721.8 182.8L717.9 184.0L713.8 185.3L709.6 186.7L705.2 188.2L700.8 189.8L696.3 191.4L691.9 193.1L687.6 194.9L683.4 196.8L679.4 198.6L675.8 200.4L672.0 202.4L668.1 204.5L664.0 206.8L659.9 209.2L655.8 211.7L651.6 214.2L647.6 216.7L643.5 219.3" style="opacity:0.25"/><path d="M725.1 207.9L729.6 208.8L734.5 209.9L739.6 211.2L744.9 212.6L750.3 214.1L753.5 215.1L756.9 216.0L760.3 217.0L763.8 218.0L767.4 219.0L771.1 220.1L774.9 221.2L778.8 222.5L782.9 223.9L787.0 225.5L791.3 227.3L795.7 229.2L800.3 231.4L803.4 233.0L806.8 234.8L810.4 236.8L814.1 238.9L818.0 241.1L822.0 243.4L826.1 245.8L830.2 248.2L834.4 250.7L838.5 253.1L842.5 255.6L846.4 258.1L850.3 260.4L853.9 262.8L857.4 265.0L860.7 267.1L863.7 269.1" style="opacity:0.6"/><path d="M721.0 208.0L724.9 208.9L729.4 210.0L734.2 211.2L739.3 212.5L744.5 214.0L749.8 215.6L753.1 216.6L756.4 217.7L759.9 218.7L763.3 219.7L766.9 220.8L770.6 221.9L774.3 223.1L778.2 224.4L782.2 225.9L786.3 227.5L790.5 229.2L794.8 231.2L799.3 233.3L802.4 234.9L805.8 236.7L809.4 238.6L813.1 240.6L817.0 242.8L821.0 245.1L825.1 247.4L829.3 249.8L833.4 252.2L837.6 254.6L841.6 257.0L845.6 259.4L849.5 261.7L853.2 263.9L856.7 266.1L860.0 268.1L863.0 270.0L865.8 271.7L865.8 271.7L863.2 269.7L860.3 267.6L857.2 265.3L853.8 263.0L850.2 260.5L846.5 257.9L842.7 255.4L838.7 252.8L834.7 250.1L830.6 247.6L826.6 245.0L822.5 242.5L818.6 240.1L814.7 237.9L811.0 235.7L807.4 233.7L804.0 231.9L800.9 230.2L796.3 228.0L791.8 226.1L787.5 224.3L783.3 222.8L779.2 221.4L775.3 220.2L771.4 219.1L767.7 218.1L764.0 217.2L760.5 216.4L757.0 215.6L753.6 214.8L750.3 214.0L744.9 212.6L739.6 211.4L734.4 210.3L729.5 209.4L725.0 208.6L721.0 208.0" style="opacity:0.6"/><path d="M717.8 206.5L721.1 207.2L725.1 208.1L729.6 209.1L734.4 210.2L739.5 211.5L744.8 212.9L750.1 214.5L753.4 215.5L756.8 216.5L760.2 217.5L763.7 218.5L767.3 219.5L771.0 220.6L774.8 221.8L778.7 223.1L782.7 224.5L786.8 226.1L791.1 227.9L795.4 229.8L800.0 232.0L803.1 233.6L806.5 235.4L810.1 237.4L813.8 239.4L817.7 241.6L821.7 243.9L825.8 246.3L829.9 248.7L834.0 251.2L838.1 253.7L842.2 256.1L846.1 258.5L850.0 260.9L853.7 263.2L857.1 265.4L860.4 267.5L863.4 269.4L866.2 271.2L868.6 272.8L870.8 274.4L876.3 282.6L876.3 282.6L871.0 274.3L868.8 272.5L866.5 270.7L863.8 268.8L860.9 266.7L857.7 264.5L854.3 262.2L850.7 259.8L846.9 257.3L843.0 254.8L839.0 252.2L835.0 249.6L830.9 247.1L826.8 244.6L822.8 242.1L818.8 239.8L814.9 237.5L811.2 235.4L807.6 233.4L804.2 231.6L801.0 230.0L796.4 227.8L791.9 225.8L787.6 224.0L783.4 222.5L779.3 221.1L775.4 219.9L771.5 218.8L767.8 217.7L764.1 216.8L760.6 215.9L757.1 215.1L753.8 214.2L750.5 213.4L745.1 211.9L739.7 210.7L734.6 209.6L729.7 208.6L725.2 207.7L721.2 207.0L717.8 206.5" style="opacity:0.45"/><path d="M773.6 197.5L778.0 198.7L782.3 199.8L786.4 201.0L790.3 202.1L794.5 203.4L798.8 204.8L803.2 206.3L807.5 207.8L811.8 209.3L816.1 210.9L820.4 212.5L824.6 214.0L828.7 215.6L832.7 217.2L836.5 218.7L840.2 220.2L843.8 221.6L847.2 222.9L850.3 224.2L855.8 226.7L860.9 229.2L865.6 231.6L869.8 234.0L873.5 236.1L876.7 238.1L876.7 238.1L873.6 236.0L869.9 233.7L865.8 231.3L861.2 228.7L856.1 226.1L850.6 223.6L847.5 222.2L844.1 220.8L840.6 219.3L836.9 217.7L833.0 216.2L829.0 214.6L824.9 213.1L820.7 211.5L816.5 209.9L812.1 208.4L807.8 207.0L803.4 205.5L799.0 204.1L794.7 202.8L790.4 201.6L786.5 200.6L782.4 199.5L778.0 198.5L773.6 197.5" style="opacity:0.9"/><path d="M723.2 187.1L725.4 187.8L728.0 188.5L731.0 189.3L734.3 190.2L738.0 191.1L742.0 192.0L746.1 193.0L750.4 194.0L754.9 195.0L759.5 196.1L764.0 197.1L768.6 198.2L773.2 199.2L777.6 200.3L781.9 201.3L786.0 202.3L789.9 203.3L794.2 204.5L798.5 205.7L802.9 207.0L807.3 208.3L811.7 209.7L816.1 211.1L820.4 212.4L824.6 213.8" style="opacity:0.45"/><path d="M763.7 198.5L768.3 199.7L772.8 200.9L777.1 202.2L781.4 203.4L785.4 204.7L789.2 205.9L793.3 207.3L797.6 208.7L801.9 210.2L806.1 211.8L810.4 213.3L814.7 214.9L818.9 216.5L823.1 218.0L827.1 219.6L831.1 221.1L835.0 222.5L838.7 223.9L842.3 225.3L845.6 226.6L848.8 227.7L854.3 230.1L859.3 232.4L863.9 234.7L868.1 236.9L871.8 238.9L875.1 240.7L875.1 240.7L872.0 238.6L868.5 236.2L864.5 233.7L860.0 231.0L855.0 228.4L849.7 225.8L846.6 224.3L843.3 222.8L839.8 221.2L836.1 219.7L832.3 218.1L828.3 216.5L824.2 214.9L820.1 213.3L815.8 211.8L811.5 210.3L807.1 208.9L802.8 207.5L798.4 206.2L794.1 204.9L789.8 203.8L785.9 202.9L781.7 202.0L777.4 201.0L772.9 200.2L768.4 199.3L763.7 198.5" style="opacity:0.6"/><path d="M773.4 219.2L777.1 220.7L781.0 222.4L785.2 224.1L789.5 225.9L793.9 227.7L798.4 229.6L802.8 231.5L807.2 233.4L811.5 235.2L815.7 237.1L819.6 238.9L823.2 240.7L827.1 242.6L831.1 244.5L835.2 246.6L839.4 248.7L843.5 250.9L847.7 253.0L851.8 255.1L855.7 257.2L859.6 259.1L863.2 261.0L866.6 262.7L869.8 264.3L872.6 265.7L875.1 266.8L875.1 266.8L872.7 265.4L870.0 263.8L867.0 262.0L863.7 260.1L860.2 258.0L856.5 255.8L852.6 253.6L848.6 251.3L844.5 249.1L840.3 246.8L836.2 244.6L832.1 242.5L828.1 240.5L824.2 238.6L820.5 236.9L816.5 235.1L812.3 233.4L807.9 231.6L803.5 229.9L798.9 228.2L794.4 226.5L789.9 224.9L785.5 223.3L781.2 221.9L777.2 220.5L773.4 219.2" style="opacity:0.45"/><path d="M785.3 223.7L789.5 225.7L793.9 227.7L798.3 229.7L802.7 231.7L807.1 233.8L811.3 235.7L815.4 237.7L819.3 239.5L822.9 241.3L826.8 243.2L830.8 245.1L834.9 247.1L839.1 249.1L843.4 251.2L847.6 253.2L851.7 255.1L855.8 257.0L859.7 258.8L863.5 260.5L863.5 260.5L860.0 258.3L856.4 256.0L852.6 253.6L848.6 251.2L844.6 248.8L840.5 246.5L836.5 244.2L832.4 242.0L828.4 239.9L824.5 238.0L820.8 236.3L816.7 234.6L812.5 232.9L808.1 231.3L803.5 229.7L798.9 228.1L794.3 226.6L789.8 225.1L785.3 223.7" style="opacity:0.45"/><path d="M780.7 223.1L784.8 225.0L789.0 227.0L793.4 229.0L797.8 231.1L802.2 233.1L806.5 235.1L810.7 237.1L814.8 239.0L818.7 240.8L822.4 242.5L826.2 244.3L830.3 246.2L834.4 248.1L838.6 250.1L842.9 252.0L847.2 254.0L851.3 255.9L855.4 257.7L859.4 259.5L859.4 259.5L855.8 257.1L852.0 254.7L848.1 252.2L844.1 249.7L840.1 247.3L836.0 245.0L832.0 242.7L828.1 240.6L824.2 238.7L820.5 236.9L816.5 235.2L812.3 233.5L807.9 231.8L803.3 230.2L798.7 228.6L794.1 227.1L789.5 225.7L785.1 224.4L780.7 223.1" style="opacity:0.6"/><path d="M830.0 197.7L832.7 198.2L836.4 198.6L840.7 199.1L845.5 199.6L850.3 200.2L854.9 200.8L858.9 201.5L863.5 202.3L868.2 203.1L872.7 203.9L877.0 204.6L880.5 205.1" style="opacity:0.9"/><path d="M830.0 198.0L832.7 198.3L836.4 198.6L840.7 199.0L845.5 199.4L850.3 199.9L854.9 200.5L859.0 201.2L863.5 202.0L868.2 203.0L872.7 203.9L876.9 204.7L880.4 205.4L880.4 205.4L877.0 204.5L872.9 203.4L868.3 202.3L863.7 201.2L859.2 200.2L855.1 199.5L850.4 198.9L845.6 198.5L840.8 198.3L836.4 198.1L832.7 198.0L830.0 198.0" style="opacity:0.9"/><path d="M866.2 241.9L867.3 244.2L868.7 247.1L870.4 250.5L872.3 254.6L874.5 259.2L877.0 264.4L879.7 270.1L881.1 273.2L882.7 276.8L884.5 280.6L886.4 284.8L888.4 289.1L890.4 293.6L892.5 298.1L894.6 302.6L896.7 307.0L898.7 311.2L900.6 315.1L902.3 318.8L903.9 322.0L905.2 324.7" style="opacity:0.9"/><path d="M895.3 329.5L896.3 333.5L897.6 338.0L899.1 342.6L900.7 347.2L902.3 351.0L904.2 355.0L906.3 359.0L908.6 363.0L911.1 366.9L913.7 370.7L916.3 374.2L919.1 377.7L922.1 381.4L925.2 385.0L925.2 385.0L923.3 380.6L921.4 376.3L919.6 372.2L917.9 368.2L916.0 364.1L913.9 360.0L911.7 356.0L909.5 352.1L907.3 348.4L905.1 345.0L902.6 341.0L900.0 336.9L897.5 333.0L895.3 329.5" style="opacity:0.45"/><path d="M902.6 335.7L904.4 340.1L906.3 344.3L908.0 348.0L909.9 351.9L912.0 355.9L914.2 359.9L916.5 363.8L918.8 367.7L921.1 371.4L923.5 375.0L926.1 378.9L928.8 382.7L928.8 382.7L926.5 378.7L924.3 374.6L922.2 370.7L920.1 366.9L918.0 363.0L915.7 359.0L913.5 355.0L911.3 351.2L909.1 347.4L907.1 343.9L904.8 339.9L902.6 335.7" style="opacity:0.45"/><path d="M897.1 338.3L898.7 342.8L900.5 347.3L902.1 351.1L904.0 355.1L906.0 359.2L908.2 363.2L910.5 367.2L912.9 371.1L915.4 374.7L918.0 378.4L920.8 382.2L923.7 386.0L923.7 386.0L921.5 381.8L919.4 377.6L917.4 373.5L915.4 369.6L913.3 365.7L911.1 361.6L908.8 357.6L906.5 353.8L904.2 350.0L902.0 346.5L899.5 342.4L897.1 338.3" style="opacity:0.75"/><path d="M904.8 345.1L905.5 349.3L906.6 353.7L908.0 358.1L909.8 362.3L912.1 366.4L914.7 370.0L917.7 373.4L921.0 376.6L924.6 379.9L924.6 379.9L923.3 375.2L922.0 370.8L920.6 366.7L918.7 362.5L916.5 358.6L913.9 354.8L911.0 351.3L907.9 348.1L904.8 345.1" style="opacity:0.9"/><path d="M896.9 325.0L897.9 328.3L899.2 332.3L900.7 336.6L902.5 341.0L904.4 345.3L906.3 348.9L908.4 352.7L910.7 356.6L913.1 360.5L915.7 364.3L918.3 368.0L920.8 371.5L920.8 371.5L919.0 367.6L917.1 363.5L915.1 359.3L913.1 355.2L911.1 351.2L909.2 347.4L907.3 343.9L905.1 339.8L902.8 335.6L900.7 331.6L898.7 328.0L896.9 325.0" style="opacity:0.6"/><path d="M895.3 325.7L896.3 329.0L897.6 333.0L899.1 337.3L900.9 341.8L902.8 346.1L904.5 349.9L906.5 353.7L908.7 357.7L911.0 361.7L913.4 365.6L915.9 369.4L918.3 373.0L920.9 376.6L923.7 380.4L926.5 384.2L926.5 384.2L924.4 380.0L922.2 375.8L920.3 371.8L918.3 368.0L916.3 363.9L914.2 359.9L912.0 355.9L909.9 351.9L907.8 348.2L905.7 344.6L903.5 340.5L901.2 336.4L899.0 332.3L897.0 328.7L895.3 325.7" style="opacity:0.9"/><path d="M913.0 350.2L914.9 354.3L916.9 358.3L919.0 362.4L921.2 366.3L923.3 370.1L925.5 373.8L928.0 377.7L930.6 381.6L933.1 385.3L935.5 388.6L937.5 391.4" style="opacity:0.6"/><path d="M899.1 342.7L899.9 347.6L900.7 351.9L901.9 356.2L903.7 360.5L906.0 364.5L908.7 368.3L911.8 371.8L915.1 374.9L918.6 378.0L918.6 378.0L917.6 373.4L916.5 369.0L915.1 364.6L913.2 360.4L911.0 356.4L908.4 352.7L905.5 349.3L902.5 346.3L899.1 342.7" style="opacity:0.9"/><path d="M924.5 395.9L924.6 400.5L924.6 404.9L924.6 409.2L924.7 413.5L924.9 417.7L925.2 421.8L925.5 425.9L925.9 430.0L926.2 434.3L926.4 439.1L926.6 444.0L926.7 448.9L926.7 448.9L928.0 444.2L929.1 439.3L930.1 434.5L930.6 430.0L930.8 425.7L930.7 421.4L930.2 417.2L929.5 412.9L928.5 408.7L927.3 404.5L926.0 400.3L924.5 395.9" style="opacity:0.45"/><path d="M926.6 400.2L926.7 404.6L926.9 408.9L927.1 413.2L927.4 417.4L927.8 421.6L928.2 425.8L928.6 430.0L928.9 434.4L929.1 439.3L929.1 439.3L930.0 434.5L930.5 430.0L930.8 425.7L930.7 421.4L930.4 417.1L929.7 412.9L928.8 408.6L927.7 404.4L926.6 400.2" style="opacity:0.45"/><path d="M926.7 380.2L926.9 385.2L927.2 390.4L927.4 395.4L927.7 400.1L928.0 404.4L928.5 408.7L929.1 412.9L929.9 417.2L930.8 421.4L931.8 425.7L932.6 430.0L933.3 434.6L933.3 434.6L934.3 430.0L935.0 425.6L935.4 421.1L935.6 416.6L935.4 412.2L934.9 407.8L934.2 403.5L933.2 399.2L932.0 394.6L930.4 389.8L928.6 384.9L926.7 380.2" style="opacity:0.6"/><path d="M931.0 399.5L931.5 403.9L931.9 408.2L932.3 412.6L932.6 416.9L932.9 421.3L933.1 425.6L933.2 430.0L933.1 434.7L932.8 439.7L932.4 444.7L932.0 449.6L931.7 454.0L931.4 457.7L931.4 457.7L932.1 454.0L932.9 449.7L933.6 444.8L934.3 439.8L934.8 434.8L935.0 430.0L934.9 425.6L934.6 421.1L934.1 416.8L933.5 412.4L932.7 408.1L931.9 403.8L931.0 399.5" style="opacity:0.75"/><path d="M927.7 385.1L928.2 390.2L928.7 395.2L929.0 399.8L929.3 404.2L929.7 408.5L930.1 412.8L930.5 417.1L930.9 421.4L931.3 425.7L931.7 430.0L931.9 434.6L931.9 439.6L931.9 444.6L931.8 449.5L931.8 449.5L932.9 444.8L933.8 439.7L934.6 434.8L935.1 430.0L935.3 425.5L935.2 421.1L934.9 416.7L934.3 412.3L933.6 408.0L932.7 403.7L931.7 399.4L930.6 394.9L929.2 390.0L927.7 385.1" style="opacity:0.45"/><path d="M957.2 409.9L958.6 414.8L959.7 419.6L960.4 423.7L961.1 428.0L961.7 432.5L962.3 437.0L962.8 441.5L963.3 445.8L963.8 450.0L964.0 454.8L964.0 459.8" style="opacity:0.3"/><path d="M957.7 428.6L958.1 433.0L958.5 437.5L958.8 441.9L959.1 446.1L959.3 450.1L959.5 454.7L959.4 459.5L959.2 464.2" style="opacity:0.5"/><path d="M956.1 415.5L956.3 420.4L956.3 424.5L956.6 428.8L957.3 433.1L958.4 437.5L959.7 441.8L961.2 446.0L961.2 446.0L961.9 441.6L962.3 437.0L962.2 432.4L961.5 428.0L960.2 423.7L958.5 419.9L956.1 415.5" style="opacity:0.5"/><path d="M904.0 520.3L900.8 524.3L897.6 527.8L894.3 530.8L891.0 533.5L887.6 535.9L884.1 538.4L880.5 540.9L876.6 543.5L873.4 545.8L870.1 548.3L866.8 550.8L863.3 553.4L859.8 556.0L856.2 558.5L852.6 561.0L848.9 563.3L845.2 565.4L841.4 567.3L837.5 569.0L833.3 570.3" style="opacity:0.45"/><path d="M854.4 555.3L850.3 556.7L846.3 557.9L842.5 558.8L838.8 559.5L835.3 560.0L831.5 560.5L827.6 560.9L823.5 561.3L819.3 561.7L815.2 562.2L811.0 562.8L807.0 563.5L803.2 564.4L799.8 565.3L794.6 566.4L794.6 566.4L799.9 567.0L803.4 567.6L807.2 568.3L811.2 568.8L815.4 569.2L819.7 569.4L824.2 569.2L828.6 568.8L832.8 568.0L836.9 566.8L840.7 565.2L844.3 563.2L847.7 560.8L851.1 558.2L854.4 555.3" style="opacity:0.75"/><path d="M886.6 541.5L882.8 543.9L878.8 546.4L875.4 548.5L871.9 550.7L868.3 553.0L864.6 555.3L860.9 557.7L857.1 560.0L853.3 562.2L849.5 564.4L845.6 566.3L841.7 568.1L837.6 569.7L833.4 571.0L829.0 572.0L824.5 572.9L824.5 572.9L829.1 572.9L833.7 572.7L838.3 572.2L842.7 571.2L847.1 569.9L851.3 568.2L855.5 566.2L859.5 563.9L863.3 561.5L867.0 558.8L870.6 556.1L873.9 553.3L877.0 550.5L879.9 547.8L883.3 544.6L886.6 541.5" style="opacity:0.75"/><path d="M890.7 533.1L887.5 535.8L884.1 538.4L880.6 541.0L876.9 543.8L873.7 546.2L870.4 548.6L866.9 551.0L863.4 553.5L859.7 555.9L856.0 558.2L852.3 560.4L848.5 562.4L844.7 564.1L840.9 565.6L836.9 566.8L832.8 567.7L828.5 568.4L824.1 568.9L819.7 569.3L815.4 569.6L811.2 569.8" style="opacity:0.45"/><path d="M927.5 424.6L926.7 428.1L925.8 432.2L924.9 436.8L924.0 441.4L923.1 445.8L922.3 449.6L921.4 453.9L920.7 457.5L919.9 460.9L918.8 465.2L917.0 471.0L916.1 474.2L915.2 477.8L914.2 481.7L913.2 486.0L912.2 490.4L911.1 494.9L909.9 499.4L908.8 503.9" style="opacity:0.9"/><path d="M903.9 511.4L901.5 514.6L899.2 517.3L896.0 520.9L893.0 524.0L890.0 526.7L887.1 529.2L884.1 531.7L881.0 534.4L877.7 537.2L874.2 540.4L871.5 543.2L868.6 546.2L865.7 549.3L862.6 552.4L862.6 552.4L866.6 550.6L870.4 548.7L874.1 546.7L877.6 544.8L881.5 542.3L885.2 539.8L888.6 537.1L891.7 534.3L894.6 531.1L897.2 527.5L899.6 523.4L901.8 518.9L902.9 515.3L903.9 511.4" style="opacity:0.9"/><path d="M897.6 522.0L894.7 525.4L891.7 528.3L888.6 530.9L885.4 533.3L882.0 535.7L878.5 538.2L874.6 540.9L871.4 543.2L868.1 545.6L864.7 548.0L861.3 550.5L857.8 552.9L854.2 555.2L850.7 557.4L847.1 559.5L843.5 561.3L840.0 562.9L836.3 564.3L832.4 565.4L828.2 566.3L823.9 567.0L823.9 567.0L828.3 566.9L832.6 566.6L836.7 566.0L840.7 565.2L844.6 563.9L848.5 562.4L852.4 560.6L856.2 558.5L860.0 556.3L863.6 553.9L867.2 551.4L870.6 548.9L873.8 546.3L876.8 543.8L880.4 540.8L883.8 538.0L886.9 535.1L889.8 532.2L892.6 529.1L895.1 525.8L897.6 522.0" style="opacity:0.6"/><path d="M880.4 540.8L876.6 543.4L873.3 545.6L869.9 547.9L866.4 550.3L862.7 552.6L859.0 554.8L855.3 557.0L851.6 559.1L847.8 560.9L844.0 562.6L840.3 564.0L836.5 565.1L832.5 566.1L828.3 566.8L824.0 567.3L819.7 567.8L815.4 568.2L811.2 568.5L807.2 568.8L803.4 569.1L800.0 569.5L800.0 569.5L803.4 569.6L807.2 569.7L811.2 569.9L815.4 570.0L819.8 570.0L824.2 569.9L828.6 569.6L833.0 569.0L837.3 568.2L841.4 567.1L845.3 565.6L849.2 563.8L853.0 561.7L856.8 559.4L860.4 557.0L864.0 554.4L867.4 551.7L870.7 549.1L873.9 546.4L876.9 543.8L880.4 540.8" style="opacity:0.6"/><path d="M961.0 441.1L960.4 446.2L959.9 451.2L959.4 455.9L958.9 459.9L958.4 465.2L958.0 469.8L957.6 473.9L956.9 478.1L955.8 482.7L954.7 486.3L953.4 490.3L951.9 494.4L950.3 498.5L948.6 502.6L948.6 502.6L950.8 498.7L952.8 494.8L954.7 490.8L956.4 486.9L957.7 483.2L959.0 478.5L959.8 474.2L960.2 469.9L960.4 465.4L960.6 460.0L960.8 456.0L960.9 451.3L960.9 446.2L961.0 441.1" style="opacity:0.5"/><path d="M953.8 490.4L952.0 494.4L950.1 498.4L948.1 502.3L946.1 506.1L944.1 509.5L942.0 513.3L940.0 516.9L937.9 520.2L935.7 523.4L933.2 526.4L930.3 529.2L927.5 531.4L924.3 533.4L920.7 535.3L917.0 537.2L913.3 539.1L909.5 541.2" style="opacity:0.7"/><path d="M954.7 482.2L953.4 485.9L951.8 489.6L950.1 493.6L948.2 497.5L946.2 501.4L944.2 505.1L942.3 508.5L940.2 512.3L938.1 515.8L936.1 519.1L934.0 522.1L931.6 524.9L928.9 527.6L926.3 529.6L923.2 531.5L919.8 533.3L916.1 535.2L912.2 537.1L908.3 539.3L904.5 541.8L901.2 544.2L897.9 546.8L897.9 546.8L901.4 544.4L904.8 542.1L908.7 539.8L912.6 537.9L916.5 536.1L920.3 534.4L923.8 532.7L927.0 530.8L929.9 528.7L932.8 525.9L935.2 523.0L937.4 519.9L939.4 516.5L941.4 513.0L943.4 509.1L945.2 505.6L947.1 501.8L948.9 497.8L950.6 493.8L952.2 489.8L953.6 485.9L954.7 482.2" style="opacity:0.3"/><path d="M947.3 506.7L944.7 509.8L942.0 513.3L939.5 516.6L937.2 519.7L934.8 522.7L932.4 525.6L929.7 528.5L927.1 530.9L924.2 533.4L921.0 535.8L917.5 538.2" style="opacity:0.5"/><path d="M723.9 584.4L719.5 582.5L715.0 581.2L710.9 580.5L707.0 580.3L702.5 580.8L696.6 582.0L693.3 583.1L689.6 584.6L685.5 586.3L681.2 588.3" style="opacity:0.9"/><path d="M769.1 572.7L764.2 574.0L759.0 575.5L754.2 576.9L750.0 578.1L745.1 579.8L741.0 581.6L737.1 583.1L733.0 584.0L728.6 584.0L724.0 583.4L719.5 582.7L715.0 582.4L711.0 582.6L711.0 582.6L715.0 582.7L719.4 583.2L723.9 584.2L728.5 585.0L733.1 585.1L737.4 584.2L741.4 582.7L745.6 580.9L750.3 579.0L754.4 577.6L759.2 576.0L764.3 574.3L769.1 572.7" style="opacity:0.45"/><path d="M760.0 578.4L755.0 579.4L750.8 580.3L745.9 581.8L741.8 583.5L737.7 585.1L733.2 586.4L728.3 586.8L723.5 586.6L723.5 586.6L728.2 587.9L733.4 588.4L738.4 587.6L742.8 586.1L746.9 584.2L751.5 582.2L755.3 580.5L760.0 578.4" style="opacity:0.6"/><path d="M768.5 570.6L763.5 571.9L758.4 573.3L753.5 574.6L749.2 575.8L744.2 577.6L740.1 579.3L736.4 580.7L732.8 581.5L728.8 581.6L724.5 581.0L719.8 580.3L715.1 580.0L710.9 580.3L707.1 580.8L707.1 580.8L710.9 580.7L715.0 580.8L719.7 581.4L724.2 582.3L728.6 583.2L732.9 583.3L736.9 582.4L740.7 580.9L744.8 579.1L749.7 577.1L753.8 575.7L758.6 574.0L763.6 572.3L768.5 570.6" style="opacity:0.75"/><path d="M714.9 579.3L710.8 579.3L706.9 579.5L702.4 580.0L696.5 581.0L693.0 581.5L689.1 582.3L684.8 583.1L680.3 584.0L675.7 585.1L671.2 586.1L666.8 587.2L662.8 588.2L659.3 589.2L653.9 590.8L649.4 592.3L649.4 592.3L654.0 591.0L659.4 589.7L663.0 588.9L667.0 588.0L671.4 587.1L675.9 586.1L680.5 585.2L685.1 584.2L689.3 583.3L693.2 582.5L696.6 581.8L702.5 580.7L706.9 580.0L710.8 579.5L714.9 579.3" style="opacity:0.6"/><path d="M693.6 584.4L689.6 584.9L685.3 585.5L680.8 586.2L676.1 587.0L671.6 587.9L667.2 588.8L663.2 589.7L659.7 590.7L654.3 592.3L649.8 593.9L645.9 595.5L642.4 597.1L638.9 598.8L638.9 598.8L642.6 597.7L646.3 596.5L650.3 595.4L654.9 594.2L660.2 592.8L663.7 592.0L667.7 591.1L672.0 590.0L676.5 588.9L681.1 587.7L685.5 586.6L689.8 585.4L693.6 584.4" style="opacity:0.6"/><path d="M693.2 582.5L689.1 582.2L684.6 582.2L680.0 582.4L675.3 583.0L670.6 583.8L666.3 585.0L662.4 586.4L658.9 588.0L653.8 590.4L649.5 592.8L649.5 592.8L654.4 592.4L659.9 591.8L663.6 591.6L667.7 591.2L672.1 590.3L676.6 589.2L681.1 587.7L685.4 586.1L689.5 584.3L693.2 582.5" style="opacity:0.75"/><path d="M763.5 571.8L758.3 573.1L753.4 574.4L749.2 575.6L744.1 577.3L739.9 579.0L736.3 580.3L732.7 581.0L728.8 580.9L724.6 580.2L719.9 579.4L715.1 579.1L710.8 579.2L706.9 579.7L702.4 580.5L696.6 581.7L693.2 582.5L689.4 583.5L689.4 583.5L693.3 582.9L696.7 582.5L702.6 581.6L707.1 581.2L710.9 581.0L715.0 581.0L719.6 581.5L724.2 582.4L728.6 583.1L732.9 583.1L736.8 582.2L740.6 580.6L744.7 578.7L749.6 576.7L753.7 575.2L758.4 573.5L763.5 571.8" style="opacity:0.6"/><path d="M769.2 572.9L764.1 573.8L758.8 574.8L753.9 575.9L749.7 577.0L744.7 578.8L740.7 580.9L737.0 582.7L733.0 584.1L728.6 584.8" style="opacity:0.6"/><path d="M706.9 580.3L702.5 580.7L696.5 581.5L693.1 581.9L689.2 582.6L684.9 583.4L680.4 584.4L675.8 585.5L671.3 586.7L667.0 587.9L663.0 589.1L663.0 589.1L667.1 588.4L671.5 587.6L676.1 586.8L680.7 585.9L685.2 585.0L689.5 584.1L693.4 583.2L696.7 582.4L702.5 581.2L706.9 580.3" style="opacity:0.75"/><path d="M558.4 564.1L560.7 567.7L563.0 571.4L565.4 575.2L567.9 579.0L570.4 582.6L573.0 586.1L575.7 589.4L578.9 593.0L582.1 596.5L585.5 599.9L588.9 602.8L592.6 605.2L596.4 606.9L600.1 607.7L604.4 607.9L609.0 607.7L613.5 607.2L617.7 606.6L621.2 606.0" style="opacity:0.6"/><path d="M543.2 542.9L545.1 546.9L547.1 550.7L549.3 554.3L551.6 557.9L554.1 561.6L556.7 565.4L559.1 568.9L561.6 572.5L564.3 576.0L567.1 579.6L570.0 582.9L573.1 586.1L576.2 588.9L579.8 592.1L583.5 595.2L587.1 598.1L590.9 600.6L590.9 600.6L588.0 597.2L585.2 593.6L582.3 589.8L579.4 585.9L577.0 582.7L574.5 579.3L572.0 575.7L569.4 572.2L566.8 568.6L564.1 565.1L561.3 561.9L558.1 558.4L555.0 555.2L551.9 552.2L549.0 549.3L546.1 546.3L543.2 542.9" style="opacity:0.9"/><path d="M535.7 531.8L536.7 536.6L538.0 541.3L539.4 545.4L541.6 549.4L544.1 552.9L547.1 556.1L550.4 558.9L554.0 561.7L557.9 564.5" style="opacity:0.45"/><path d="M528.4 525.3L530.0 529.3L531.9 533.6L534.0 538.1L536.1 542.3L538.2 546.1L540.6 550.0L543.2 553.6L545.9 557.0L548.7 560.3L551.5 563.7L554.5 567.2L557.1 570.4L559.9 573.8L562.7 577.3L562.7 577.3L560.1 573.6L557.7 570.0L555.2 566.6L552.5 562.9L549.8 559.4L547.1 556.1L544.5 552.7L541.9 549.1L539.4 545.4L537.1 541.7L534.8 537.6L532.5 533.3L530.4 529.1L528.4 525.3" style="opacity:0.9"/><path d="M548.1 555.3L550.3 559.0L552.6 562.8L555.0 566.7L557.2 570.3L559.6 574.0L562.2 577.6L564.9 581.3L567.8 584.7L570.9 587.9L574.1 590.8L577.8 594.0L581.5 597.1L585.3 600.0L585.3 600.0L582.5 596.2L579.6 592.3L576.7 588.4L574.2 585.1L571.7 581.6L569.1 578.0L566.4 574.5L563.6 571.0L560.7 567.7L557.8 564.6L554.5 561.3L551.3 558.2L548.1 555.3" style="opacity:0.45"/><path d="M530.0 524.5L531.3 528.7L532.9 533.2L534.6 537.7L536.4 542.1L538.3 546.1L540.5 550.1L542.9 553.8L545.5 557.3L548.2 560.7L551.0 564.1L553.9 567.6L556.6 570.8L559.5 574.0L562.5 577.4L565.6 580.7L568.8 583.9L572.0 587.0L575.3 589.8L575.3 589.8L572.8 586.3L570.5 582.6L568.1 578.8L565.7 574.9L563.4 571.1L561.0 567.5L558.6 563.9L555.8 560.2L553.1 556.7L550.3 553.5L547.7 550.3L545.0 547.0L542.4 543.5L540.0 540.2L537.4 536.3L534.8 532.2L532.3 528.2L530.0 524.5" style="opacity:0.6"/><path d="M526.0 522.4L527.2 525.8L528.8 529.9L530.6 534.3L532.5 538.8L534.6 543.1L536.7 547.1L539.2 551.0L541.8 554.7L544.6 558.1L547.4 561.3L550.3 564.6L553.4 568.0L556.1 571.1L559.0 574.4L562.0 577.8L562.0 577.8L559.6 574.0L557.2 570.3L554.9 566.8L552.3 563.1L549.6 559.5L547.0 556.1L544.5 552.7L541.9 549.1L539.4 545.4L537.1 541.8L534.7 537.7L532.3 533.4L530.0 529.3L527.9 525.5L526.0 522.4" style="opacity:0.9"/><path d="M530.9 528.9L532.6 533.3L534.4 537.8L536.3 542.2L538.3 546.1L540.6 550.0L543.1 553.7L545.7 557.1L548.5 560.5L551.4 563.8L554.4 567.2L557.1 570.4L560.0 573.7L563.0 577.0L566.0 580.4" style="opacity:0.75"/><path d="M545.9 557.0L548.2 560.7L550.5 564.5L553.0 568.4L555.1 571.9L557.3 575.7L559.8 579.5L562.3 583.3L565.0 587.0L567.9 590.6L570.8 593.8L574.2 597.3L577.7 600.8L581.4 604.2L585.5 607.2L589.9 609.8L594.6 611.6L599.3 612.3L604.1 612.3L608.9 611.9L608.9 611.9L604.2 611.2L599.7 610.1L595.8 608.6L592.0 606.2L588.6 603.2L585.4 600.0L582.3 596.4L579.1 592.8L575.9 589.2L573.1 586.1L570.2 582.8L567.3 579.4L564.3 576.0L561.4 572.6L558.4 569.4L555.5 566.4L552.3 563.1L549.0 560.0L545.9 557.0" style="opacity:0.75"/><path d="M546.0 557.0L548.2 560.7L550.6 564.4L553.0 568.3L555.2 571.9L557.4 575.6L559.9 579.4L562.5 583.2L565.2 586.9L568.1 590.4L571.1 593.6L574.5 597.1L578.0 600.5L581.8 603.8L585.8 606.8L590.1 609.3L594.8 611.0L599.4 611.7L604.1 611.7L604.1 611.7L599.6 610.6L595.6 609.0L591.8 606.5L588.4 603.5L585.2 600.2L582.1 596.6L579.0 592.9L575.8 589.3L573.0 586.1L570.2 582.8L567.3 579.4L564.4 576.0L561.4 572.6L558.5 569.4L555.6 566.3L552.3 563.0L549.1 560.0L546.0 557.0" style="opacity:0.6"/><path d="M529.3 519.0L532.0 519.2L535.1 519.3L538.5 519.5L542.3 519.7L546.4 519.8L550.6 520.0L555.1 520.2L559.7 520.4L564.4 520.6L569.1 520.8L573.8 521.1L578.5 521.3L583.2 521.5L587.7 521.7L592.0 521.9L596.1 522.2L600.0 522.4L604.5 522.6L609.1 522.9L613.8 523.1L618.4 523.4L623.1 523.7L627.7 524.0L632.2 524.2L636.6 524.5L640.8 524.8L644.9 525.1L648.7 525.4L652.2 525.6L655.5 525.9L658.4 526.2L661.0 526.4L671.6 526.5L670.6 529.9L669.4 531.8L667.7 534.2L665.6 537.0L663.0 540.1L660.1 543.5L657.0 547.0L653.7 550.6L650.3 554.3L646.8 557.9L643.3 561.4L639.8 564.8L637.0 567.5L633.9 570.4L630.5 573.4L627.0 576.4L623.4 579.5L619.7 582.6L616.0 585.7L612.5 588.6L609.0 591.5L605.8 594.1L605.8 594.1L609.0 591.5L612.5 588.7L616.1 585.8L619.8 582.8L623.6 579.7L627.2 576.7L630.8 573.7L634.2 570.7L637.4 567.9L640.2 565.2L643.7 561.9L647.2 558.4L650.8 554.7L654.3 551.1L657.6 547.5L660.8 544.0L663.7 540.7L666.2 537.6L668.4 534.7L670.2 532.3L671.5 530.2L671.9 525.6L661.0 525.5L658.5 525.2L655.6 524.9L652.3 524.6L648.7 524.4L644.9 524.1L640.9 523.8L636.7 523.5L632.3 523.3L627.7 523.0L623.1 522.7L618.5 522.5L613.8 522.2L609.2 522.0L604.5 521.8L600.0 521.5L596.2 521.4L592.0 521.2L587.7 521.0L583.2 520.8L578.6 520.6L573.9 520.5L569.1 520.3L564.4 520.1L559.7 520.0L555.1 519.8L550.7 519.7L546.4 519.5L542.3 519.4L538.6 519.3L535.1 519.2L532.0 519.1L529.3 519.0" style="opacity:0.45"/><path d="M538.5 519.7L542.3 519.9L546.4 520.1L550.6 520.3L555.1 520.5L559.7 520.7L564.4 520.9L569.1 521.2L573.8 521.4L578.5 521.6L583.2 521.9L587.7 522.1L592.0 522.3L596.1 522.6L600.0 522.8L604.5 523.1L609.1 523.3L613.7 523.6L618.4 523.9L623.1 524.2L627.7 524.5L632.2 524.8L636.6 525.0L640.8 525.3L644.8 525.6L648.6 525.9L652.2 526.2L655.4 526.5L658.3 526.7L661.0 527.0L671.4 527.0L670.1 529.7L669.0 531.5L667.3 533.9L665.1 536.7L662.6 539.8L659.7 543.1L656.6 546.6L653.3 550.2L649.9 553.9L646.4 557.5L642.9 561.1L639.5 564.4L636.7 567.1L633.5 570.0L630.2 573.0L626.7 576.0L623.1 579.1L619.4 582.2L615.7 585.3L612.2 588.3L608.7 591.1L605.5 593.8L602.5 596.2L599.9 598.4L597.7 600.3L597.7 600.3L599.9 598.5L602.6 596.3L605.7 594.0L608.9 591.4L612.4 588.6L616.1 585.7L619.8 582.7L623.5 579.6L627.2 576.6L630.7 573.6L634.1 570.6L637.3 567.8L640.2 565.2L643.6 561.8L647.2 558.3L650.7 554.7L654.2 551.1L657.6 547.5L660.7 544.0L663.6 540.6L666.2 537.5L668.4 534.7L670.1 532.3L671.4 530.1L671.9 525.6L661.0 525.5L658.5 525.3L655.6 525.0L652.3 524.7L648.7 524.4L644.9 524.2L640.9 523.9L636.6 523.6L632.3 523.4L627.7 523.1L623.1 522.9L618.5 522.6L613.8 522.4L609.1 522.2L604.5 521.9L600.0 521.7L596.1 521.6L592.0 521.4L587.7 521.2L583.2 521.1L578.6 520.9L573.9 520.8L569.1 520.6L564.4 520.4L559.7 520.3L555.1 520.2L550.6 520.0L546.4 519.9L542.3 519.8L538.5 519.7" style="opacity:0.6"/><path d="M701.6 468.1L698.3 472.0L694.9 475.9L691.5 479.9L688.3 483.7L685.7 486.8L683.1 490.0L680.3 493.4L677.6 496.8L674.8 500.2L672.0 503.7L669.3 507.3L666.5 510.8L663.9 514.3L661.2 517.9L658.7 521.3L656.2 524.8L653.8 528.2L651.5 531.7L649.2 535.1L646.9 538.6L644.6 542.0L642.4 545.5L640.2 548.9L638.0 552.3L635.8 555.7L633.6 559.0L631.1 562.9L631.1 562.9L633.9 559.2L636.3 556.0L638.8 552.8L641.2 549.6L643.6 546.3L646.1 543.0L648.5 539.7L651.0 536.4L653.4 533.0L655.9 529.7L658.4 526.3L660.9 522.9L663.4 519.5L666.0 516.0L668.7 512.4L671.3 508.8L674.0 505.3L676.7 501.7L679.3 498.1L681.9 494.6L684.4 491.1L686.9 487.7L689.3 484.5L692.3 480.4L695.4 476.3L698.5 472.2L701.6 468.1" style="opacity:0.9"/><path d="M714.7 453.8L713.0 455.7L710.7 458.3L708.1 461.3L705.2 464.7L702.0 468.4L698.7 472.3L695.4 476.3L692.1 480.3L688.9 484.1L686.3 487.3L683.7 490.5L681.0 493.9L678.3 497.3L675.5 500.8L672.8 504.3L670.0 507.9L667.3 511.4L664.7 515.0L662.1 518.5L659.5 521.9L657.1 525.4L654.6 528.8L652.3 532.2L649.9 535.7L647.6 539.1L645.4 542.5L643.1 545.9L640.9 549.3L638.6 552.7L636.4 556.1L634.2 559.4L631.6 563.2L628.9 567.3L626.1 571.4L623.3 575.5L620.6 579.6L620.6 579.6L623.6 575.7L626.6 571.7L629.6 567.7L632.5 563.8L635.2 560.2L637.6 556.9L640.0 553.7L642.4 550.4L644.8 547.1L647.2 543.8L649.6 540.5L652.1 537.2L654.5 533.8L656.9 530.4L659.4 527.1L661.9 523.7L664.5 520.2L667.1 516.7L669.7 513.2L672.4 509.6L675.1 506.1L677.8 502.5L680.4 499.0L683.0 495.5L685.6 492.0L688.1 488.7L690.6 485.4L693.6 481.5L696.7 477.4L699.9 473.3L703.0 469.2L706.0 465.4L708.7 461.8L711.1 458.6L713.2 455.9L714.7 453.8" style="opacity:0.9"/><path d="M687.2 487.9L684.5 491.2L681.9 494.5L679.1 498.0L676.4 501.4L673.6 505.0L670.9 508.5L668.1 512.0L665.5 515.5L662.8 519.0L660.3 522.5L657.8 525.9L655.3 529.3L652.9 532.7L650.5 536.1L648.1 539.5L645.8 542.8L643.5 546.2L641.2 549.6L638.9 552.9L636.6 556.2L634.4 559.6L631.8 563.3L629.0 567.3L626.1 571.4L623.3 575.5L620.5 579.5L617.8 583.4L617.8 583.4L620.6 579.6L623.5 575.6L626.4 571.6L629.4 567.6L632.2 563.6L634.9 559.9L637.3 556.7L639.6 553.4L641.9 550.1L644.3 546.8L646.6 543.4L649.0 540.0L651.3 536.7L653.7 533.3L656.1 529.9L658.6 526.4L661.0 523.0L663.5 519.6L666.1 516.0L668.7 512.5L671.4 508.9L674.1 505.3L676.8 501.7L679.4 498.2L682.0 494.7L684.6 491.3L687.2 487.9" style="opacity:0.75"/><path d="M708.6 461.8L705.7 465.2L702.5 468.8L699.2 472.7L695.8 476.6L692.5 480.6L689.3 484.4L686.6 487.5L684.0 490.8L681.2 494.1L678.5 497.5L675.7 500.9L672.9 504.4L670.2 507.9L667.4 511.5L664.7 515.0L662.1 518.5L659.5 521.9L657.0 525.3L654.6 528.8L652.2 532.2L649.9 535.6L647.5 539.0L645.3 542.5L643.0 545.9L640.8 549.3L638.5 552.6L636.3 556.0L634.1 559.4L631.6 563.2L628.9 567.2L626.1 571.4L623.3 575.5L620.6 579.6L618.0 583.5L615.6 587.1L615.6 587.1L618.3 583.7L621.1 580.0L624.1 576.1L627.1 572.1L630.2 568.1L633.1 564.3L635.8 560.6L638.3 557.4L640.7 554.1L643.1 550.9L645.5 547.6L647.9 544.3L650.3 540.9L652.7 537.6L655.1 534.2L657.5 530.8L660.0 527.5L662.4 524.1L665.0 520.6L667.5 517.1L670.2 513.5L672.8 510.0L675.4 506.4L678.1 502.8L680.7 499.2L683.3 495.7L685.8 492.2L688.3 488.8L690.7 485.6L693.7 481.6L696.8 477.4L699.9 473.3L703.0 469.2L705.9 465.4L708.6 461.8" style="opacity:0.45"/><path d="M549.1 439.1L549.5 443.5L550.1 447.8L550.8 452.0L551.6 456.2L552.3 460.3L552.9 464.3L553.1 468.2L553.0 472.1L552.3 476.6L551.1 481.1L549.5 485.6L547.7 490.0L545.9 494.2L544.4 498.1L543.2 501.7L541.1 507.2" style="opacity:0.45"/><path d="M550.8 456.4L550.8 460.6L550.6 464.6L550.1 468.3L549.3 471.7L548.1 475.5L546.5 479.4L544.7 483.3L542.7 487.4L540.9 491.4L539.4 495.4L538.3 499.1L536.5 504.8L534.8 509.8L533.5 514.0" style="opacity:0.45"/><path d="M544.8 427.0L545.1 431.6L545.4 435.9L545.7 439.9L546.4 444.3L547.3 448.6L548.4 452.8L549.6 456.8L550.7 460.7L551.7 464.5L552.4 468.2L552.7 472.1L552.4 476.6L551.4 481.2L550.0 485.8L550.0 485.8L552.4 481.6L554.3 477.1L555.6 472.3L556.0 468.0L555.8 463.8L555.0 459.6L554.0 455.5L552.7 451.5L551.2 447.5L549.8 443.4L548.5 439.3L547.4 435.6L546.1 431.4L544.8 427.0" style="opacity:0.75"/><path d="M535.4 410.0L535.3 414.3L535.4 419.0L535.6 423.7L535.9 428.5L536.3 433.2L536.8 437.5L537.4 441.6L538.5 446.3L539.9 450.8L541.5 454.9L543.1 458.7L544.6 462.2L546.0 465.4L547.0 468.5L547.7 472.0L547.7 472.0L548.5 468.4L548.7 464.9L548.6 461.2L548.1 457.2L547.2 453.1L546.3 448.9L545.2 444.6L544.2 440.2L543.3 436.3L542.2 432.1L541.0 427.6L539.7 423.0L538.2 418.5L536.8 414.1L535.4 410.0" style="opacity:0.45"/><path d="M544.8 412.7L545.2 417.3L545.6 422.0L546.2 426.7L546.8 431.3L547.6 435.5L548.5 439.3L549.7 443.5L551.2 447.5L552.8 451.4" style="opacity:0.9"/><path d="M542.9 422.5L542.6 427.3L542.5 432.0L542.6 436.5L543.0 440.4L544.0 444.9L545.6 449.1L547.5 453.1L549.6 456.8L551.8 460.4L551.8 460.4L551.7 456.2L551.4 451.9L550.8 447.6L550.0 443.4L549.0 439.2L547.9 435.5L546.5 431.3L544.7 427.0L542.9 422.5" style="opacity:0.75"/><path d="M552.7 468.3L551.9 472.0L550.4 476.1L548.5 480.1L546.4 484.1L544.2 488.1L542.2 492.1L540.5 496.0L539.2 499.6L537.2 505.2L535.4 510.1" style="opacity:0.6"/><path d="M535.4 402.9L534.5 406.3L533.9 410.3L533.6 414.6L533.7 419.3L534.3 424.0L535.3 428.6L536.8 433.1L538.6 437.2L540.6 440.9L543.0 445.1L543.0 445.1L543.4 440.3L543.9 436.2L544.1 431.8L543.9 427.1L543.3 422.4L542.3 417.8L540.9 413.4L539.2 409.4L537.3 405.8L535.4 402.9" style="opacity:0.6"/><path d="M596.5 401.6L594.3 404.2L591.7 407.3L588.9 410.9L586.0 414.9L582.9 419.1L579.9 423.5L576.8 427.9L574.8 431.0L572.7 434.4L570.5 438.1L568.3 441.9L566.1 445.8L564.0 449.9L561.9 453.9L559.8 457.9L559.8 457.9L562.8 454.5L565.7 451.0L568.6 447.5L571.5 444.0L574.2 440.5L576.7 437.1L579.0 433.8L581.1 430.7L583.9 426.1L586.6 421.5L589.2 416.9L591.5 412.5L593.5 408.4L595.2 404.7L596.5 401.6" style="opacity:0.45"/><path d="M597.0 405.8L594.6 409.1L591.9 412.8L589.1 416.9L586.2 421.2L583.2 425.6L580.2 430.1L578.2 433.3L576.1 436.7L573.8 440.3L571.6 444.1L569.3 448.0L567.0 451.9L567.0 451.9L569.8 448.3L572.5 444.7L575.2 441.2L577.7 437.8L580.0 434.5L582.1 431.4L585.0 426.8L587.8 422.2L590.4 417.7L592.9 413.4L595.1 409.4L597.0 405.8" style="opacity:0.75"/><path d="M581.1 430.7L578.5 433.5L575.6 436.4L572.7 439.6L569.8 442.9L566.9 446.3L564.1 449.9L561.3 453.5L558.8 457.2L556.4 460.9L554.3 464.5L552.4 467.9L550.9 471.3L548.6 475.9L546.5 480.6L544.6 485.1L542.9 489.3" style="opacity:0.6"/><path d="M588.0 422.4L585.0 426.8L581.9 431.2L579.7 434.3L577.4 437.6L574.9 441.0L572.4 444.6L569.8 448.3L567.2 452.0L564.7 455.8L562.2 459.5L559.8 463.1L557.5 466.6L555.5 469.9L553.6 473.0L550.9 477.4L548.4 481.8L546.0 485.9L543.9 489.9L541.9 493.5" style="opacity:0.75"/><path d="M573.9 435.2L570.7 438.2L567.4 441.3L564.3 444.6L561.3 448.0L558.5 451.6L556.0 455.3L553.8 459.1L552.0 462.9L550.4 466.6L549.2 470.2L547.3 475.2L547.3 475.2L551.0 471.3L553.7 468.8L556.6 465.9L559.3 462.8L562.0 459.3L564.5 455.6L566.8 451.7L568.8 447.6L570.7 443.5L572.4 439.3L573.9 435.2" style="opacity:0.75"/><path d="M597.9 406.4L595.0 409.3L591.8 412.7L588.4 416.4L585.0 420.4L581.6 424.6L578.3 428.9L576.0 431.9L573.7 435.1L571.5 438.7L569.2 442.5L567.1 446.5L565.1 450.6L563.2 454.8L561.4 458.9L559.7 463.1L558.2 467.1" style="opacity:0.45"/><path d="M558.3 345.8L557.2 348.4L555.8 352.0L554.1 356.2L552.3 360.8L550.6 365.8L549.0 370.7L547.7 375.5L546.7 379.6L545.7 383.8L544.7 388.2L543.9 392.6L543.2 397.0L542.7 401.4L542.4 405.8L542.4 405.8L542.9 401.4L543.7 397.1L544.6 392.7L545.7 388.4L546.8 384.1L547.9 379.9L548.9 375.8L550.2 371.0L551.7 366.1L553.3 361.2L554.8 356.4L556.3 352.2L557.5 348.5L558.3 345.8" style="opacity:0.6"/><path d="M558.9 349.1L556.8 352.4L554.5 356.3L552.2 360.8L550.0 365.6L548.1 370.4L546.6 375.2L545.6 379.3L544.7 383.6L544.0 388.0L543.6 392.5L543.5 397.1L543.7 401.5L544.2 405.9L544.2 405.9L545.4 401.7L546.8 397.6L548.2 393.5L549.7 389.3L551.1 385.2L552.4 381.0L553.4 376.9L554.5 372.3L555.6 367.4L556.7 362.3L557.6 357.4L558.4 352.9L558.9 349.1" style="opacity:0.75"/><path d="M550.4 365.7L548.2 370.5L546.3 375.1L544.8 379.1L543.3 383.2L541.9 387.6L540.8 392.0L540.0 396.5L539.5 401.0L539.4 405.6L539.8 410.0L540.7 414.4L542.0 418.8L543.7 423.2L543.7 423.2L543.3 418.6L543.2 414.1L543.4 409.9L543.9 405.8L544.6 401.6L545.3 397.3L546.1 393.0L546.9 388.7L547.6 384.3L548.3 380.0L548.8 375.7L549.5 370.8L550.4 365.7" style="opacity:0.45"/><path d="M545.8 364.2L543.4 369.1L541.3 373.8L539.5 377.8L537.8 381.9L536.2 386.2L534.8 390.8L533.7 395.5L533.0 400.3L532.7 405.2L532.8 410.2L533.6 415.3L535.0 420.2L536.7 424.9L538.6 429.4L540.7 433.7L542.8 437.9" style="opacity:0.9"/><path d="M547.6 359.2L545.4 364.1L543.3 369.0L541.5 373.8L540.1 377.9L538.9 382.2L537.7 386.6L536.8 391.2L536.1 395.9L535.8 400.6L535.9 405.4L536.3 410.1L537.3 414.7L537.3 414.7L537.5 410.1L538.0 405.5L538.9 401.0L539.8 396.5L540.9 392.0L541.9 387.5L542.9 383.2L543.8 378.8L544.5 374.6L545.4 369.6L546.4 364.4L547.6 359.2" style="opacity:0.75"/><path d="M537.2 400.9L536.4 405.4L536.0 410.1L536.1 415.0L536.7 419.8L537.7 424.6L538.9 429.3L540.3 433.9L541.8 438.1L543.2 442.1L544.5 445.8L545.9 450.7L545.9 450.7L545.2 445.6L544.6 441.8L543.7 437.6L542.6 433.2L541.4 428.6L540.2 424.0L539.1 419.4L538.1 414.7L537.5 410.1L537.2 405.5L537.2 400.9" style="opacity:0.45"/><path d="M548.4 365.1L546.3 369.9L544.4 374.6L542.9 378.6L541.4 382.8L540.1 387.1L539.1 391.6L538.3 396.2L537.9 400.8L537.9 405.5L538.3 410.1L539.3 414.6L540.7 419.1L540.7 419.1L540.5 414.4L540.8 410.0L541.3 405.7L542.1 401.3L542.9 397.0L543.8 392.6L544.7 388.2L545.5 383.8L546.2 379.5L546.8 375.2L547.5 370.2L548.4 365.1" style="opacity:0.9"/><path d="M716.8 387.8L720.8 387.3L725.6 386.8L730.7 386.3L735.6 385.8L740.0 385.5L744.6 385.1L749.2 384.6L753.6 384.3L757.6 384.6L761.1 385.8L764.3 388.1L767.1 391.4L769.5 395.2L771.2 399.1L772.2 403.0L772.2 407.7L771.1 412.6L769.1 417.5L766.2 422.1L763.7 425.1L760.8 428.1L757.5 431.1L753.8 433.8L750.1 436.3L746.2 438.5L741.9 440.2L737.0 441.6L731.9 442.7L727.1 443.6L723.0 444.3L723.0 444.3L727.1 443.7L731.9 443.0L737.1 442.0L742.1 440.7L746.5 439.1L750.5 437.0L754.4 434.6L758.1 431.9L761.6 429.0L764.6 425.9L767.2 422.9L770.2 418.1L772.4 413.0L773.6 407.8L773.5 402.8L772.5 398.7L770.6 394.5L768.1 390.6L765.1 387.2L761.7 384.7L757.8 383.5L753.5 383.3L749.1 383.7L744.5 384.3L739.9 384.8L735.5 385.2L730.6 385.8L725.6 386.5L720.8 387.2L716.8 387.8" style="opacity:0.45"/><path d="M714.1 389.5L717.0 389.2L721.0 388.8L725.8 388.3L730.8 387.7L735.7 387.3L740.1 387.0L744.8 386.6L749.4 386.1L753.6 385.8L757.3 386.0L760.4 387.1L763.2 389.2L765.9 392.3L768.1 395.9L769.8 399.6L770.7 403.2L770.7 407.5L769.7 412.2L767.8 416.8L765.0 421.3L762.7 424.1L759.8 427.1L756.6 430.0L753.0 432.7L749.3 435.1L745.6 437.2L741.5 438.8L736.6 440.2L731.6 441.3L726.9 442.2L722.8 442.9" style="opacity:0.6"/><path d="M718.7 388.2L723.4 387.6L728.5 387.0L733.5 386.5L738.0 386.1L742.4 386.0L747.0 385.9L751.6 385.9L755.9 386.0L755.9 386.0L751.7 385.4L747.1 384.9L742.4 384.6L737.9 384.7L733.3 385.2L728.4 386.0L723.4 387.1L718.7 388.2" style="opacity:0.75"/><path d="M718.7 387.9L723.4 387.5L728.5 387.0L733.5 386.5L738.0 386.3L742.4 386.1L747.0 386.1L751.6 386.1L755.9 386.1L759.5 386.0L759.5 386.0L755.9 385.3L751.7 384.7L747.1 384.2L742.4 383.9L737.9 384.0L733.3 384.6L728.3 385.5L723.3 386.7L718.7 387.9" style="opacity:0.6"/><path d="M728.2 385.0L733.3 385.1L738.0 385.3L742.4 385.6L747.0 385.7L751.7 385.6L755.9 385.3L759.6 384.7L759.6 384.7L756.1 383.7L751.8 382.7L747.2 382.1L742.4 382.0L737.8 382.5L733.1 383.6L728.2 385.0" style="opacity:0.6"/><path d="M711.9 389.5L714.8 389.3L718.8 388.7L723.5 388.1L728.6 387.4L733.5 386.7L738.0 386.3L742.4 386.1L747.0 386.1L751.6 386.2L755.9 386.3L759.4 386.4L759.4 386.4L755.9 385.8L751.7 385.3L747.1 384.9L742.4 384.7L737.9 384.7L733.3 385.2L728.3 385.9L723.3 386.9L718.7 387.9L714.7 388.8L711.9 389.5" style="opacity:0.6"/><path d="M723.8 389.6L728.8 389.2L733.8 388.9L738.2 388.7L742.4 388.6L746.9 388.5L751.5 388.4L755.7 388.2L755.7 388.2L751.5 387.5L747.0 386.8L742.4 386.5L738.0 386.6L733.6 387.3L728.7 388.3L723.8 389.6" style="opacity:0.45"/><path d="M703.3 452.9L707.3 452.3L712.0 451.3L716.9 450.1L721.7 448.8L726.1 447.3L730.3 445.7L734.6 443.8L738.9 441.8L742.7 439.8" style="opacity:0.45"/><path d="M700.1 452.2L702.9 451.6L706.8 450.7L711.4 449.5L716.3 448.1L721.1 446.6L725.4 445.2L729.6 443.6L733.9 441.8L738.2 440.0L742.2 438.2L742.2 438.2L738.0 439.4L733.5 440.6L729.0 441.9L724.7 443.2L720.4 444.6L715.6 446.1L710.8 447.8L706.4 449.5L702.7 451.0L700.1 452.2" style="opacity:0.45"/><path d="M700.2 452.5L703.0 451.8L706.8 450.8L711.4 449.6L716.3 448.1L721.1 446.7L725.4 445.2L729.6 443.7L734.0 442.1L738.4 440.4L742.4 438.8L745.7 437.4L745.7 437.4L742.2 438.4L738.1 439.6L733.7 441.0L729.2 442.4L724.9 443.8L720.6 445.2L715.8 446.8L711.1 448.5L706.6 450.0L702.8 451.4L700.2 452.5" style="opacity:0.9"/><path d="M700.3 453.0L703.2 452.7L707.2 451.9L711.8 450.8L716.7 449.3L721.4 447.7L725.7 446.0L729.7 444.1L734.0 442.0" style="opacity:0.9"/><path d="M718.5 407.2L716.0 410.6L713.2 414.7L710.7 418.7L708.4 422.6L706.2 426.4L704.3 430.2L702.5 433.9L700.8 437.4L698.2 442.4L695.7 447.2L695.7 447.2L698.8 442.7L701.8 438.1L704.0 434.7L706.1 431.2L708.1 427.4L710.1 423.6L712.2 419.5L714.3 415.3L716.6 411.0L718.5 407.2" style="opacity:0.45"/><path d="M723.3 398.7L719.8 402.4L716.5 405.9L713.6 409.2L710.6 413.1L707.8 417.1L705.3 421.0L703.2 424.8L701.3 428.6L699.6 432.3L698.1 435.9L695.8 441.0L693.7 446.0L691.7 450.7L690.3 454.8L690.3 454.8L693.2 451.6L696.5 447.7L700.0 443.4L703.3 438.9L705.7 435.6L707.9 432.1L710.0 428.4L711.9 424.5L713.8 420.4L715.8 416.2L717.7 411.7L719.3 407.7L721.2 403.3L723.3 398.7" style="opacity:0.45"/><path d="M722.6 392.0L718.9 395.7L715.3 399.5L712.0 403.1L709.1 406.4L706.0 410.5L703.3 414.6L701.0 418.6L699.0 422.6L697.3 426.5L695.9 430.2L694.6 433.9L692.6 439.0L690.6 444.2L688.8 449.0L688.8 449.0L692.2 445.2L695.8 441.0L699.3 436.6L701.9 433.5L704.3 430.2L706.5 426.6L708.7 422.8L710.8 418.7L712.8 414.5L714.9 410.0L716.6 406.0L718.5 401.6L720.5 396.8L722.6 392.0" style="opacity:0.75"/><path d="M726.1 394.3L722.8 398.3L719.6 402.3L716.7 406.1L714.1 409.5L711.4 413.6L708.9 417.7L706.6 421.6L704.6 425.6L702.7 429.4L701.0 433.1L699.4 436.7L697.0 441.6L694.6 446.6L692.4 451.1L692.4 451.1L695.4 447.1L698.6 442.6L701.8 438.0L704.1 434.7L706.2 431.2L708.4 427.6L710.5 423.7L712.6 419.7L714.8 415.6L717.1 411.3L719.0 407.5L721.2 403.3L723.6 398.9L726.1 394.3" style="opacity:0.6"/><path d="M738.0 380.9L735.7 383.8L733.1 387.2L730.2 391.0L727.2 395.1L724.2 399.3L721.3 403.4L718.7 407.3L716.4 410.9L713.9 415.1L711.6 419.2L709.5 423.2L707.6 427.1L705.7 431.0L703.9 434.7L702.2 438.2L699.6 443.2L697.0 448.0L697.0 448.0L700.0 443.4L703.0 438.7L705.2 435.3L707.3 431.8L709.4 428.1L711.6 424.3L713.8 420.4L716.2 416.4L718.7 412.3L720.9 408.7L723.3 404.7L726.0 400.5L728.7 396.1L731.4 391.8L733.9 387.7L736.1 384.1L738.0 380.9" style="opacity:0.75"/><path d="M712.7 414.4L709.3 417.9L706.2 421.4L703.4 424.9L701.1 428.5L699.2 432.0L697.6 435.6L695.5 440.8L693.6 446.0L692.0 450.9L692.0 450.9L695.6 447.2L699.4 443.0L702.8 438.6L705.1 435.3L707.1 431.7L708.7 427.8L710.1 423.5L711.4 419.1L712.7 414.4" style="opacity:0.6"/><path d="M738.7 381.5L736.3 384.2L733.4 387.4L730.4 391.1L727.2 395.1L724.1 399.2L721.2 403.3L718.6 407.3L716.4 410.9L714.0 415.1L711.9 419.4L710.1 423.5L708.4 427.6L706.9 431.6L705.4 435.4L705.4 435.4L707.8 432.1L710.2 428.6L712.7 424.9L715.2 421.2L717.7 417.3L720.3 413.3L722.6 409.8L725.1 405.9L727.7 401.6L730.3 397.2L732.8 392.8L735.1 388.6L737.1 384.7L738.7 381.5" style="opacity:0.45"/><path d="M734.5 382.9L731.3 385.9L727.9 389.4L724.5 393.2L721.3 397.4L718.5 401.6L716.2 405.8L714.5 409.7L712.7 414.4L711.2 419.0L711.2 419.0L714.4 415.4L717.7 411.6L720.4 408.4L723.3 404.7L726.0 400.5L728.6 396.0L730.9 391.5L732.9 387.0L734.5 382.9" style="opacity:0.9"/><path d="M737.8 380.8L735.5 383.6L732.8 386.9L729.8 390.7L726.7 394.8L723.7 398.9L720.9 403.1L718.3 407.1L716.1 410.7L713.7 415.0L711.6 419.2L709.7 423.3L708.0 427.4L706.4 431.3L706.4 431.3L708.7 427.8L711.1 424.1L713.5 420.3L716.1 416.3L718.7 412.3L721.0 408.8L723.6 404.9L726.3 400.6L729.0 396.3L731.6 391.9L734.0 387.8L736.1 384.0L737.8 380.8" style="opacity:0.75"/><path d="M719.5 402.2L716.1 405.7L713.0 408.8L709.8 412.7L706.9 416.5L704.3 420.4L702.0 424.2L700.0 427.9L698.3 431.6L696.8 435.2L694.6 440.2L692.4 445.3L690.6 450.0L689.2 454.2L689.2 454.2L692.2 451.0L695.6 447.2L699.1 442.9L702.4 438.4L704.8 435.1L706.9 431.6L708.9 427.9L710.8 423.9L712.6 419.7L714.3 415.3L716.2 410.7L717.7 406.7L719.5 402.2" style="opacity:0.9"/><path d="M664.0 640.1L666.3 641.3L669.4 642.7L673.1 644.3L677.2 646.0L681.7 647.7L686.3 649.4L690.9 651.0L695.3 652.5L699.4 653.8L704.0 655.1L708.8 656.4L713.6 657.7L718.4 658.8L722.9 659.9L727.0 660.7L730.4 661.4L730.4 661.4L727.2 660.1L723.3 658.5L719.0 656.9L714.4 655.3L709.6 653.6L704.9 652.0L700.5 650.5L696.4 649.1L692.0 647.7L687.4 646.3L682.7 644.9L678.1 643.6L673.7 642.4L669.8 641.4L666.5 640.6L664.0 640.1" style="opacity:0.5"/><path d="M732.7 661.7L734.4 659.9L736.6 657.5L739.3 654.6L742.2 651.4L745.3 647.9L748.5 644.3L751.7 640.6L754.8 637.0L757.7 633.5L760.4 630.3L763.2 626.8L766.1 623.2L769.0 619.5L771.9 615.8L774.6 612.3L777.1 609.0L779.3 606.1L781.1 603.6" style="opacity:0.5"/><path d="M782.8 601.9L781.5 604.2L780.0 607.1L778.2 610.7L776.2 614.8L774.1 619.1L771.9 623.5L769.8 627.9L767.7 632.2L765.8 636.1L764.2 639.6L761.9 644.1L759.6 648.4L757.4 652.6L755.3 656.4L753.5 659.9L752.0 662.7" style="opacity:0.5"/><path d="M751.0 664.9L753.4 664.5L756.4 664.0L759.9 663.3L763.8 662.6L768.1 661.7L772.6 660.8L777.3 659.8L782.1 658.8L786.8 657.8L791.5 656.8L796.0 655.8L800.2 654.8L804.4 653.8L808.8 652.7L813.4 651.5L818.0 650.3L822.6 649.0L827.2 647.8L831.5 646.6L835.7 645.4L839.4 644.3L842.8 643.4L845.7 642.5L845.7 642.5L842.7 643.1L839.3 643.9L835.5 644.7L831.3 645.7L826.9 646.7L822.3 647.8L817.7 648.8L813.0 649.9L808.4 651.0L804.0 652.1L799.8 653.1L795.6 654.0L791.1 655.1L786.5 656.2L781.7 657.3L777.0 658.4L772.3 659.5L767.9 660.6L763.6 661.7L759.7 662.6L756.3 663.5L753.3 664.3L751.0 664.9" style="opacity:0.6"/><path d="M689.1 640.5L691.5 640.3L694.7 640.0L698.3 639.7L702.5 639.3L706.9 638.9L711.7 638.4L716.6 637.9L721.5 637.4L726.5 636.8L731.3 636.3L735.9 635.7L740.2 635.1L744.8 634.4L749.6 633.6L754.5 632.7L759.5 631.8L764.4 630.9L769.2 630.0L773.7 629.1L777.8 628.3L781.5 627.6L784.6 626.9L784.6 626.9L781.4 627.4L777.7 628.0L773.6 628.6L769.1 629.4L764.3 630.2L759.4 630.9L754.4 631.7L749.4 632.5L744.6 633.2L740.0 633.9L735.7 634.5L731.1 635.1L726.3 635.7L721.4 636.3L716.5 636.9L711.6 637.5L706.8 638.1L702.4 638.7L698.3 639.2L694.6 639.7L691.5 640.1L689.1 640.5" style="opacity:0.4"/><path d="M787.0 625.9L784.4 627.1L780.9 628.7L776.8 630.6L772.4 632.8L767.8 635.1L763.5 637.4L759.7 639.4L755.5 641.9L751.2 644.5L747.1 647.1L743.4 649.5L740.3 651.5L740.3 651.5L743.6 649.7L747.4 647.6L751.7 645.2L756.0 642.7L760.2 640.4L764.1 638.4L768.4 636.1L772.8 633.7L777.2 631.4L781.2 629.2L784.6 627.3L787.0 625.9" style="opacity:0.5"/><path d="M827.4 573.2L825.6 575.5L823.3 578.7L820.6 582.6L817.7 586.8L814.8 591.2L812.0 595.6L809.4 599.6L807.0 603.7L804.5 608.0L802.0 612.4L799.6 616.7L797.5 620.6L795.8 623.9L795.8 623.9L798.0 620.9L800.5 617.2L803.3 613.2L806.1 609.0L808.8 604.8L811.4 600.8L813.9 596.8L816.6 592.4L819.3 587.8L821.9 583.4L824.2 579.3L826.1 575.8L827.4 573.2" style="opacity:0.5"/><path d="M794.3 626.4L796.2 625.0L798.5 623.2L801.2 621.1L804.2 618.8L807.4 616.2L810.9 613.4L814.5 610.5L818.1 607.6L821.9 604.6L825.5 601.6L829.2 598.7L832.6 595.8L835.9 593.2L839.2 590.5L842.7 587.7L846.3 584.7L850.0 581.7L853.8 578.7L857.4 575.7L861.0 572.8L864.5 570.0L867.7 567.4L870.6 564.9L873.2 562.7L875.4 560.8L875.4 560.8L873.1 562.5L870.3 564.5L867.2 566.8L863.9 569.3L860.3 571.9L856.6 574.7L852.8 577.5L849.0 580.4L845.2 583.3L841.6 586.2L838.0 589.0L834.7 591.6L831.4 594.3L827.9 597.1L824.3 600.1L820.7 603.2L817.1 606.3L813.5 609.4L810.0 612.4L806.7 615.3L803.6 618.0L800.7 620.6L798.2 622.8L796.0 624.8L794.3 626.4" style="opacity:0.5"/><path d="M909.1 536.1L907.4 537.6L905.4 539.5L903.1 541.7L900.5 544.1L897.7 546.7L894.7 549.5L891.5 552.5L888.2 555.6L884.9 558.8L881.4 562.1L878.0 565.3L874.5 568.6L871.1 571.8L867.8 575.0L864.6 578.0L861.6 580.9L858.7 583.6L855.5 586.7L852.2 589.8L848.9 593.0L845.5 596.2L842.1 599.4L838.7 602.6L835.4 605.8L832.2 608.8L829.1 611.7L826.2 614.5L823.4 617.1L821.0 619.5L818.7 621.7L816.8 623.6" style="opacity:0.5"/><path d="M816.0 626.0L818.4 624.3L821.5 622.0L825.2 619.1L829.2 615.9L833.3 612.6L837.3 609.2L840.9 606.0L844.4 602.7L848.1 599.2L851.7 595.6L855.2 592.0L858.3 588.7L860.9 585.9" style="opacity:0.5"/><path d="M957.3 508.3L955.3 509.9L952.7 512.3L949.6 515.1L946.3 518.2L942.9 521.5L939.6 524.6L936.7 527.4L933.5 530.6L930.1 533.9L926.8 537.2L923.8 540.2L923.8 540.2L927.2 537.6L930.8 534.7L934.4 531.6L937.9 528.7L940.9 525.9L944.2 522.8L947.5 519.4L950.6 516.1L953.4 513.0L955.7 510.3L957.3 508.3" style="opacity:0.5"/><path d="M956.8 507.8L954.7 509.4L952.0 511.6L948.9 514.4L945.6 517.6L942.3 520.8L939.0 524.0L936.2 526.9L933.0 530.1L929.7 533.5L926.5 536.8L926.5 536.8L930.2 534.0L933.9 531.1L937.4 528.2L940.5 525.5L943.8 522.4L947.1 519.1L950.2 515.7L953.0 512.6L955.2 509.8L956.8 507.8" style="opacity:0.5"/><path d="M507.1 492.0L507.3 494.6L507.6 498.0L508.0 502.1L508.5 506.7L509.1 511.5L509.8 516.3L510.6 520.9L511.4 525.1L512.5 529.8L513.8 534.8L515.3 539.7L516.8 544.5L518.1 548.7L519.3 552.3L519.3 552.3L518.5 548.6L517.4 544.3L516.2 539.5L515.0 534.5L513.8 529.5L512.8 524.8L512.0 520.6L511.2 516.1L510.5 511.3L509.7 506.5L508.9 502.0L508.3 497.9L507.6 494.5L507.1 492.0" style="opacity:0.3"/><path d="M528.5 575.4L530.2 578.0L532.7 581.6L535.8 585.5L538.9 589.0L542.3 592.3L546.0 595.5L549.4 598.3L549.4 598.3L546.6 594.9L543.3 591.3L540.2 587.8L537.2 584.3L533.9 580.7L530.8 577.5L528.5 575.4" style="opacity:0.4"/><path d="M637.0 674.0L641.6 675.9L647.9 677.7L652.6 678.0L657.6 677.9L657.6 677.9L652.7 677.1L648.1 676.4L641.8 675.0L637.0 674.0" style="opacity:0.3"/><path d="M534.0 518.4L536.2 520.4L539.2 522.9L543.0 525.8L547.1 528.8L551.3 531.8L555.3 534.7L558.7 537.2L562.6 539.9L566.5 542.8L570.3 545.6L570.3 545.6L567.1 542.1L563.7 538.6L560.3 535.3L557.0 532.4L553.1 529.3L548.7 526.4L544.3 523.7L540.2 521.4L536.7 519.6L534.0 518.4" style="opacity:0.75"/><path d="M532.3 521.1L534.5 523.0L537.6 525.4L541.3 528.3L545.4 531.3L549.5 534.3L553.3 537.2L556.6 539.7L560.3 542.6L564.0 545.6L567.8 548.5L571.2 551.1L574.1 553.2" style="opacity:0.45"/><path d="M539.9 521.9L543.4 525.1L547.3 528.5L551.3 531.8L555.0 535.0L558.4 537.6L562.1 540.5L566.1 543.3L570.1 545.9L573.8 548.2L573.8 548.2L571.1 544.8L568.0 541.1L564.6 537.6L561.1 534.3L557.7 531.5L553.5 528.7L548.9 526.2L544.3 523.8L539.9 521.9" style="opacity:0.6"/><path d="M538.4 524.2L542.2 527.0L546.3 530.0L550.4 533.0L554.2 536.0L557.5 538.7L561.1 541.7L564.8 544.7L568.5 547.7L571.8 550.4L574.6 552.7L574.6 552.7L572.1 550.1L569.0 547.1L565.6 543.8L562.0 540.6L558.5 537.5L555.1 534.9L551.1 532.1L546.8 529.2L542.4 526.6L538.4 524.2" style="opacity:0.6"/><path d="M566.9 431.9L566.5 434.2L566.1 437.1L565.6 440.4L565.0 444.2L564.5 448.4L563.9 452.7L563.4 457.3L562.8 461.9L562.2 466.6L561.7 471.2L561.2 475.6L560.8 479.8L560.4 484.0L560.0 488.5L559.6 493.1L559.2 497.9L558.8 502.6L558.4 507.3L558.1 511.8L557.8 516.1L557.5 520.0L557.3 523.5L557.2 526.5" style="opacity:0.6"/><path d="M566.2 437.1L565.6 440.4L565.1 444.2L564.5 448.4L563.9 452.7L563.3 457.3L562.6 461.9L562.1 466.6L561.5 471.1L561.0 475.6L560.5 479.7L560.1 484.0L559.7 488.4L559.2 493.1L558.8 497.8L558.5 502.6L558.1 507.3L557.8 511.8L557.5 516.1L557.3 520.0L557.1 523.5L557.0 526.5L557.0 526.5L557.4 523.5L558.0 520.1L558.5 516.2L559.1 511.9L559.7 507.5L560.3 502.8L560.9 498.0L561.5 493.3L562.0 488.7L562.5 484.2L562.9 480.0L563.3 475.8L563.7 471.4L564.1 466.8L564.5 462.1L564.9 457.4L565.2 452.9L565.5 448.5L565.8 444.3L566.0 440.5L566.2 437.1" style="opacity:0.9"/><path d="M567.0 437.2L566.5 440.5L565.9 444.3L565.4 448.5L564.8 452.8L564.2 457.4L563.6 462.0L563.0 466.7L562.4 471.2L561.9 475.7L561.5 479.8L561.1 484.0L560.6 488.5L560.2 493.2L559.8 497.9L559.4 502.7L559.0 507.4L558.7 511.9L558.4 516.2L558.1 520.1L557.9 523.6L557.8 526.6" style="opacity:0.6"/><path d="M537.2 524.0L538.0 526.7L539.3 530.2L540.9 534.5L542.7 539.0L544.5 543.5L546.1 547.6L547.6 551.7L549.2 556.1L550.8 560.5L552.3 564.5L553.6 567.8L553.6 567.8L552.9 564.3L552.1 560.1L551.0 555.5L549.8 551.0L548.4 546.7L546.8 542.5L544.8 538.1L542.6 533.7L540.5 529.7L538.6 526.4L537.2 524.0" style="opacity:0.9"/><path d="M536.1 527.5L536.9 531.3L538.1 535.7L539.5 540.3L541.2 544.8L543.0 548.7L544.8 552.6L546.9 556.8L549.1 561.0" style="opacity:0.6"/><path d="M537.0 527.1L538.3 530.7L539.9 534.9L541.6 539.4L543.4 543.9L545.0 548.0L546.5 552.1L548.1 556.4L549.8 560.8L551.3 564.8L551.3 564.8L550.4 560.6L549.4 556.0L548.2 551.5L546.9 547.3L545.3 543.1L543.3 538.7L541.1 534.4L538.9 530.4L537.0 527.1" style="opacity:0.6"/><path d="M601.6 395.0L600.0 396.9L598.1 399.1L596.0 401.8L593.7 404.8L591.2 408.1L588.6 411.7L585.8 415.4L583.0 419.3L580.2 423.2L577.3 427.3L574.5 431.3L571.8 435.2L569.2 439.1L566.7 442.7L564.4 446.2L562.0 449.9L559.5 453.8L556.9 457.7L554.3 461.8L551.8 465.9L549.3 469.9L546.8 473.9L544.5 477.7L542.3 481.4L540.2 484.9L538.4 488.0L538.4 488.0L540.7 485.2L543.2 482.0L545.8 478.7L548.6 475.1L551.4 471.4L554.3 467.6L557.2 463.7L560.0 459.9L562.8 456.1L565.5 452.3L568.1 448.7L570.5 445.3L573.0 441.6L575.6 437.8L578.2 433.8L580.9 429.7L583.5 425.5L586.1 421.4L588.7 417.3L591.1 413.3L593.4 409.6L595.5 406.0L597.4 402.7L599.1 399.8L600.5 397.2L601.6 395.0" style="opacity:0.6"/><path d="M602.5 395.6L600.9 397.5L599.1 399.8L597.0 402.5L594.7 405.5L592.3 408.8L589.7 412.4L586.9 416.1L584.2 420.0L581.3 424.0L578.5 428.1L575.7 432.1L573.0 436.0L570.4 439.9L567.9 443.6L565.6 447.1L563.2 450.8L560.7 454.6L558.2 458.6L555.6 462.6L553.0 466.7L550.5 470.7L548.0 474.7L545.7 478.5L543.4 482.2L541.4 485.6L541.4 485.6L543.8 482.5L546.4 479.1L549.2 475.5L552.0 471.8L554.9 468.0L557.7 464.1L560.6 460.3L563.4 456.4L566.1 452.7L568.6 449.1L571.0 445.7L573.5 442.0L576.1 438.2L578.8 434.2L581.5 430.1L584.2 425.9L586.8 421.8L589.4 417.8L591.8 413.8L594.1 410.1L596.3 406.5L598.2 403.3L599.9 400.3L601.3 397.8L602.5 395.6" style="opacity:0.9"/><path d="M600.6 400.8L598.5 403.5L596.2 406.4L593.6 409.7L591.0 413.3L588.2 417.0L585.3 420.8L582.5 424.8L579.6 428.8L576.7 432.8L574.0 436.7L571.3 440.5L568.8 444.2L566.4 447.6L564.0 451.3L561.4 455.1L558.8 459.1L556.2 463.1L553.6 467.1L551.1 471.2L548.6 475.1L546.3 479.0L544.1 482.6L542.0 486.1L540.1 489.3L538.5 492.1L538.5 492.1L540.6 489.6L542.9 486.7L545.4 483.5L548.0 480.2L550.7 476.6L553.6 472.9L556.4 469.0L559.3 465.2L562.1 461.3L564.8 457.4L567.5 453.7L570.0 450.1L572.4 446.6L574.8 442.9L577.4 439.0L580.0 435.0L582.6 430.8L585.2 426.7L587.8 422.5L590.3 418.4L592.7 414.4L595.0 410.6L597.1 407.1L598.9 403.8L600.6 400.8" style="opacity:0.9"/><path d="M632.2 599.8L635.3 599.1L638.8 598.3L642.6 597.4L646.7 596.4L650.9 595.4L655.4 594.3L659.9 593.1L664.5 592.0L669.1 590.8L673.7 589.6L678.2 588.4L682.5 587.3L686.7 586.2L690.6 585.1L694.7 584.0L699.0 582.7L703.4 581.5L707.9 580.2L712.4 578.9L716.8 577.5L721.2 576.2L725.5 574.9L729.6 573.7L733.5 572.5L737.2 571.3L740.5 570.3L740.5 570.3L737.1 571.1L733.4 572.0L729.4 573.0L725.3 574.0L720.9 575.1L716.5 576.2L712.0 577.4L707.4 578.5L702.9 579.7L698.5 580.9L694.2 582.0L690.0 583.1L686.1 584.2L682.0 585.3L677.6 586.5L673.2 587.8L668.6 589.0L664.0 590.3L659.5 591.6L655.0 592.9L650.6 594.2L646.4 595.5L642.4 596.7L638.7 597.8L635.3 598.8L632.2 599.8" style="opacity:0.45"/><path d="M632.4 600.7L635.6 600.2L639.2 599.7L643.0 599.0L647.2 598.3L651.5 597.5L656.0 596.5L660.5 595.5L665.2 594.5L669.8 593.4L674.4 592.2L678.8 591.0L683.2 589.7L687.3 588.5L691.2 587.3L695.2 585.9L699.5 584.5L703.8 582.9L708.2 581.4L712.6 579.7L717.0 578.1L721.3 576.5" style="opacity:0.6"/><path d="M677.3 585.3L681.8 584.7L686.1 584.0L690.1 583.4L694.3 582.7L698.7 581.8L703.2 580.8L707.7 579.6L712.2 578.4L716.7 577.0L721.1 575.6L725.3 574.1L729.3 572.6L733.1 571.1L736.7 569.6L739.9 568.1L739.9 568.1L736.4 568.6L732.6 569.1L728.5 569.8L724.3 570.5L719.9 571.4L715.4 572.4L710.9 573.6L706.4 574.8L701.9 576.2L697.6 577.6L693.4 579.0L689.3 580.6L685.5 582.1L681.5 583.7L677.3 585.3" style="opacity:0.75"/><path d="M629.3 599.6L632.0 599.0L635.1 598.2L638.6 597.4L642.3 596.5L646.4 595.4L650.7 594.4L655.1 593.2L659.6 592.1L664.2 590.9L668.8 589.7L673.4 588.4L677.8 587.2L682.2 586.1L686.3 584.9L690.2 583.8L694.4 582.7L698.6 581.5L703.0 580.2L707.5 578.9L712.0 577.6L716.5 576.3L720.9 575.0L725.2 573.7L729.3 572.5L733.2 571.3L733.2 571.3L729.3 572.3L725.1 573.4L720.8 574.5L716.3 575.7L711.8 576.9L707.3 578.0L702.8 579.2L698.3 580.4L694.0 581.5L689.9 582.6L686.0 583.7L681.8 584.8L677.5 586.0L673.0 587.2L668.5 588.4L663.9 589.7L659.3 591.0L654.8 592.2L650.4 593.5L646.2 594.7L642.2 595.8L638.4 596.9L635.0 597.9L631.9 598.8L629.3 599.6" style="opacity:0.6"/><path d="M731.0 588.3L734.3 587.7L738.3 586.8L742.7 585.9L747.3 584.8L752.1 583.8L756.9 582.7L761.4 581.6L765.6 580.7L770.2 579.6L775.0 578.5L780.0 577.4L784.8 576.3L789.3 575.3L793.4 574.3L796.8 573.5" style="opacity:0.9"/><path d="M730.8 587.4L734.1 586.7L738.0 585.9L742.4 585.0L747.1 583.9L751.9 582.9L756.7 581.8L761.2 580.7L765.4 579.8L770.0 578.7L774.9 577.6L779.8 576.5L784.6 575.4L789.1 574.4L793.2 573.4L796.6 572.6L796.6 572.6L793.1 573.1L789.0 573.7L784.4 574.5L779.6 575.4L774.6 576.3L769.7 577.3L765.1 578.3L760.9 579.2L756.3 580.3L751.6 581.5L746.8 582.8L742.2 584.1L737.9 585.3L734.0 586.4L730.8 587.4" style="opacity:0.45"/><path d="M733.9 585.8L737.8 585.1L742.2 584.2L746.9 583.2L751.8 582.2L756.5 581.1L761.1 580.0L765.2 579.0L769.8 577.9L774.7 576.6L779.6 575.4L784.4 574.2L784.4 574.2L779.5 575.0L774.5 575.8L769.6 576.7L764.9 577.6L760.7 578.4L756.1 579.5L751.4 580.7L746.7 582.0L742.0 583.4L737.7 584.6L733.9 585.8" style="opacity:0.75"/><path d="M722 188L800 205L881 242C890 248 885 252 870 249L790 222L716 206" style="opacity:.7"/><path d="M762 215L820 240L872 270C880 285 870 290 850 272L790 232L760 214" style="opacity:.7"/><path d="M715 207C740 205 800 225 845 252L870 282" style="opacity:.7"/><path d="M866 242L880 270L906 327" style="opacity:.7"/></g></svg>
<div style="left:1209px;top:67px;width:1px;height:124px;background:#f00010;"></div>
<div style="left:1374px;top:67px;width:1px;height:124px;background:#f00010;"></div>
<div style="left:1195px;top:192px;width:240px;height:44px;background:#4c4c4c;"></div>
<div style="left:1200px;top:200px;width:85px;height:12px;background:#2e2e2e;border:1px solid #8a8a8a;border-radius:1px;"></div>
<svg style="left:1201px;top:201px" width="83" height="10"><path d="M0 10V7L41 5L83 0V10z" style="fill:#2e2e2e;stroke:none"/><path d="M0 0H83L41 4.500L0 8z" style="fill:#4c4c4c;stroke:none"/></svg>
<div style="left:1200px;top:220px;width:85px;height:12px;background:#2e2e2e;border:1px solid #8a8a8a;border-radius:1px;"></div>
<svg style="left:1201px;top:221px" width="83" height="10"><path d="M0 0L22 8C30 10 36 9 40 6L44 3C50 0 56 0 62 3L83 10V0z" style="fill:#4c4c4c;stroke:none"/></svg>
<div style="left:1241px;top:195px;width:3px;height:22px;background:#6a6a6a;border:1px solid #a0a0a0;border-radius:1px;"></div>
<div style="left:1242px;top:215px;width:3px;height:22px;background:#6a6a6a;border:1px solid #a0a0a0;border-radius:1px;"></div>
<div class="t" style="top:200.69px;font-size:11px;line-height:11px;color:#ececec;letter-spacing:0.647px;left:1307px;">50.0</div>
<div class="t" style="top:220.69px;font-size:11px;line-height:11px;color:#ececec;letter-spacing:0.569px;left:1314px;">0.0</div>
<svg style="left:1329.5px;top:194.0px;" width="24" height="24" viewBox="-12.0 -12.0 24 24"><circle r="7" style="stroke:#cacaca;stroke-width:1"/><path d="M-4 0H4" style="stroke:#cacaca;stroke-width:1.100"/></svg>
<svg style="left:1349.5px;top:194.0px;" width="24" height="24" viewBox="-12.0 -12.0 24 24"><circle r="7" style="stroke:#cacaca;stroke-width:1"/><path d="M-4 0H4M0 -4V4" style="stroke:#cacaca;stroke-width:1.100"/></svg>
<svg style="left:1369.5px;top:194.0px;" width="24" height="24" viewBox="-12.0 -12.0 24 24"><circle r="7" style="stroke:#cacaca;stroke-width:1"/><rect x="-3" y="-3" width="6" height="6" rx="1" style="fill:#cacaca;stroke:none"/></svg>
<div style="left:1393px;top:196px;width:1px;height:16px;background:#777;"></div>
<div style="left:1393px;top:217px;width:1px;height:16px;background:#777;"></div>
<svg style="left:1393.0px;top:194.0px;" width="24" height="24" viewBox="-12.0 -12.0 24 24"><g style="stroke:#cacaca;stroke-width:1.100"><rect x="-7" y="-7" width="8.500" height="8.500" rx="1"/><rect x="-1.500" y="-1.500" width="8.500" height="8.500" rx="1" style="fill:#4c4c4c"/><path d="M-4.500 -4.500L4.500 4.500M-4.500 -1.500V-4.500H-1.500M4.500 1.500V4.500H1.500"/></g></svg>
<svg style="left:1413.0px;top:194.0px;" width="24" height="24" viewBox="-12.0 -12.0 24 24"><g style="stroke:#cacaca;stroke-width:1.100"><rect x="-6.500" y="-6.500" width="13" height="13" rx="1"/><path d="M-3.500 -3.500L3.500 3.500M-3.500 -.5V-3.500H-.5M3.500 .5V3.500H.5"/></g></svg>
<svg style="left:1329.5px;top:214.0px;" width="24" height="24" viewBox="-12.0 -12.0 24 24"><path d="M-3.500 -5.500A6.300 6.300 0 1 1 -2 6" style="stroke:#cacaca;stroke-width:1.100"/><path d="M-7.500 -3L-2 -7.500L-2.500 -1z" style="fill:#cacaca;stroke:none"/></svg>
<svg style="left:1349.5px;top:214.0px;" width="24" height="24" viewBox="-12.0 -12.0 24 24"><path d="M3.500 -5.500A6.300 6.300 0 1 0 2 6" style="stroke:#cacaca;stroke-width:1.100" transform="translate(-1.500,0)"/><path d="M7.500 -3L2 -7.500L2.500 -1z" style="fill:#cacaca;stroke:none" transform="translate(-.5,1.500)"/></svg>
<svg style="left:1369.5px;top:214.0px;" width="24" height="24" viewBox="-12.0 -12.0 24 24"><circle r="6.500" style="stroke:#cacaca;stroke-width:1.100"/><circle r="1.500" style="fill:#cacaca;stroke:none"/><path d="M0 0V-8" style="stroke:#cacaca;stroke-width:1.100"/><path d="M-3.300 -7L-1.800 -4.500" style="stroke:#4c4c4c;stroke-width:2.200"/></svg>
<svg style="left:1393.0px;top:214.0px;" width="24" height="24" viewBox="-12.0 -12.0 24 24"><path d="M0 -7V7" style="stroke:#cacaca;stroke-width:1.100"/><path d="M-7 -4.500L-2.500 0L-7 4.500z" style="stroke:#cacaca;stroke-width:1"/><path d="M7 -4.500L2.500 0L7 4.500z" style="fill:#cacaca;stroke:#cacaca;stroke-width:1"/></svg>
<svg style="left:1413.0px;top:214.0px;" width="24" height="24" viewBox="-12.0 -12.0 24 24"><path d="M-7 0H7" style="stroke:#cacaca;stroke-width:1.100"/><path d="M-4.500 -7L0 -2.500L4.500 -7z" style="fill:#cacaca;stroke:#cacaca;stroke-width:1"/><path d="M-4.500 7L0 2.500L4.500 7z" style="stroke:#cacaca;stroke-width:1"/></svg>
<div style="left:1195px;top:240px;width:240px;height:190px;background:#404040;"></div>
<div style="left:1422px;top:260px;width:13px;height:170px;background:#444;"></div>
<div style="left:1195px;top:238px;width:240px;height:22px;background:#3a3a3a;"></div>
<div style="left:1214px;top:241px;width:98px;height:15px;background:#4e4e4e;"></div>
<div style="left:1313px;top:242px;width:29px;height:13px;background:#464646;"></div>
<div style="left:1343px;top:242px;width:29px;height:13px;background:#464646;"></div>
<div style="left:1195px;top:255px;width:240px;height:5px;background:#4e4e4e;"></div>
<svg style="left:1201px;top:244px;" width="8" height="7" viewBox="0 0 8 7"><path d="M0 .5h7M0 3.500h7M0 6.500h7" style="stroke:#8a8a8a;stroke-width:1;stroke-linecap:butt"/></svg>
<div class="t" style="top:244.69px;font-size:11px;line-height:11px;color:#dedede;letter-spacing:-0.439px;left:1242px;">Layer Property</div>
<svg style="left:1220.5px;top:243px;" width="16" height="16" viewBox="0 0 16 16"><g style="stroke:#c8c8c8;stroke-width:1.100"><path d="M1 5L8 1L15 5L8 9z"/><path d="M1 8L8 12L15 8"/><path d="M1 11L8 15L15 11"/></g></svg>
<svg style="left:1228px;top:251px;" width="10" height="10" viewBox="0 0 10 10"><rect x=".3" y=".3" width="9.500" height="9.500" style="fill:#4e4e4e;stroke:none"/><g style="stroke:#c8c8c8;stroke-width:.9"><circle cx="2.600" cy="2.800" r="1.300"/><circle cx="6.900" cy="2.800" r="1.500" style="fill:#9e9e9e;stroke:none"/><path d="M1.300 5.800L3.900 8.400M3.900 5.800L1.300 8.400"/><rect x="5.500" y="5.700" width="2.800" height="2.800" style="fill:#e0e0e0"/></g></svg>
<svg style="left:1313px;top:242px;overflow:hidden" width="29" height="13" viewBox="0 0 29 13"><g style="stroke:#7d7d7d;stroke-width:1.100"><path d="M8 9L15 4.500L22 9L15 13z"/><path d="M17 5.500A4 4 0 0 1 21 9.500"/><path d="M12 11.500H20" style="stroke-width:2.400"/></g></svg>
<svg style="left:1343px;top:242px;overflow:hidden" width="29" height="13" viewBox="0 0 29 13"><g style="stroke:#7d7d7d;stroke-width:1.100"><circle cx="16" cy="10" r="5.500"/><path d="M10 13L16 5V13z" style="fill:#7d7d7d;stroke:none"/></g></svg>
<div style="left:1200px;top:269px;width:4px;height:1px;background:#7a7a7a;"></div>
<div style="left:1238px;top:269px;width:180px;height:1px;background:#7a7a7a;"></div>
<div class="t" style="top:264.69px;font-size:11px;line-height:11px;color:#e4e4e4;letter-spacing:0.512px;left:1205px;">Effect</div>
<div style="left:1339px;top:277px;width:80px;height:20px;background:#4e4e4e;border:1px solid #777;border-radius:3px;"></div>
<svg style="left:1338.0px;top:275.0px;" width="24" height="24" viewBox="-12.0 -12.0 24 24"><circle r="6.800" style="stroke-width:1.200"/></svg>
<svg style="left:1360.0px;top:275.0px;" width="24" height="24" viewBox="-12.0 -12.0 24 24"><g style="fill:#c8c8c8;stroke:none"><rect x="-6" y="-6" width="1.400" height="1.400" /><rect x="-6" y="-2" width="1.400" height="1.400" /><rect x="-6" y="2" width="1.400" height="1.400" /><rect x="-6" y="6" width="1.400" height="1.400" /><rect x="-4" y="-4" width="1.400" height="1.400" /><rect x="-4" y="0" width="1.400" height="1.400" /><rect x="-4" y="4" width="1.400" height="1.400" /><rect x="-2" y="-6" width="1.400" height="1.400" /><rect x="-2" y="-2" width="1.400" height="1.400" /><rect x="-2" y="2" width="1.400" height="1.400" /><rect x="-2" y="6" width="1.400" height="1.400" /><rect x="0" y="-4" width="1.400" height="1.400" /><rect x="0" y="0" width="1.400" height="1.400" /><rect x="0" y="4" width="1.400" height="1.400" /><rect x="2" y="-6" width="1.400" height="1.400" /><rect x="2" y="-2" width="1.400" height="1.400" /><rect x="2" y="2" width="1.400" height="1.400" /><rect x="2" y="6" width="1.400" height="1.400" /><rect x="4" y="-4" width="1.400" height="1.400" /><rect x="4" y="0" width="1.400" height="1.400" /><rect x="4" y="4" width="1.400" height="1.400" /><rect x="6" y="-6" width="1.400" height="1.400" /><rect x="6" y="-2" width="1.400" height="1.400" /><rect x="6" y="2" width="1.400" height="1.400" /><rect x="6" y="6" width="1.400" height="1.400" /></g></svg>
<svg style="left:1382.0px;top:275.0px;" width="24" height="24" viewBox="-12.0 -12.0 24 24"><rect x="-6.500" y="-6.500" width="10" height="10" rx="2" style="fill:#9a9a9a;stroke:#c8c8c8;stroke-width:1.100"/><path d="M5 -3H5.500A1.500 1.500 0 0 1 7 -1.500V5.500A1.500 1.500 0 0 1 5.500 7H-1.500A1.500 1.500 0 0 1 -3 5.500V5" style="stroke-width:1.100"/></svg>
<svg style="left:1405.5px;top:276.5px" width="12" height="12" viewBox="-6 -6 12 12"><path d="M-3.5 2L0 -2L3.5 2" style="stroke:#cfcfcf;stroke-width:1.2"/></svg>
<svg style="left:1405.5px;top:285.5px" width="12" height="12" viewBox="-6 -6 12 12"><path d="M-3.5 -2L0 2L3.5 -2" style="stroke:#cfcfcf;stroke-width:1.2"/></svg>
<div style="left:1200px;top:306px;width:4px;height:1px;background:#7a7a7a;"></div>
<div style="left:1294px;top:306px;width:124px;height:1px;background:#7a7a7a;"></div>
<div class="t" style="top:301.69px;font-size:11px;line-height:11px;color:#e4e4e4;letter-spacing:0.293px;left:1205px;">Expression color</div>
<div style="left:1212px;top:317px;width:155px;height:20px;background:#555;border:1px solid #7c7c7c;border-radius:3px;"></div>
<svg style="left:1258px;top:319px;" width="18" height="16" viewBox="0 0 18 16"><circle cx="9" cy="5.500" r="4.300" style="fill:#e05252;stroke:none"/><circle cx="5.500" cy="10.500" r="4.300" style="fill:#52c452;stroke:none;opacity:.95"/><circle cx="12" cy="10.500" r="4.300" style="fill:#4f9be0;stroke:none;opacity:.95"/><path d="M9 7.500L7.800 9.200H10.200z" style="fill:#fff;stroke:#fff;stroke-width:1"/></svg>
<div class="t" style="top:321.69px;font-size:11px;line-height:11px;color:#e8e8e8;letter-spacing:0.343px;left:1279px;">Color</div>
<svg style="left:1353px;top:316.5px" width="12" height="12" viewBox="-6 -6 12 12"><path d="M-3.5 2L0 -2L3.5 2" style="stroke:#cfcfcf;stroke-width:1.2"/></svg>
<svg style="left:1353px;top:325.5px" width="12" height="12" viewBox="-6 -6 12 12"><path d="M-3.5 -2L0 2L3.5 -2" style="stroke:#cfcfcf;stroke-width:1.2"/></svg>
<div style="left:1195px;top:434px;width:240px;height:460px;background:#404040;"></div>
<div style="left:1422px;top:521px;width:13px;height:373px;background:#444;"></div>
<div style="left:1195px;top:432px;width:240px;height:17px;background:#3a3a3a;"></div>
<div style="left:1214px;top:435px;width:57px;height:15px;background:#4e4e4e;"></div>
<div style="left:1272px;top:436px;width:65px;height:13px;background:#464646;"></div>
<div style="left:1338px;top:436px;width:85px;height:13px;background:#464646;"></div>
<svg style="left:1201px;top:438px;" width="8" height="7" viewBox="0 0 8 7"><path d="M0 .5h7M0 3.500h7M0 6.500h7" style="stroke:#8a8a8a;stroke-width:1;stroke-linecap:butt"/></svg>
<div class="t" style="top:438.69px;font-size:11px;line-height:11px;color:#dedede;letter-spacing:-0.503px;left:1242px;">Layer</div>
<svg style="left:1272px;top:436px;overflow:hidden" width="65" height="13" viewBox="0 0 65 13"><g style="stroke:#7d7d7d;stroke-width:1.200"><path d="M9 5H19A3.500 3.500 0 0 1 19 12H11"/><path d="M11.500 2L8.500 5L11.500 8"/></g><text x="29" y="12" font-size="11" style="fill:#7d7d7d" textLength="32">History</text></svg>
<svg style="left:1338px;top:436px;overflow:hidden" width="85" height="13" viewBox="0 0 85 13"><g style="stroke:#7d7d7d;stroke-width:1.100"><path d="M8 6L20 3" style="stroke-width:2"/><rect x="8" y="8" width="12" height="8" style="stroke-dasharray:2 1.300"/></g><text x="29" y="12" font-size="11" style="fill:#7d7d7d" textLength="52">Auto Action</text></svg>
<div style="left:1195px;top:449px;width:240px;height:72px;background:#4c4c4c;"></div>
<div style="left:1214px;top:449px;width:57px;height:1px;background:#4e4e4e;"></div>
<svg style="left:1220px;top:437.5px;" width="16" height="16" viewBox="0 0 16 16"><g style="stroke:#c8c8c8;stroke-width:1.100"><path d="M1 5L8 1L15 5L8 9z"/><path d="M1 8L8 12L15 8"/><path d="M1 11L8 15L15 11"/></g></svg>
<div style="left:1196px;top:454px;width:39px;height:20px;background:#4e4e4e;border:1px solid #777;border-radius:3px;"></div>
<div style="left:1200px;top:457px;width:16px;height:14px;background:#5e5e5e;border:1px solid #c8c8c8;border-radius:2.500px;"></div>
<svg style="left:1220px;top:453.5px" width="12" height="12" viewBox="-6 -6 12 12"><path d="M-3.5 2L0 -2L3.5 2" style="stroke:#cfcfcf;stroke-width:1.2"/></svg>
<svg style="left:1220px;top:462.5px" width="12" height="12" viewBox="-6 -6 12 12"><path d="M-3.5 -2L0 2L3.5 -2" style="stroke:#cfcfcf;stroke-width:1.2"/></svg>
<div style="left:1238px;top:454px;width:77px;height:20px;background:#565656;border:1px solid #777;border-radius:3px;"></div>
<div class="t" style="top:458.69px;font-size:11px;line-height:11px;color:#eaeaea;letter-spacing:0.425px;left:1251px;">Normal</div>
<svg style="left:1300px;top:453.5px" width="12" height="12" viewBox="-6 -6 12 12"><path d="M-3.5 2L0 -2L3.5 2" style="stroke:#cfcfcf;stroke-width:1.2"/></svg>
<svg style="left:1300px;top:462.5px" width="12" height="12" viewBox="-6 -6 12 12"><path d="M-3.5 -2L0 2L3.5 -2" style="stroke:#cfcfcf;stroke-width:1.2"/></svg>
<svg style="left:1321px;top:459px" width="73" height="9"><rect x="0.00" y="0.0" width="4.97" height="4.600" style="fill:rgb(255,255,255);stroke:none"/><rect x="0.00" y="4.5" width="4.97" height="4.600" style="fill:rgb(193,193,193);stroke:none"/><rect x="4.87" y="0.0" width="4.97" height="4.600" style="fill:rgb(193,193,193);stroke:none"/><rect x="4.87" y="4.5" width="4.97" height="4.600" style="fill:rgb(250,250,250);stroke:none"/><rect x="9.73" y="0.0" width="4.97" height="4.600" style="fill:rgb(245,245,245);stroke:none"/><rect x="9.73" y="4.5" width="4.97" height="4.600" style="fill:rgb(192,192,192);stroke:none"/><rect x="14.60" y="0.0" width="4.97" height="4.600" style="fill:rgb(192,192,192);stroke:none"/><rect x="14.60" y="4.5" width="4.97" height="4.600" style="fill:rgb(240,240,240);stroke:none"/><rect x="19.47" y="0.0" width="4.97" height="4.600" style="fill:rgb(235,235,235);stroke:none"/><rect x="19.47" y="4.5" width="4.97" height="4.600" style="fill:rgb(191,191,191);stroke:none"/><rect x="24.33" y="0.0" width="4.97" height="4.600" style="fill:rgb(190,190,190);stroke:none"/><rect x="24.33" y="4.5" width="4.97" height="4.600" style="fill:rgb(230,230,230);stroke:none"/><rect x="29.20" y="0.0" width="4.97" height="4.600" style="fill:rgb(225,225,225);stroke:none"/><rect x="29.20" y="4.5" width="4.97" height="4.600" style="fill:rgb(189,189,189);stroke:none"/><rect x="34.07" y="0.0" width="4.97" height="4.600" style="fill:rgb(187,187,187);stroke:none"/><rect x="34.07" y="4.5" width="4.97" height="4.600" style="fill:rgb(220,220,220);stroke:none"/><rect x="38.93" y="0.0" width="4.97" height="4.600" style="fill:rgb(215,215,215);stroke:none"/><rect x="38.93" y="4.5" width="4.97" height="4.600" style="fill:rgb(186,186,186);stroke:none"/><rect x="43.80" y="0.0" width="4.97" height="4.600" style="fill:rgb(184,184,184);stroke:none"/><rect x="43.80" y="4.5" width="4.97" height="4.600" style="fill:rgb(210,210,210);stroke:none"/><rect x="48.67" y="0.0" width="4.97" height="4.600" style="fill:rgb(205,205,205);stroke:none"/><rect x="48.67" y="4.5" width="4.97" height="4.600" style="fill:rgb(183,183,183);stroke:none"/><rect x="53.53" y="0.0" width="4.97" height="4.600" style="fill:rgb(181,181,181);stroke:none"/><rect x="53.53" y="4.5" width="4.97" height="4.600" style="fill:rgb(200,200,200);stroke:none"/><rect x="58.40" y="0.0" width="4.97" height="4.600" style="fill:rgb(195,195,195);stroke:none"/><rect x="58.40" y="4.5" width="4.97" height="4.600" style="fill:rgb(179,179,179);stroke:none"/><rect x="63.27" y="0.0" width="4.97" height="4.600" style="fill:rgb(177,177,177);stroke:none"/><rect x="63.27" y="4.5" width="4.97" height="4.600" style="fill:rgb(190,190,190);stroke:none"/><rect x="68.13" y="0.0" width="4.97" height="4.600" style="fill:rgb(185,185,185);stroke:none"/><rect x="68.13" y="4.5" width="4.97" height="4.600" style="fill:rgb(175,175,175);stroke:none"/></svg>
<div style="left:1394px;top:455px;width:3px;height:20px;background:#6a6a6a;border:1px solid #a8a8a8;border-radius:1px;"></div>
<div class="t" style="top:458.69px;font-size:11px;line-height:11px;color:#eaeaea;letter-spacing:0.549px;left:1401px;">100</div>
<svg style="left:1421px;top:453.5px" width="12" height="12" viewBox="-6 -6 12 12"><path d="M-3.5 2L0 -2L3.5 2" style="stroke:#cfcfcf;stroke-width:1.2"/></svg>
<svg style="left:1421px;top:462.5px" width="12" height="12" viewBox="-6 -6 12 12"><path d="M-3.5 -2L0 2L3.5 -2" style="stroke:#cfcfcf;stroke-width:1.2"/></svg>
<svg style="left:1223.0px;top:474.0px;" width="24" height="24" viewBox="-12.0 -12.0 24 24"><rect x="-3.500" y="-6.500" width="10" height="10" rx="1.500" style="stroke:#c8c8c8;stroke-width:1.100;stroke-dasharray:2 1.400;stroke-linecap:butt"/><rect x="-6.500" y="-3" width="9.500" height="9.500" rx="1.500" style="fill:#8c8c8c;stroke:none"/></svg>
<svg style="left:1243.0px;top:474.0px;" width="24" height="24" viewBox="-12.0 -12.0 24 24"><path d="M-2 -3H2L3 7H-3z" style="fill:#c8c8c8;stroke:none"/><path d="M-1.500 -6.500H1.500V-3.500H-1.500z" style="fill:#c8c8c8;stroke:none"/><path d="M-7 -6.500L-3 -5M7 -6.500L3 -5M-7 -2L-3 -3.500M7 -2L3 -3.500" style="stroke:#c8c8c8;stroke-width:1"/></svg>
<svg style="left:1263.0px;top:474.0px;" width="24" height="24" viewBox="-12.0 -12.0 24 24"><path d="M-6 -6.500H0V2L-3 5.500L-6 2z" style="stroke:#c8c8c8;stroke-width:1.100"/><path d="M-4.500 -4L-3 -1.500L-1.500 -4V1L-3 3L-4.500 1z" style="fill:#c8c8c8;stroke:none"/><path d="M-1 6C2 6 3 4 3.500 2.500M1.500 3L3.800 2L5.500 4.500" style="stroke:#c8c8c8;stroke-width:1.100"/></svg>
<svg style="left:1283.0px;top:474.0px;" width="24" height="24" viewBox="-12.0 -12.0 24 24"><rect x="-5" y="-1.500" width="10" height="8" rx="1" style="fill:#c8c8c8;stroke:none"/><path d="M-3 -1.500V-3.500A3 3 0 0 1 3 -3.500V-1.500" style="stroke:#c8c8c8;stroke-width:1.400"/></svg>
<svg style="left:1303.0px;top:474.0px;" width="24" height="24" viewBox="-12.0 -12.0 24 24"><rect x="-7" y="0" width="7" height="6.500" rx="1" style="fill:#c8c8c8;stroke:none"/><path d="M-5.500 0V-1.500A2 2 0 0 1 -1.500 -1.500V0" style="stroke:#c8c8c8;stroke-width:1.200"/><g style="fill:#c8c8c8;stroke:none"><rect x="0" y="-6.500" width="3.300" height="3.300"/><rect x="3.300" y="-3.200" width="3.300" height="3.300"/><rect x="0" y=".1" width="3.300" height="3.300" style="opacity:.6"/><rect x="3.300" y="3.400" width="3.300" height="3.300" style="opacity:.6"/><rect x="3.300" y="-6.500" width="3.300" height="3.300" style="opacity:.35"/></g></svg>
<div style="left:1326px;top:475px;width:35px;height:20px;background:#515151;border-radius:3px;"></div>
<svg style="left:1326.0px;top:474.0px;" width="24" height="24" viewBox="-12.0 -12.0 24 24"><circle cx="-1" cy="-1" r="5" style="stroke:#757575;stroke-width:3"/><path d="M2.500 3L6.500 7M6.500 3L2.500 7" style="stroke:#757575;stroke-width:1.100"/></svg>
<svg style="left:1346.5px;top:474.5px" width="12" height="12" viewBox="-6 -6 12 12"><path d="M-3.5 2L0 -2L3.5 2" style="stroke:#757575;stroke-width:1.2"/></svg>
<svg style="left:1346.5px;top:483.5px" width="12" height="12" viewBox="-6 -6 12 12"><path d="M-3.5 -2L0 2L3.5 -2" style="stroke:#757575;stroke-width:1.2"/></svg>
<div style="left:1363px;top:475px;width:35px;height:20px;background:#515151;border-radius:3px;"></div>
<svg style="left:1363.0px;top:474.0px;" width="24" height="24" viewBox="-12.0 -12.0 24 24"><path d="M-6.500 -6.500H5L-6.500 5z" style="fill:#757575;stroke:none"/><path d="M2.500 3L6.500 7M6.500 3L2.500 7" style="stroke:#757575;stroke-width:1.100"/></svg>
<svg style="left:1383.5px;top:474.5px" width="12" height="12" viewBox="-6 -6 12 12"><path d="M-3.5 2L0 -2L3.5 2" style="stroke:#757575;stroke-width:1.2"/></svg>
<svg style="left:1383.5px;top:483.5px" width="12" height="12" viewBox="-6 -6 12 12"><path d="M-3.5 -2L0 2L3.5 -2" style="stroke:#757575;stroke-width:1.2"/></svg>
<div style="left:1399px;top:475px;width:36px;height:20px;background:#505050;border:1px solid #8c8c8c;border-radius:3px;"></div>
<div style="left:1408px;top:483px;width:9px;height:9px;background:#fff;"></div>
<div style="left:1403px;top:478px;width:9px;height:9px;background:#3a8cf0;border-right:1px solid #505050;border-bottom:1px solid #505050;"></div>
<svg style="left:1421px;top:474.5px" width="12" height="12" viewBox="-6 -6 12 12"><path d="M-3.5 2L0 -2L3.5 2" style="stroke:#cfcfcf;stroke-width:1.2"/></svg>
<svg style="left:1421px;top:483.5px" width="12" height="12" viewBox="-6 -6 12 12"><path d="M-3.5 -2L0 2L3.5 -2" style="stroke:#cfcfcf;stroke-width:1.2"/></svg>
<svg style="left:1193.0px;top:497.0px;" width="24" height="24" viewBox="-12.0 -12.0 24 24"><g style="stroke:#c8c8c8;stroke-width:1.100"><rect x="-6.500" y="-6" width="13" height="5.500" rx="1"/><rect x="-6.500" y="1" width="13" height="5.500" rx="1"/><path d="M-4.500 -3.200h1.500M-4.500 3.800h1.500"/></g></svg>
<svg style="left:1274.0px;top:497.0px;" width="24" height="24" viewBox="-12.0 -12.0 24 24"><path d="M-7.500 -7.500H4A1 1 0 0 1 5 -6.500V1M-7.500 -7.500V5.500H1" style="stroke:#c8c8c8;stroke-width:1.100"/><path d="M-7.500 2L-4 5.500" style="stroke:#c8c8c8;stroke-width:1"/><circle cx="4.5" cy="4.5" r="3.600" style="fill:#4c4c4c;stroke:#c8c8c8;stroke-width:1.100"/><path d="M2.5 4.5L6.5 4.5M4.5 2.5L4.5 6.5" style="stroke:#c8c8c8;stroke-width:1;stroke-linecap:butt"/></svg>
<svg style="left:1294.0px;top:497.0px;" width="24" height="24" viewBox="-12.0 -12.0 24 24"><path d="M-7.500 -7.500H4A1 1 0 0 1 5 -6.500V1M-7.500 -7.500V5.500H1" style="stroke:#c8c8c8;stroke-width:1.100"/><circle cx="-1.500" cy="-1.500" r="3.500" style="stroke:#c8c8c8;stroke-width:1"/><path d="M-4.500 -3L-1.500 -1.500L1.500 -3M-1.500 -1.500V2" style="stroke:#c8c8c8;stroke-width:.8"/><circle cx="4.5" cy="4.5" r="3.600" style="fill:#4c4c4c;stroke:#c8c8c8;stroke-width:1.100"/><path d="M2.5 4.5L6.5 4.5M4.5 2.5L4.5 6.5" style="stroke:#c8c8c8;stroke-width:1;stroke-linecap:butt"/></svg>
<svg style="left:1314.0px;top:497.0px;" width="24" height="24" viewBox="-12.0 -12.0 24 24"><path d="M-8 -6.500H-3L-2 -4.500H5.500V5H-8z" style="fill:#c8c8c8;stroke:#c8c8c8;stroke-width:1"/><circle cx="5.5" cy="4.5" r="3.600" style="fill:#4c4c4c;stroke:#c8c8c8;stroke-width:1.100"/><path d="M3.5 4.5L7.5 4.5M5.5 2.5L5.5 6.5" style="stroke:#c8c8c8;stroke-width:1;stroke-linecap:butt"/></svg>
<svg style="left:1334.0px;top:497.0px;" width="24" height="24" viewBox="-12.0 -12.0 24 24"><g style="stroke:#757575;stroke-width:1.100"><rect x="-1.500" y="-7.500" width="9" height="9" rx="1"/><rect x="1" y="-5" width="4" height="4" style="fill:#757575"/><rect x="-7.500" y="-1.500" width="9" height="9" rx="1" style="fill:#4c4c4c"/><path d="M-5 4.500H-1V1.500M-1 4.500L-3 2.500"/></g></svg>
<svg style="left:1354.0px;top:497.0px;" width="24" height="24" viewBox="-12.0 -12.0 24 24"><g style="stroke:#c8c8c8;stroke-width:1.100"><rect x="-1.500" y="-7.500" width="9" height="9" rx="1"/><rect x="-7.500" y="-1.500" width="9" height="9" rx="1" style="fill:#4c4c4c"/><path d="M-.5 .5L-5 5M-5 1.500V5H-1.500"/></g></svg>
<svg style="left:1373.0px;top:497.0px;" width="24" height="24" viewBox="-12.0 -12.0 24 24"><rect x="-7" y="-7" width="14" height="14" rx="2" style="fill:#c8c8c8;stroke:none"/><circle r="3.800" style="fill:#2a2a2a;stroke:none"/></svg>
<svg style="left:1393.0px;top:497.0px;" width="24" height="24" viewBox="-12.0 -12.0 24 24"><g style="stroke:#757575;stroke-width:1.100"><rect x="-7.500" y="-6" width="9" height="9" rx="1"/><path d="M-5.500 -1.500H-2M-4 -3L-5.500 -1.500L-4 0"/></g><rect x="-1.500" y="-2.500" width="9.500" height="8" rx="1.500" style="fill:#757575;stroke:none"/><circle cx="3.300" cy="1.500" r="2.200" style="fill:#4c4c4c;stroke:none"/></svg>
<svg style="left:1413.0px;top:497.0px;" width="24" height="24" viewBox="-12.0 -12.0 24 24"><g style="stroke:#c8c8c8;stroke-width:1.100"><path d="M-5.500 -4h11M-2 -4v-2h4v2M-4.500 -4l.7 10.500h7.600l.7-10.500M-1.700 -1.500v6M1.700 -1.500v6"/></g></svg>
<div style="left:1195px;top:521px;width:227px;height:1px;background:#2c2c2c;"></div>
<div style="left:1234px;top:522px;width:188px;height:32px;background:#5f6986;"></div>
<div style="left:1195px;top:554px;width:227px;height:1px;background:#2c2c2c;"></div>
<div style="left:1195px;top:587px;width:227px;height:1px;background:#2c2c2c;"></div>
<div style="left:1215px;top:522px;width:1px;height:65px;background:#2c2c2c;"></div>
<div style="left:1233px;top:522px;width:1px;height:65px;background:#2c2c2c;"></div>
<svg style="left:1193.0px;top:526.0px;" width="24" height="24" viewBox="-12.0 -12.0 24 24"><path d="M-6.500 .5C-3.500 -4 3.500 -4 6.500 .5" style="stroke-width:1.200"/><path d="M-6.500 .5C-3.500 4 3.500 4 6.500 .5" style="stroke-width:.9"/><circle cy=".3" r="2.300" class="f"/></svg>
<svg style="left:1193.0px;top:558.5px;" width="24" height="24" viewBox="-12.0 -12.0 24 24"><path d="M-6.500 .5C-3.500 -4 3.500 -4 6.500 .5" style="stroke-width:1.200"/><path d="M-6.500 .5C-3.500 4 3.500 4 6.500 .5" style="stroke-width:.9"/><circle cy=".3" r="2.300" class="f"/></svg>
<svg style="left:1212.0px;top:526.0px;" width="24" height="24" viewBox="-12.0 -12.0 24 24"><path d="M-5.500 4L-4 .5L3.500 -7L6 -4.500L-1.500 3z" class="f"/><path d="M-6.500 6.500H6.500" style="stroke-width:1.100"/></svg>
<div style="left:1220px;top:566px;width:9px;height:9px;border:1px solid #555;border-radius:2px;"></div>
<div style="left:1237px;top:523px;width:40px;height:30px;background:#2e2e2e;border:1px solid #e8e8e8;"></div>
<svg style="left:1240px;top:528px;overflow:hidden" width="35" height="19.500"><rect x="0.0" y="0.0" width="4" height="4" style="fill:#fff;stroke:none"/><rect x="0.0" y="3.9" width="4" height="4" style="fill:#cfcfcf;stroke:none"/><rect x="0.0" y="7.8" width="4" height="4" style="fill:#fff;stroke:none"/><rect x="0.0" y="11.7" width="4" height="4" style="fill:#cfcfcf;stroke:none"/><rect x="0.0" y="15.6" width="4" height="4" style="fill:#fff;stroke:none"/><rect x="3.9" y="0.0" width="4" height="4" style="fill:#cfcfcf;stroke:none"/><rect x="3.9" y="3.9" width="4" height="4" style="fill:#fff;stroke:none"/><rect x="3.9" y="7.8" width="4" height="4" style="fill:#cfcfcf;stroke:none"/><rect x="3.9" y="11.7" width="4" height="4" style="fill:#fff;stroke:none"/><rect x="3.9" y="15.6" width="4" height="4" style="fill:#cfcfcf;stroke:none"/><rect x="7.8" y="0.0" width="4" height="4" style="fill:#fff;stroke:none"/><rect x="7.8" y="3.9" width="4" height="4" style="fill:#cfcfcf;stroke:none"/><rect x="7.8" y="7.8" width="4" height="4" style="fill:#fff;stroke:none"/><rect x="7.8" y="11.7" width="4" height="4" style="fill:#cfcfcf;stroke:none"/><rect x="7.8" y="15.6" width="4" height="4" style="fill:#fff;stroke:none"/><rect x="11.7" y="0.0" width="4" height="4" style="fill:#cfcfcf;stroke:none"/><rect x="11.7" y="3.9" width="4" height="4" style="fill:#fff;stroke:none"/><rect x="11.7" y="7.8" width="4" height="4" style="fill:#cfcfcf;stroke:none"/><rect x="11.7" y="11.7" width="4" height="4" style="fill:#fff;stroke:none"/><rect x="11.7" y="15.6" width="4" height="4" style="fill:#cfcfcf;stroke:none"/><rect x="15.6" y="0.0" width="4" height="4" style="fill:#fff;stroke:none"/><rect x="15.6" y="3.9" width="4" height="4" style="fill:#cfcfcf;stroke:none"/><rect x="15.6" y="7.8" width="4" height="4" style="fill:#fff;stroke:none"/><rect x="15.6" y="11.7" width="4" height="4" style="fill:#cfcfcf;stroke:none"/><rect x="15.6" y="15.6" width="4" height="4" style="fill:#fff;stroke:none"/><rect x="19.5" y="0.0" width="4" height="4" style="fill:#cfcfcf;stroke:none"/><rect x="19.5" y="3.9" width="4" height="4" style="fill:#fff;stroke:none"/><rect x="19.5" y="7.8" width="4" height="4" style="fill:#cfcfcf;stroke:none"/><rect x="19.5" y="11.7" width="4" height="4" style="fill:#fff;stroke:none"/><rect x="19.5" y="15.6" width="4" height="4" style="fill:#cfcfcf;stroke:none"/><rect x="23.4" y="0.0" width="4" height="4" style="fill:#fff;stroke:none"/><rect x="23.4" y="3.9" width="4" height="4" style="fill:#cfcfcf;stroke:none"/><rect x="23.4" y="7.8" width="4" height="4" style="fill:#fff;stroke:none"/><rect x="23.4" y="11.7" width="4" height="4" style="fill:#cfcfcf;stroke:none"/><rect x="23.4" y="15.6" width="4" height="4" style="fill:#fff;stroke:none"/><rect x="27.3" y="0.0" width="4" height="4" style="fill:#cfcfcf;stroke:none"/><rect x="27.3" y="3.9" width="4" height="4" style="fill:#fff;stroke:none"/><rect x="27.3" y="7.8" width="4" height="4" style="fill:#cfcfcf;stroke:none"/><rect x="27.3" y="11.7" width="4" height="4" style="fill:#fff;stroke:none"/><rect x="27.3" y="15.6" width="4" height="4" style="fill:#cfcfcf;stroke:none"/><rect x="31.2" y="0.0" width="4" height="4" style="fill:#fff;stroke:none"/><rect x="31.2" y="3.9" width="4" height="4" style="fill:#cfcfcf;stroke:none"/><rect x="31.2" y="7.8" width="4" height="4" style="fill:#fff;stroke:none"/><rect x="31.2" y="11.7" width="4" height="4" style="fill:#cfcfcf;stroke:none"/><rect x="31.2" y="15.6" width="4" height="4" style="fill:#fff;stroke:none"/><path d="M12 8C14 5 19 5 21 9C22 13 17 15 14 14" style="stroke:#9be08a;stroke-width:.7;opacity:.6"/></svg>
<div style="left:1240px;top:558px;width:35px;height:26px;background:#fff;border:1px solid #2a2a2a;"></div>
<div style="left:1286px;top:558px;width:18px;height:18px;background:#fff;border:1px solid #2a2a2a;"></div>
<svg style="left:1288px;top:560px;" width="14" height="14" viewBox="0 0 14 14"><path d="M3 1.500H10.500V12.500H6L3 9.500z" style="stroke:#222;stroke-width:1.200"/><path d="M3 9.500H6V12.500z" style="fill:#222;stroke:#222;stroke-width:.6"/></svg>
<div class="t" style="top:526.69px;font-size:11px;line-height:11px;color:#f0f0f0;letter-spacing:0.109px;left:1282px;">100 % Normal</div>
<div class="t" style="top:539.69px;font-size:11px;line-height:11px;color:#f0f0f0;letter-spacing:0.044px;left:1282px;">Layer 1</div>
<div class="t" style="top:572.69px;font-size:11px;line-height:11px;color:#dedede;letter-spacing:0.129px;left:1307px;">Paper</div>
</body></html>
